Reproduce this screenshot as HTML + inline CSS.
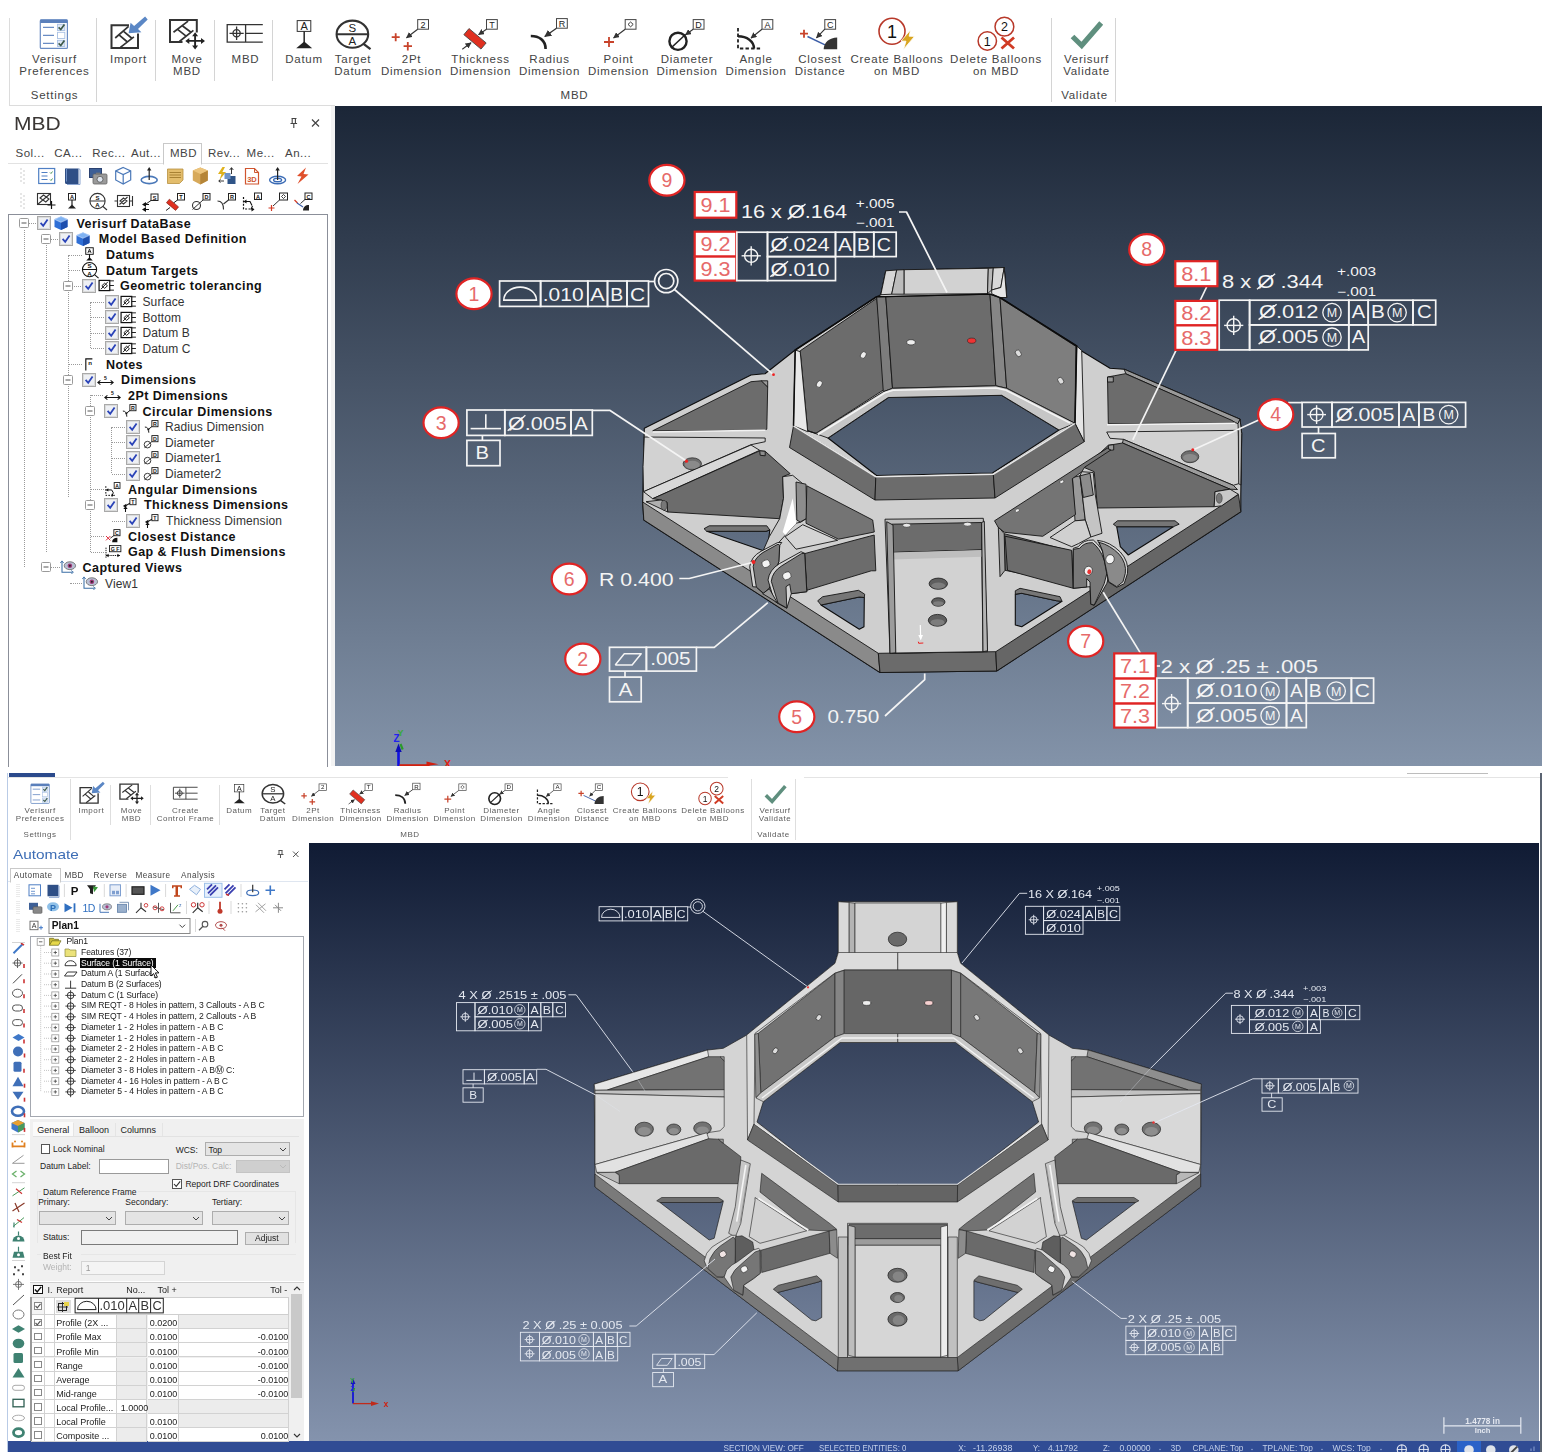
<!DOCTYPE html>
<html><head><meta charset="utf-8"><title>Verisurf MBD</title>
<style>
html,body{margin:0;padding:0;background:#fff;}
body{width:1542px;height:1452px;position:relative;overflow:hidden;font-family:"Liberation Sans",sans-serif;color:#444;}
.abs{position:absolute;}
.vp1{position:absolute;left:335px;top:106px;width:1207px;height:660px;background:linear-gradient(180deg,#1b2637 0%,#8393a9 100%);overflow:hidden;}
.vp2{position:absolute;left:309px;top:843px;width:1230px;height:598px;background:linear-gradient(180deg,#101b34 0%,#8493ad 100%);overflow:hidden;}
svg{position:absolute;left:0;top:0;overflow:visible;}
.rl{position:absolute;text-align:center;font-size:11.5px;line-height:12.3px;letter-spacing:.75px;color:#444;white-space:nowrap;transform:translateX(-50%);}
.rl2{position:absolute;text-align:center;font-size:8px;line-height:8.3px;letter-spacing:.5px;color:#5c5c5c;white-space:nowrap;transform:translateX(-50%);filter:blur(.3px)}
.vs{position:absolute;width:1px;background:#d4d4d4;}
.t1{position:absolute;white-space:nowrap;font-size:12.5px;color:#222;line-height:16px;letter-spacing:-.2px}
.t1 b{letter-spacing:-.1px;color:#111}
.t2{position:absolute;white-space:nowrap;font-size:8.8px;color:#222;line-height:11px;letter-spacing:-.1px}
.f2{position:absolute;white-space:nowrap;font-size:8.6px;color:#222;line-height:10px;}
.inp{position:absolute;background:#fff;border:1px solid #9a9a9a;box-sizing:border-box;}
.cmb{position:absolute;background:#e4e4e4;border:1px solid #adadad;box-sizing:border-box;}
</style></head>
<body>
<!-- ===== top screenshot layout ===== -->
<div class="vp1" id="vp1"></div>
<div class="abs" style="left:9px;top:18px;width:1px;height:88px;background:#dcdcdc"></div>
<div class="abs" style="left:9px;top:105px;width:326px;height:1px;background:#dcdcdc"></div>
<div class="abs" style="left:331px;top:106px;width:4px;height:660px;background:#f3f3f3"></div>
<!-- ===== bottom screenshot layout ===== -->
<div class="vp2" id="vp2"></div>
<div class="abs" style="left:7px;top:773px;width:1px;height:679px;background:#b9cbe6"></div>
<div class="abs" style="left:9px;top:773px;width:46px;height:4px;background:#2b4a8c"></div>
<div class="abs" style="left:8px;top:1441px;width:1532px;height:11px;background:#304c94"></div>
<div class="abs" style="left:1540px;top:773px;width:2px;height:679px;background:#5b6472"></div>
<div class="abs" style="left:1407px;top:773px;width:81px;height:1px;background:#bdbdbd"></div>

<!-- ===== top ribbon ===== -->
<div class="vs" style="left:96px;top:18px;height:84px"></div>
<div class="vs" style="left:155px;top:20px;height:61px"></div>
<div class="vs" style="left:214px;top:20px;height:61px"></div>
<div class="vs" style="left:272px;top:20px;height:61px"></div>
<div class="vs" style="left:1051px;top:18px;height:84px"></div>
<div class="vs" style="left:1115px;top:18px;height:84px"></div>
<div class="rl" style="left:54.5px;top:52.5px">Verisurf<br>Preferences</div>
<div class="rl" style="left:128.5px;top:52.5px">Import</div>
<div class="rl" style="left:187px;top:52.5px">Move<br>MBD</div>
<div class="rl" style="left:245.5px;top:52.5px">MBD</div>
<div class="rl" style="left:304px;top:52.5px">Datum</div>
<div class="rl" style="left:353px;top:52.5px">Target<br>Datum</div>
<div class="rl" style="left:411.5px;top:52.5px">2Pt<br>Dimension</div>
<div class="rl" style="left:480.5px;top:52.5px">Thickness<br>Dimension</div>
<div class="rl" style="left:549.5px;top:52.5px">Radius<br>Dimension</div>
<div class="rl" style="left:618.5px;top:52.5px">Point<br>Dimension</div>
<div class="rl" style="left:687px;top:52.5px">Diameter<br>Dimension</div>
<div class="rl" style="left:756px;top:52.5px">Angle<br>Dimension</div>
<div class="rl" style="left:820px;top:52.5px">Closest<br>Distance</div>
<div class="rl" style="left:897px;top:52.5px">Create Balloons<br>on MBD</div>
<div class="rl" style="left:996px;top:52.5px">Delete Balloons<br>on MBD</div>
<div class="rl" style="left:1086.5px;top:52.5px">Verisurf<br>Validate</div>
<div class="rl" style="left:54.5px;top:88.5px">Settings</div>
<div class="rl" style="left:574.5px;top:88.5px">MBD</div>
<div class="rl" style="left:1084.5px;top:88.5px">Validate</div>

<svg width="1542" height="106" viewBox="0 0 1542 106" style="left:0;top:0" font-family="Liberation Sans, sans-serif">
<defs>
<marker id="ah" viewBox="0 0 10 10" refX="9" refY="5" markerWidth="5.5" markerHeight="5.5" orient="auto"><path d="M0,0 L10,5 L0,10 z" fill="#333"/></marker>
</defs>
<!-- prefs -->
<g id="ic-prefs">
<g>
<rect x="40.300" y="19.900" width="27.100" height="28.500" rx="1" fill="#fff" stroke="#6a8cc4" stroke-width="1.200"/>
<rect x="40.300" y="19.600" width="27.100" height="3.400" fill="#5b80bb"/>
<g stroke="#6a8cc4" stroke-width="1.200"><path d="M43 27.400h11M43 35.400h11M43 43.300h11"/></g>
<g fill="#dfe8f6" stroke="#a8c0e4" stroke-width=".9"><rect x="57.500" y="24.300" width="7.300" height="6.200"/><rect x="57.500" y="32.300" width="7.300" height="6.200" fill="#fff"/><rect x="57.500" y="40.300" width="7.300" height="6.200"/></g>
<g fill="none" stroke="#3e5a4a" stroke-width="1.700"><path d="M58.600 27.300l2.200 2.200 3.600-5M58.600 43.300l2.200 2.200 3.600-5"/></g>
</g>
</g>
<!-- import -->
<g id="ic-import">
<g fill="none" stroke="#333" stroke-width="2" stroke-linecap="square">
<path d="M128 25.2H111.500V48H138V34.500"/>
<path d="M115.200 38L128.600 26.300M120.400 47.400L133.900 36.800M119.300 35.100l7.500 6.400M123.900 31.600l7.600 6.400" stroke-width="1.700" stroke-linecap="butt"/>
</g>
<path d="M147.700 19.400l-2.600-2.800-11 9.400-3.500-3.200-2 10.500 12.800-1.100-3.400-3.200z" fill="#5b87c5"/>
</g>
<!-- move mbd -->
<g id="ic-move">
<g fill="none" stroke="#333" stroke-width="2" stroke-linecap="square">
<path d="M181.500 42H170V20H196.800V31.500"/>
<path d="M173.500 32.200L188.100 21.100M179.400 41.500L193.400 30.400M177.600 29.300l8.800 7M182.300 25.800l8.700 6.400" stroke-width="1.700" stroke-linecap="butt"/>
</g>
<g stroke="#fff" stroke-width="4.500" fill="none"><path d="M195.100 34v14M187 40.900h16"/></g>
<g stroke="#222" stroke-width="1.900" fill="#222"><path d="M195.100 35v11.800M188.500 40.900h13.200" fill="none"/><path d="M195.100 32.300l3 4h-6zM195.100 49.500l3-4h-6zM185.300 40.900l4-3v6zM205 40.900l-4-3v6z" stroke="none"/></g>
</g>
<!-- MBD frame -->
<g id="ic-mbd">
<g fill="none" stroke="#333" stroke-width="1.300">
<path d="M262.800 24.600H227.200V42.100H262.800M245.600 24.600v17.500M245.600 33.300h17.200"/>
<circle cx="236.600" cy="33.300" r="3.600"/><path d="M229.500 33.300h14.200M236.600 26.600v13.400"/>
</g>
</g>
<!-- datum -->
<g id="ic-datum">
<g>
<rect x="297.200" y="20.600" width="13.600" height="10.800" fill="#fff" stroke="#333" stroke-width="1"/>
<text x="304.2" y="30" font-size="11" text-anchor="middle" fill="#222">A</text>
<path d="M304.2 31v12" stroke="#333" stroke-width="1.6"/>
<path d="M304.2 41.5l8 6.7h-16z" fill="#222"/>
</g>
</g>
<!-- target datum -->
<g id="ic-tdatum">
<g fill="none" stroke="#333" stroke-width="1.7">
<ellipse cx="352.4" cy="34.2" rx="15.800" ry="13.600" stroke-width="2.100"/><path d="M336.600 34.200h31.600" stroke-width="1.900"/><path d="M363.500 43.800l7 5.400" stroke-width="2.300"/>
</g>
<text x="352.4" y="31.800" font-size="11.500" text-anchor="middle" fill="#222">S</text>
<text x="352.4" y="45.200" font-size="11.500" text-anchor="middle" fill="#222">A</text>
</g>
<!-- 2pt -->
<g id="ic-p2">
<g>
<rect x="417.7" y="19.6" width="10.8" height="9.6" fill="#fff" stroke="#444" stroke-width="1"/><text x="423.1" y="27.8" font-size="9" text-anchor="middle" fill="#222">2</text>
<path d="M417.7 29.2L406.5 37.8" stroke="#333" stroke-width="1.1" marker-end="url(#ah)"/>
<g stroke="#c8432b" stroke-width="1.8"><path d="M395.7 33.2v8M391.7 37.2h8M407.8 42v8.4M403.6 46.2h8.4"/></g>
</g>
</g>
<!-- thickness -->
<g id="ic-thk">
<g>
<rect x="486.5" y="19.6" width="10.8" height="9.6" fill="#fff" stroke="#444" stroke-width="1"/><text x="491.9" y="27.8" font-size="9" text-anchor="middle" fill="#222">T</text>
<path d="M486.5 29.2L478.6 34.6" stroke="#333" stroke-width="1.1" marker-end="url(#ah)"/>
<path d="M462.3 49.3L471 42.8" stroke="#333" stroke-width="1.1" marker-end="url(#ah)"/>
<rect x="463.800" y="34.800" width="22.400" height="8" transform="rotate(40 475 38.8)" fill="#e03020" stroke="#444" stroke-width=".8"/>
</g>
</g>
<!-- radius -->
<g id="ic-rad">
<g>
<rect x="556.5" y="18.6" width="10.8" height="9.6" fill="#fff" stroke="#444" stroke-width="1"/><text x="561.9" y="26.8" font-size="9" text-anchor="middle" fill="#222">R</text>
<path d="M556.5 28.2L544.8 36.5" stroke="#333" stroke-width="1.3" marker-end="url(#ah)"/>
<path d="M530.8 36c8 0 14.8 4 14.8 13" fill="none" stroke="#222" stroke-width="2.6"/>
</g>
</g>
<!-- point -->
<g id="ic-pt">
<g>
<rect x="625.2" y="19.6" width="10.8" height="9.6" fill="#fff" stroke="#444" stroke-width="1"/><path d="M630.6 22l2.6 2.4-2.6 2.4-2.6-2.4z" fill="none" stroke="#222" stroke-width=".9"/>
<path d="M625.2 29.2L613.6 38" stroke="#333" stroke-width="1.1" marker-end="url(#ah)"/>
<g stroke="#c8432b" stroke-width="1.8"><path d="M609 37v10M604 42h10"/></g>
</g>
</g>
<!-- diameter -->
<g id="ic-dia">
<g>
<rect x="693.2" y="19.6" width="10.8" height="9.6" fill="#fff" stroke="#444" stroke-width="1"/><text x="698.6" y="27.8" font-size="9" text-anchor="middle" fill="#222">D</text>
<path d="M693.2 29.2L685.5 34.8" stroke="#333" stroke-width="1.1" marker-end="url(#ah)"/>
<circle cx="678" cy="41.3" r="8.6" fill="none" stroke="#222" stroke-width="2.4"/><path d="M671 48l14.5-13.5" stroke="#222" stroke-width="1.6"/>
</g>
</g>
<!-- angle -->
<g id="ic-ang">
<g>
<rect x="762" y="19.6" width="10.8" height="9.6" fill="#fff" stroke="#444" stroke-width="1"/><text x="767.4" y="27.8" font-size="9" text-anchor="middle" fill="#222">A</text>
<path d="M762 29.2L751 38" stroke="#333" stroke-width="1.1" marker-end="url(#ah)"/>
<path d="M738 28v20.5h24" fill="none" stroke="#222" stroke-width="1.8" stroke-dasharray="3.4 2.2"/>
<path d="M738 36.3c9 0 16 5 16 12.2" fill="none" stroke="#222" stroke-width="2.4"/>
</g>
</g>
<!-- closest -->
<g id="ic-cls">
<g>
<rect x="824.8" y="19.6" width="10.8" height="9.6" fill="#fff" stroke="#444" stroke-width="1"/><text x="830.2" y="27.8" font-size="9" text-anchor="middle" fill="#222">C</text>
<path d="M824.8 29.2L816.5 37.8" stroke="#333" stroke-width="1.1" marker-end="url(#ah)"/>
<g stroke="#c8432b" stroke-width="1.8"><path d="M804 29.7v8M800 33.7h8"/></g>
<path d="M807.5 36.5L825 44.8" stroke="#3d5fa8" stroke-width="1.4"/>
<path d="M837.2 49.3v-11.8c-7.5 0-13.5 5-13.5 11.8z" fill="#333"/>
</g>
</g>
<!-- create balloons -->
<g id="ic-cb">
<g>
<circle cx="892" cy="31.3" r="13" fill="#fff" stroke="#b8392a" stroke-width="1.6"/>
<text x="892" y="37.8" font-size="18" text-anchor="middle" fill="#111">1</text>
<path d="M910.5 30l-9.5 11 5 .2-2.5 8.2 11-13-5.4-.2z" fill="#d9a520" stroke="#fff" stroke-width=".8"/>
</g>
</g>
<!-- delete balloons -->
<g id="ic-db">
<g>
<circle cx="1004.4" cy="26.7" r="9.4" fill="#fff" stroke="#b8392a" stroke-width="1.5"/>
<text x="1004.4" y="31.4" font-size="12.5" text-anchor="middle" fill="#111">2</text>
<circle cx="987.3" cy="41" r="9.2" fill="#fff" stroke="#b8392a" stroke-width="1.5"/>
<text x="987.3" y="45.6" font-size="12.5" text-anchor="middle" fill="#111">1</text>
<path d="M1001.5 37.5l12.5 11M1014 37.5l-12.5 11" stroke="#d03b24" stroke-width="2.8"/>
</g>
</g>
<!-- validate -->
<g id="ic-val">
<path d="M1072.5 36.5l9.2 9 19.5-22.5" fill="none" stroke="#5f8f7e" stroke-width="5.2"/>
</g>
</svg>

<!-- ===== top-left MBD panel ===== -->
<div class="abs" style="left:13.5px;top:111.5px;font-size:17.5px;color:#3a3634;line-height:24px;transform:scaleX(1.2);transform-origin:0 0">MBD</div>
<svg width="40" height="16" viewBox="0 0 40 16" style="left:286px;top:115px"><g fill="none" stroke="#444" stroke-width="1.1"><path d="M5.5 3.5h5M6.2 3.5v5M9.4 3.5v5M4.5 8.5h6.6M7.8 8.5v4.5"/><path d="M26 4.5l7 7M33 4.5l-7 7" stroke-width="1.2"/></g></svg>
<div class="abs" style="left:8px;top:162.5px;width:320px;height:1px;background:#e2e2e2"></div>
<div class="abs" style="left:162.5px;top:143px;width:37px;height:20px;border:1px solid #c9c9c9;border-bottom:1px solid #fff;background:#fff;box-sizing:content-box"></div>
<div class="abs" style="left:15.5px;top:146.5px;font-size:11.5px;letter-spacing:.5px;color:#444;line-height:13px;white-space:nowrap">Sol...</div>
<div class="abs" style="left:54.3px;top:146.5px;font-size:11.5px;letter-spacing:.5px;color:#444;line-height:13px;white-space:nowrap">CA...</div>
<div class="abs" style="left:92.3px;top:146.5px;font-size:11.5px;letter-spacing:.5px;color:#444;line-height:13px;white-space:nowrap">Rec...</div>
<div class="abs" style="left:131px;top:146.5px;font-size:11.5px;letter-spacing:.5px;color:#444;line-height:13px;white-space:nowrap">Aut...</div>
<div class="abs" style="left:170px;top:146.5px;font-size:11.5px;letter-spacing:.5px;color:#444;line-height:13px;white-space:nowrap">MBD</div>
<div class="abs" style="left:208px;top:146.5px;font-size:11.5px;letter-spacing:.5px;color:#444;line-height:13px;white-space:nowrap">Rev...</div>
<div class="abs" style="left:246.6px;top:146.5px;font-size:11.5px;letter-spacing:.5px;color:#444;line-height:13px;white-space:nowrap">Me...</div>
<div class="abs" style="left:285px;top:146.5px;font-size:11.5px;letter-spacing:.5px;color:#444;line-height:13px;white-space:nowrap">An...</div>
<div class="abs" style="left:8px;top:214px;width:320px;height:553px;border:1px solid #8b8f99;border-bottom:none;box-sizing:border-box;background:#fff"></div>
<svg width="0" height="0" style="position:absolute"><defs>
<symbol id="i-cube" viewBox="0 0 16 16"><path d="M8 1.5l6.5 2.8v7.6L8 15 1.5 11.9V4.3z" fill="#2f6fd6"/><path d="M8 1.5l6.5 2.8L8 7.3 1.5 4.3z" fill="#7fb2f2"/><path d="M8 7.3v7.7l6.5-3.1V4.3z" fill="#1d4fae"/><path d="M8 7.3L1.5 4.3 8 1.5l6.5 2.8z" fill="none" stroke="#d8e8ff" stroke-width=".6"/></symbol>
<symbol id="i-datum" viewBox="0 0 16 16"><rect x="4" y=".8" width="8" height="7" fill="#fff" stroke="#111" stroke-width="1"/><path d="M6.3 6.3l1.7-4 1.7 4M6.9 5h2.2" fill="none" stroke="#111" stroke-width=".9"/><path d="M8 7.8v4" stroke="#111" stroke-width="1.2"/><path d="M8 11l3.5 3.5h-7z" fill="#111"/></symbol>
<symbol id="i-tdatum" viewBox="0 0 20 20"><circle cx="9" cy="9" r="7.5" fill="#fff" stroke="#111" stroke-width="1.1"/><path d="M1.5 9h15M14.5 14.5l4 3.5" stroke="#111" stroke-width="1.1"/><text x="9" y="7.6" font-size="6.5" font-weight="bold" text-anchor="middle" fill="#111" font-family="Liberation Sans">S</text><text x="9" y="15.6" font-size="6.5" font-weight="bold" text-anchor="middle" fill="#111" font-family="Liberation Sans">A</text></symbol>
<symbol id="i-gtol" viewBox="0 0 18 14"><rect x="1" y="1.500" width="11.500" height="11" fill="#fff" stroke="#111" stroke-width="1.300"/><path d="M12.500 2h4.500M12.500 7h4.500M12.500 12h4.500M3 11l7.500-8M4 7.300l3-2.800 3 2.800-3 2.800z" fill="none" stroke="#111" stroke-width="1"/></symbol>
<symbol id="i-notes" viewBox="0 0 16 16"><path d="M3 14.5V2h7" fill="none" stroke="#111" stroke-width="1.2"/><text x="7.5" y="9" font-size="6.5" font-weight="bold" text-anchor="middle" fill="#111" font-family="Liberation Sans">n</text></symbol>
<symbol id="i-dim" viewBox="0 0 20 14"><path d="M1 10h18M4 7.5L1 10l3 2.5M16 7.5l3 2.5-3 2.5" fill="none" stroke="#111" stroke-width="1.3"/><text x="10" y="7" font-size="6" font-weight="bold" text-anchor="middle" fill="#111" font-family="Liberation Sans">5</text></symbol>
<symbol id="i-rad" viewBox="0 0 18 16"><rect x="10" y=".7" width="7" height="7" fill="#fff" stroke="#111" stroke-width="1"/><text x="13.5" y="6.6" font-size="6" font-weight="bold" text-anchor="middle" fill="#111" font-family="Liberation Sans">R</text><path d="M10 7.5L5.5 11M2 8c3 0 4.500 2.500 4.500 6.500" fill="none" stroke="#111" stroke-width="1.1"/><path d="M4.600 11.600l3-.3-1.800-1.800z" fill="#111"/></symbol>
<symbol id="i-dia" viewBox="0 0 18 16"><rect x="10" y=".7" width="7" height="7" fill="#fff" stroke="#111" stroke-width="1"/><text x="13.5" y="6.600" font-size="6" font-weight="bold" text-anchor="middle" fill="#111" font-family="Liberation Sans">D</text><circle cx="5" cy="11" r="3.800" fill="none" stroke="#333" stroke-width="1.1"/><path d="M1.500 14.500L10 7.500" stroke="#333" stroke-width="1"/></symbol>
<symbol id="i-ang" viewBox="0 0 20 18"><rect x="12" y=".7" width="7" height="7" fill="#fff" stroke="#111" stroke-width="1"/><text x="15.500" y="6.600" font-size="6" font-weight="bold" text-anchor="middle" fill="#111" font-family="Liberation Sans">A</text><path d="M2 5v11h11" fill="none" stroke="#111" stroke-width="1.2" stroke-dasharray="2 1.500"/><path d="M3 9.500h6M9 9.500l2 3.500M9.500 16l1.500-3" fill="none" stroke="#111" stroke-width="1.2"/><path d="M2 9.500l3-2v4zM12 16l-3-2v4z" fill="#111"/></symbol>
<symbol id="i-thk" viewBox="0 0 18 16"><rect x="10" y=".7" width="7" height="7" fill="#fff" stroke="#111" stroke-width="1"/><text x="13.500" y="6.600" font-size="6" font-weight="bold" text-anchor="middle" fill="#111" font-family="Liberation Sans">T</text><path d="M10 6L5 9M5 16v-5" fill="none" stroke="#111" stroke-width="1.200"/><path d="M2 9l4-2.500v5zM5 9.500l2.500 3h-5z" fill="#111"/></symbol>
<symbol id="i-cls" viewBox="0 0 18 16"><rect x="10" y=".7" width="7" height="7" fill="#fff" stroke="#111" stroke-width="1"/><text x="13.500" y="6.600" font-size="6" font-weight="bold" text-anchor="middle" fill="#111" font-family="Liberation Sans">C</text><path d="M1 8l5 5M6 8l-5 5" stroke="#d23" stroke-width="1.100"/><path d="M6 10.500l4-3" stroke="#111" stroke-width="1"/><path d="M8 15c0-3 2-5 6-5v5z" fill="#111"/></symbol>
<symbol id="i-gap" viewBox="0 0 20 16"><rect x="6" y=".7" width="13" height="7" fill="#fff" stroke="#111" stroke-width="1"/><text x="12.500" y="6.600" font-size="6" font-weight="bold" text-anchor="middle" fill="#111" font-family="Liberation Sans">G F</text><path d="M2 3v12M2 12h16" fill="none" stroke="#111" stroke-width="1.100" stroke-dasharray="1.500 1"/><path d="M2 12l3-2v4zM18 12l-3-2v4z" fill="#111"/></symbol>
<symbol id="i-view" viewBox="0 0 20 16"><path d="M2 2v12h12" fill="none" stroke="#3a6ea5" stroke-width="1.200"/><path d="M0 3.500l2-2.500 2 2.500M12.500 12l2.500 2-2.500 2" fill="none" stroke="#3a6ea5" stroke-width="1"/><ellipse cx="11" cy="6.500" rx="6.500" ry="4.500" fill="#b9c0d4" stroke="#555" stroke-width=".8"/><circle cx="11" cy="6.500" r="2.600" fill="#a03a7a"/><circle cx="11" cy="6.500" r="1.100" fill="#222"/></symbol>
<symbol id="i-chk" viewBox="0 0 14 14"><rect x=".5" y=".5" width="13" height="13" fill="#f3f3f3" stroke="#a9a9a9"/><rect x="1.500" y="1.500" width="11" height="11" fill="#eef0f4" stroke="#d5d5d5" stroke-width=".8"/><path d="M3.600 6.800l2.600 3 4.400-6.300" fill="none" stroke="#2b44b8" stroke-width="1.800"/></symbol>
<symbol id="i-minus" viewBox="0 0 10 10"><rect x=".5" y=".5" width="9" height="9" rx="1" fill="#fff" stroke="#9a9a9a"/><path d="M2.500 5h5" stroke="#555" stroke-width="1"/></symbol>
<symbol id="i-plus" viewBox="0 0 10 10"><rect x=".5" y=".5" width="9" height="9" rx="1" fill="#fff" stroke="#9a9a9a"/><path d="M2.500 5h5M5 2.500v5" stroke="#555" stroke-width="1"/></symbol>
</defs></svg>
<div class="abs" style="left:24px;top:229.6px;height:337.8px;width:0;border-left:1px dotted #9a9a9a"></div>
<div class="abs" style="left:46px;top:245.2px;height:306.5px;width:0;border-left:1px dotted #9a9a9a"></div>
<div class="abs" style="left:68px;top:254.6px;height:242.4px;width:0;border-left:1px dotted #9a9a9a"></div>
<div class="abs" style="left:90px;top:301.5px;height:46.9px;width:0;border-left:1px dotted #9a9a9a"></div>
<div class="abs" style="left:90px;top:395.3px;height:156.4px;width:0;border-left:1px dotted #9a9a9a"></div>
<div class="abs" style="left:111px;top:426.6px;height:46.9px;width:0;border-left:1px dotted #9a9a9a"></div>
<div class="abs" style="left:111px;top:520.5px;height:0.0px;width:0;border-left:1px dotted #9a9a9a"></div>
<div class="abs" style="left:28px;top:223.3px;width:8px;height:0;border-top:1px dotted #9a9a9a"></div>
<div class="abs" style="left:51px;top:238.9px;width:7px;height:0;border-top:1px dotted #9a9a9a"></div>
<div class="abs" style="left:69px;top:254.6px;width:13px;height:0;border-top:1px dotted #9a9a9a"></div>
<div class="abs" style="left:69px;top:270.2px;width:11px;height:0;border-top:1px dotted #9a9a9a"></div>
<div class="abs" style="left:74px;top:285.9px;width:7px;height:0;border-top:1px dotted #9a9a9a"></div>
<div class="abs" style="left:91px;top:301.5px;width:13px;height:0;border-top:1px dotted #9a9a9a"></div>
<div class="abs" style="left:91px;top:317.1px;width:13px;height:0;border-top:1px dotted #9a9a9a"></div>
<div class="abs" style="left:91px;top:332.8px;width:13px;height:0;border-top:1px dotted #9a9a9a"></div>
<div class="abs" style="left:91px;top:348.4px;width:13px;height:0;border-top:1px dotted #9a9a9a"></div>
<div class="abs" style="left:69px;top:364.1px;width:13px;height:0;border-top:1px dotted #9a9a9a"></div>
<div class="abs" style="left:91px;top:395.3px;width:12px;height:0;border-top:1px dotted #9a9a9a"></div>
<div class="abs" style="left:112px;top:426.6px;width:13px;height:0;border-top:1px dotted #9a9a9a"></div>
<div class="abs" style="left:112px;top:442.3px;width:13px;height:0;border-top:1px dotted #9a9a9a"></div>
<div class="abs" style="left:112px;top:457.9px;width:13px;height:0;border-top:1px dotted #9a9a9a"></div>
<div class="abs" style="left:112px;top:473.5px;width:13px;height:0;border-top:1px dotted #9a9a9a"></div>
<div class="abs" style="left:91px;top:489.2px;width:13px;height:0;border-top:1px dotted #9a9a9a"></div>
<div class="abs" style="left:112px;top:520.5px;width:13px;height:0;border-top:1px dotted #9a9a9a"></div>
<div class="abs" style="left:91px;top:536.1px;width:13px;height:0;border-top:1px dotted #9a9a9a"></div>
<div class="abs" style="left:91px;top:551.7px;width:13px;height:0;border-top:1px dotted #9a9a9a"></div>
<div class="abs" style="left:47px;top:567.4px;width:13px;height:0;border-top:1px dotted #9a9a9a"></div>
<div class="abs" style="left:70px;top:583.0px;width:12px;height:0;border-top:1px dotted #9a9a9a"></div>
<svg width="10" height="10" style="left:19px;top:218.3px"><use href="#i-minus"/></svg>
<svg width="14" height="14" style="left:37px;top:216.3px"><use href="#i-chk"/></svg>
<svg width="16" height="16" style="left:53.0px;top:215.3px"><use href="#i-cube"/></svg>
<div class="t1" style="left:76.5px;top:215.8px;font-weight:bold;font-size:12.5px;letter-spacing:.45px;color:#111">Verisurf DataBase</div>
<svg width="10" height="10" style="left:41px;top:233.9px"><use href="#i-minus"/></svg>
<svg width="14" height="14" style="left:59.3px;top:231.9px"><use href="#i-chk"/></svg>
<svg width="16" height="16" style="left:75.0px;top:230.9px"><use href="#i-cube"/></svg>
<div class="t1" style="left:98.8px;top:231.4px;font-weight:bold;font-size:12.5px;letter-spacing:.45px;color:#111">Model Based Definition</div>
<svg width="15" height="15" style="left:82.0px;top:247.1px"><use href="#i-datum"/></svg>
<div class="t1" style="left:106px;top:247.1px;font-weight:bold;font-size:12.5px;letter-spacing:.45px;color:#111">Datums</div>
<svg width="19" height="19" style="left:80.5px;top:260.7px"><use href="#i-tdatum"/></svg>
<div class="t1" style="left:106px;top:262.7px;font-weight:bold;font-size:12.5px;letter-spacing:.45px;color:#111">Datum Targets</div>
<svg width="10" height="10" style="left:63.400000000000006px;top:280.9px"><use href="#i-minus"/></svg>
<svg width="14" height="14" style="left:81.5px;top:278.9px"><use href="#i-chk"/></svg>
<svg width="17" height="13" style="left:98.0px;top:279.4px"><use href="#i-gtol"/></svg>
<div class="t1" style="left:120px;top:278.4px;font-weight:bold;font-size:12.5px;letter-spacing:.45px;color:#111">Geometric tolerancing</div>
<svg width="14" height="14" style="left:104.5px;top:294.5px"><use href="#i-chk"/></svg>
<svg width="17" height="13" style="left:120.0px;top:295.0px"><use href="#i-gtol"/></svg>
<div class="t1" style="left:142.5px;top:294.0px;font-size:12px;letter-spacing:.1px;color:#333">Surface</div>
<svg width="14" height="14" style="left:104.5px;top:310.1px"><use href="#i-chk"/></svg>
<svg width="17" height="13" style="left:120.0px;top:310.6px"><use href="#i-gtol"/></svg>
<div class="t1" style="left:142.5px;top:309.6px;font-size:12px;letter-spacing:.1px;color:#333">Bottom</div>
<svg width="14" height="14" style="left:104.5px;top:325.8px"><use href="#i-chk"/></svg>
<svg width="17" height="13" style="left:120.0px;top:326.3px"><use href="#i-gtol"/></svg>
<div class="t1" style="left:142.5px;top:325.3px;font-size:12px;letter-spacing:.1px;color:#333">Datum B</div>
<svg width="14" height="14" style="left:104.5px;top:341.4px"><use href="#i-chk"/></svg>
<svg width="17" height="13" style="left:120.0px;top:341.9px"><use href="#i-gtol"/></svg>
<div class="t1" style="left:142.5px;top:340.9px;font-size:12px;letter-spacing:.1px;color:#333">Datum C</div>
<svg width="15" height="15" style="left:82.5px;top:356.6px"><use href="#i-notes"/></svg>
<div class="t1" style="left:106px;top:356.6px;font-weight:bold;font-size:12.5px;letter-spacing:.45px;color:#111">Notes</div>
<svg width="10" height="10" style="left:62.5px;top:374.7px"><use href="#i-minus"/></svg>
<svg width="14" height="14" style="left:82px;top:372.7px"><use href="#i-chk"/></svg>
<svg width="17" height="12" style="left:97.0px;top:373.7px"><use href="#i-dim"/></svg>
<div class="t1" style="left:121px;top:372.2px;font-weight:bold;font-size:12.5px;letter-spacing:.45px;color:#111">Dimensions</div>
<svg width="17" height="12" style="left:103.5px;top:389.3px"><use href="#i-dim"/></svg>
<div class="t1" style="left:128px;top:387.8px;font-weight:bold;font-size:12.5px;letter-spacing:.45px;color:#111">2Pt Dimensions</div>
<svg width="10" height="10" style="left:85px;top:406.0px"><use href="#i-minus"/></svg>
<svg width="14" height="14" style="left:104px;top:404.0px"><use href="#i-chk"/></svg>
<svg width="16" height="14" style="left:121.0px;top:404.0px"><use href="#i-rad"/></svg>
<div class="t1" style="left:142.5px;top:403.5px;font-weight:bold;font-size:12.5px;letter-spacing:.45px;color:#111">Circular Dimensions</div>
<svg width="14" height="14" style="left:125.5px;top:419.6px"><use href="#i-chk"/></svg>
<svg width="16" height="14" style="left:143.0px;top:419.6px"><use href="#i-rad"/></svg>
<div class="t1" style="left:165px;top:419.1px;font-size:12px;letter-spacing:.1px;color:#333">Radius Dimension</div>
<svg width="14" height="14" style="left:125.5px;top:435.3px"><use href="#i-chk"/></svg>
<svg width="16" height="14" style="left:143.0px;top:435.3px"><use href="#i-dia"/></svg>
<div class="t1" style="left:165px;top:434.8px;font-size:12px;letter-spacing:.1px;color:#333">Diameter</div>
<svg width="14" height="14" style="left:125.5px;top:450.9px"><use href="#i-chk"/></svg>
<svg width="16" height="14" style="left:143.0px;top:450.9px"><use href="#i-dia"/></svg>
<div class="t1" style="left:165px;top:450.4px;font-size:12px;letter-spacing:.1px;color:#333">Diameter1</div>
<svg width="14" height="14" style="left:125.5px;top:466.5px"><use href="#i-chk"/></svg>
<svg width="16" height="14" style="left:143.0px;top:466.5px"><use href="#i-dia"/></svg>
<div class="t1" style="left:165px;top:466.0px;font-size:12px;letter-spacing:.1px;color:#333">Diameter2</div>
<svg width="17" height="15" style="left:103.5px;top:481.7px"><use href="#i-ang"/></svg>
<div class="t1" style="left:128px;top:481.7px;font-weight:bold;font-size:12.5px;letter-spacing:.45px;color:#111">Angular Dimensions</div>
<svg width="10" height="10" style="left:85px;top:499.8px"><use href="#i-minus"/></svg>
<svg width="14" height="14" style="left:104px;top:497.8px"><use href="#i-chk"/></svg>
<svg width="16" height="14" style="left:121.0px;top:497.8px"><use href="#i-thk"/></svg>
<div class="t1" style="left:144px;top:497.3px;font-weight:bold;font-size:12.5px;letter-spacing:.45px;color:#111">Thickness Dimensions</div>
<svg width="14" height="14" style="left:125.5px;top:513.5px"><use href="#i-chk"/></svg>
<svg width="16" height="14" style="left:142.5px;top:513.5px"><use href="#i-thk"/></svg>
<div class="t1" style="left:166px;top:513.0px;font-size:12px;letter-spacing:.1px;color:#333">Thickness Dimension</div>
<svg width="16" height="14" style="left:104.5px;top:529.1px"><use href="#i-cls"/></svg>
<div class="t1" style="left:128px;top:528.6px;font-weight:bold;font-size:12.5px;letter-spacing:.45px;color:#111">Closest Distance</div>
<svg width="18" height="14" style="left:103.5px;top:544.7px"><use href="#i-gap"/></svg>
<div class="t1" style="left:128px;top:544.2px;font-weight:bold;font-size:12.5px;letter-spacing:.45px;color:#111">Gap &amp; Flush Dimensions</div>
<svg width="10" height="10" style="left:41px;top:562.4px"><use href="#i-minus"/></svg>
<svg width="18" height="14" style="left:60.0px;top:560.4px"><use href="#i-view"/></svg>
<div class="t1" style="left:82.5px;top:559.9px;font-weight:bold;font-size:12.5px;letter-spacing:.45px;color:#111">Captured Views</div>
<svg width="18" height="14" style="left:82.0px;top:576.0px"><use href="#i-view"/></svg>
<div class="t1" style="left:105px;top:575.5px;font-size:12px;letter-spacing:.1px;color:#333">View1</div>

<svg width="335" height="60" viewBox="0 160 335 60" style="left:0;top:160px" font-family="Liberation Sans, sans-serif">
<g fill="#bbb"><circle cx="21" cy="169" r=".7"/><circle cx="24" cy="171" r=".7"/><circle cx="21" cy="173" r=".7"/><circle cx="24" cy="175" r=".7"/><circle cx="21" cy="177" r=".7"/><circle cx="24" cy="179" r=".7"/><circle cx="21" cy="181" r=".7"/><circle cx="24" cy="183" r=".7"/>
<circle cx="21" cy="194" r=".7"/><circle cx="24" cy="196" r=".7"/><circle cx="21" cy="198" r=".7"/><circle cx="24" cy="200" r=".7"/><circle cx="21" cy="202" r=".7"/><circle cx="24" cy="204" r=".7"/><circle cx="21" cy="206" r=".7"/><circle cx="24" cy="208" r=".7"/></g>
<!-- row1 -->
<g><rect x="38.700" y="168.500" width="16" height="15" fill="#fff" stroke="#4f7fc4" stroke-width="1.200"/><path d="M41.500 172.500h6M41.500 176h6M41.500 179.500h6" stroke="#4f7fc4" stroke-width="1.100"/><path d="M50 172.500l1 1 1.500-2M50 179.500l1 1 1.500-2" stroke="#3a8a4a" stroke-width=".9" fill="none"/></g>
<g><path d="M65 168.500h13.500v15.500H66.500c-1 0-1.500-.6-1.500-1.500z" fill="#2f4f86"/><path d="M66.500 168.500v13" stroke="#6f8fc4" stroke-width="1"/><path d="M78.500 168.500l1.500 1v15h-13" fill="none" stroke="#8aa4d0" stroke-width="1"/></g>
<g><rect x="89.500" y="168.500" width="12" height="9" fill="#3d5f96" stroke="#2a4170" stroke-width="1"/><rect x="93" y="174" width="14" height="10" rx="1.200" fill="#9a9a9a" stroke="#666" stroke-width=".8"/><circle cx="100" cy="179.300" r="3" fill="#dfe6f0" stroke="#555" stroke-width=".8"/><rect x="96" y="172.600" width="4" height="1.800" fill="#777"/></g>
<g fill="none" stroke="#4a78b8" stroke-width="1.200"><path d="M123.200 167.500l7.500 3.500v9l-7.500 4-7.500-4v-9z"/><path d="M115.700 171l7.500 3.500 7.500-3.500M123.200 174.500v9.500"/></g>
<g><ellipse cx="149.200" cy="180" rx="8" ry="3.600" fill="none" stroke="#4a78b8" stroke-width="1.600"/><path d="M149.200 180v-10" stroke="#222" stroke-width="1.200"/><path d="M149.200 167l2.200 3.600h-4.400z" fill="#222"/></g>
<g><path d="M167.500 169h15.500v11l-3.500 3.500h-12z" fill="#e3bd6c" stroke="#b8913f" stroke-width=".8"/><path d="M169.500 172.500h11.500M169.500 175h11.500M169.500 177.500h11.500" stroke="#a27c2c" stroke-width=".9"/></g>
<g><path d="M200.300 167.500l7.500 3v10l-7.500 4-7.500-4v-10z" fill="#d7a95a"/><path d="M200.300 174v10.500l7.500-4v-10z" fill="#b58538"/><path d="M200.300 167.500l7.500 3-7.500 3.500-7.500-3.500z" fill="#ecc47c"/></g>
<g><path d="M222.500 167l-4.500 7h3.500l-2 6 6.500-8h-3.600l2.600-5z" fill="#e0b21c"/><rect x="227.500" y="176" width="8" height="8" fill="#2f5487"/><rect x="224.500" y="173" width="6" height="6" fill="#6f93c8"/><path d="M231.500 168v6M229.700 170l1.800-2.400 1.800 2.400M224 181h-5M220.500 179.500l-1.800 1.500 1.800 1.500" fill="none" stroke="#222" stroke-width=".9"/></g>
<g><path d="M245.500 168.500h9l4 4v11.500h-13z" fill="#fff" stroke="#d0552f" stroke-width="1.200"/><path d="M254.500 168.500v4h4" fill="none" stroke="#d0552f" stroke-width="1"/><text x="252" y="182" font-size="7.500" font-weight="bold" text-anchor="middle" fill="#d0552f">3D</text></g>
<g><ellipse cx="277.600" cy="180" rx="8" ry="3.800" fill="none" stroke="#3a6bb5" stroke-width="1.400"/><ellipse cx="277.600" cy="180" rx="4" ry="1.800" fill="none" stroke="#3a6bb5" stroke-width="1.400"/><path d="M277.600 180v-10" stroke="#222" stroke-width="1.200"/><path d="M277.600 167l2.200 3.600h-4.400z" fill="#222"/></g>
<g><path d="M306 167.500l-9 8.500 4.500.5-4 7.500 11-9.500-5-.6z" fill="#e0502c"/></g>
<!-- row2 -->
<g fill="none" stroke="#333" stroke-width="1.100"><rect x="37.500" y="193.500" width="13" height="11"/><path d="M37.500 204.500l13-11M40 198l3.500-3 5.500 4-3.200 3z"/><path d="M51.500 201v8M47.500 205h8" stroke="#111" stroke-width="1.200"/></g>
<g><rect x="68.500" y="193.500" width="7" height="6.500" fill="#fff" stroke="#222" stroke-width="1"/><text x="72" y="199" font-size="5.500" font-weight="bold" text-anchor="middle" fill="#111">A</text><path d="M72 200v5.500" stroke="#222" stroke-width="1.200"/><path d="M72 204.500l4 4h-8z" fill="#222"/></g>
<g fill="none" stroke="#333" stroke-width="1.100"><circle cx="97.500" cy="201" r="7.600"/><path d="M90 201h15M103 206.500l4 3.500"/></g><text x="97.500" y="199.800" font-size="6" font-weight="bold" text-anchor="middle" fill="#111">S</text><text x="97.500" y="206.800" font-size="6" font-weight="bold" text-anchor="middle" fill="#111">A</text>
<g fill="none" stroke="#333" stroke-width="1.100"><rect x="117.500" y="195.500" width="12" height="11"/><path d="M114.500 201h3M129.500 201h3.500M132.500 196v10M119.500 204.500l8-7.500M120 201l3.500-3 3.500 3-3.500 3z"/></g>
<g><rect x="151" y="194" width="7" height="6.500" fill="#fff" stroke="#222" stroke-width="1"/><text x="154.500" y="199.500" font-size="5.500" font-weight="bold" text-anchor="middle" fill="#111">S</text><path d="M151 200.500l-5 3.500" stroke="#222" stroke-width="1"/><path d="M142 204.500l4-2.500v5zM142 209.500l4-2.500v5z" fill="#111"/><path d="M146 204.500h3M146 209.500h3" stroke="#111"/></g>
<g><rect x="177.500" y="193.500" width="7" height="6.500" fill="#fff" stroke="#222" stroke-width="1"/><text x="181" y="199" font-size="5.500" font-weight="bold" text-anchor="middle" fill="#111">T</text><path d="M177.500 200l-4 3M166 210.500l4-3" stroke="#222" stroke-width="1"/><rect x="166.500" y="202.500" width="12" height="4.600" transform="rotate(40 172.500 204.800)" fill="#e03020" stroke="#7a2015" stroke-width=".6"/></g>
<g><rect x="203" y="193.500" width="7" height="6.500" fill="#fff" stroke="#222" stroke-width="1"/><text x="206.500" y="199" font-size="5.500" font-weight="bold" text-anchor="middle" fill="#111">D</text><circle cx="196.500" cy="205.500" r="4" fill="none" stroke="#333" stroke-width="1.100"/><path d="M192.500 209.500l10.500-9.500" stroke="#333" stroke-width="1"/></g>
<g><rect x="228.500" y="193.500" width="7" height="6.500" fill="#fff" stroke="#222" stroke-width="1"/><text x="232" y="199" font-size="5.500" font-weight="bold" text-anchor="middle" fill="#111">R</text><path d="M228.500 200l-5 4M217.500 201c4 0 6 3 6 8.500" fill="none" stroke="#333" stroke-width="1.100"/></g>
<g><rect x="254.500" y="193" width="7" height="6.500" fill="#fff" stroke="#222" stroke-width="1"/><text x="258" y="198.500" font-size="5.500" font-weight="bold" text-anchor="middle" fill="#111">A</text><path d="M243.500 197v12h10" fill="none" stroke="#111" stroke-width="1.200" stroke-dasharray="2 1.400"/><path d="M245 201.500h5l2 4M251 209.500l1.500-3.500" fill="none" stroke="#111" stroke-width="1.100"/><path d="M243.500 201.500l3-2v4zM254.500 209.500l-3-2v4z" fill="#111"/></g>
<g><rect x="279.500" y="193" width="8" height="7" fill="#fff" stroke="#222" stroke-width="1"/><path d="M283.500 194.500l2 2-2 2-2-2z" fill="none" stroke="#111" stroke-width=".8"/><path d="M279.500 200l-6.500 6" stroke="#333" stroke-width="1"/><path d="M271.500 205v6M268.500 208h6" stroke="#d23a24" stroke-width="1.200"/></g>
<g><rect x="305" y="193" width="7" height="6.500" fill="#fff" stroke="#222" stroke-width="1"/><text x="308.500" y="198.500" font-size="5.500" font-weight="bold" text-anchor="middle" fill="#111">C</text><path d="M305 199.500l-4.500 4" stroke="#333" stroke-width="1"/><path d="M294.500 200l3 3" stroke="#d23a24" stroke-width="1.200"/><path d="M297 203l6 4" stroke="#3d5fa8" stroke-width="1.100"/><path d="M309 210.500v-5.500c-3.500 0-6 2-6 5.500z" fill="#222"/></g>
</svg>

<div class="abs" style="left:335px;top:106px;width:1207px;height:660px;overflow:hidden"><svg width="1207" height="660" viewBox="335 106 1207 660" style="left:0;top:0">
<path d="M644.3,428.3 L751.0,375.0 L765.0,373.7 L795.2,350.0 L876.7,296.7 L880.8,294.7 L885.8,270.8 L1004.2,267.5 L1006.7,297.5 L1000.0,297.5 L1076.7,346.0 L1080.0,350.0 L1110.0,368.3 L1124.2,369.2 L1240.0,419.2 L1241.7,433.3 L1240.8,495.0 L1240.8,511.7 L996.7,671.0 L880.0,672.5 L643.8,520.0 L642.7,502.0Z M828.0,438.0 L888.3,397.5 L1001.7,395.3 L1059.0,430.0 L992.5,473.0 L876.5,475.5Z M706.8,531.3 L766.0,531.3 L769.8,530.0 L767.7,547.5 L763.5,550.8Z M821.0,605.0 L859.3,597.0 L864.3,597.5 L864.0,626.7 L859.3,629.2Z M1116.7,526.7 L1173.3,526.7 L1128.3,555.0 L1120.3,546.7Z M1015.3,594.2 L1021.7,593.3 L1056.7,600.8 L1062.0,601.3 L1021.7,626.7 L1015.3,625.0Z" fill="#cfcfcf" fill-rule="evenodd" stroke="#0c0c0c" stroke-width="1.1" stroke-linejoin="round"/>
<polygon points="642.7,502.0 878.3,653.3 880.0,672.5 643.8,520.0" fill="#8a8a8a" stroke="#141414" stroke-width="0.9" stroke-linejoin="round"/>
<polygon points="878.3,653.3 995.8,651.7 996.7,671.0 880.0,672.5" fill="#6b6b6b" stroke="#141414" stroke-width="0.9" stroke-linejoin="round"/>
<polygon points="995.8,651.7 1238.5,494.5 1240.8,511.7 996.7,671.0" fill="#666" stroke="#141414" stroke-width="0.9" stroke-linejoin="round"/>
<polygon points="880.8,294.7 885.8,270.8 896.7,270.0 891.7,294.2" fill="#d6d6d6" stroke="#141414" stroke-width="0.9" stroke-linejoin="round"/>
<polygon points="896.7,270.0 904.2,269.7 904.2,294.2 891.7,294.2" fill="#bcbcbc" stroke="#141414" stroke-width="0.9" stroke-linejoin="round"/>
<polygon points="904.2,269.7 988.3,268.3 987.5,293.7 904.2,294.2" fill="#d2d2d2" stroke="#141414" stroke-width="0.9" stroke-linejoin="round"/>
<polygon points="988.3,268.3 993.3,268.0 991.7,290.0 987.5,293.7" fill="#b8b8b8" stroke="#141414" stroke-width="0.9" stroke-linejoin="round"/>
<polygon points="993.3,268.0 1004.2,267.5 1000.8,287.5 991.7,290.0" fill="#d8d8d8" stroke="#141414" stroke-width="0.9" stroke-linejoin="round"/>
<polygon points="1000.8,287.5 1004.2,267.5 1006.7,297.5 1000.0,297.5 991.7,293.7 991.7,290.0" fill="#e6e6e6" stroke="#141414" stroke-width="0.9" stroke-linejoin="round"/>
<polygon points="800.2,350.8 876.8,298.3 886.0,388.3 816.0,433.3 807.7,430.8" fill="#6c6c6c" stroke="#141414" stroke-width="0.9" stroke-linejoin="round"/>
<polygon points="876.7,297.0 885.8,296.7 892.5,388.3 883.3,391.7" fill="#7c7c7c" stroke="#141414" stroke-width="0.9" stroke-linejoin="round"/>
<polygon points="885.8,296.7 990.0,294.2 995.8,385.8 892.5,388.3" fill="#6c6c6c" stroke="#141414" stroke-width="0.9" stroke-linejoin="round"/>
<polygon points="990.0,294.2 1000.0,298.0 1006.7,388.3 995.8,385.8" fill="#868686" stroke="#141414" stroke-width="0.9" stroke-linejoin="round"/>
<polygon points="1000.0,298.0 1075.8,346.3 1075.0,423.3 1006.7,388.3" fill="#7e7e7e" stroke="#141414" stroke-width="0.9" stroke-linejoin="round"/>
<polygon points="807.7,430.8 816.0,433.3 883.3,391.7 892.5,388.3 995.8,385.8 1006.7,388.3 1075.0,423.3 1059.0,430.0 1001.7,395.3 888.3,397.5 828.0,438.0" fill="#c6c6c6" stroke="#141414" stroke-width="0.9" stroke-linejoin="round"/>
<polyline points="818.0,434.5 885.0,392.8 893.0,390.3 996.0,388.0 1006.0,390.3 1070.0,423.0" fill="none" stroke="#f4f4f4" stroke-width="1.6"/>
<polygon points="795.2,350.0 800.2,351.7 807.7,431.7 793.5,425.8" fill="#e8e8e8" stroke="#141414" stroke-width="0.9" stroke-linejoin="round"/>
<polygon points="1076.7,346.0 1081.7,350.5 1084.2,441.7 1075.0,423.3" fill="#e4e4e4" stroke="#141414" stroke-width="0.9" stroke-linejoin="round"/>
<polygon points="793.5,425.8 875.8,476.7 875.0,500.0 789.5,447.5" fill="#6c6c6c" stroke="#141414" stroke-width="0.9" stroke-linejoin="round"/>
<polygon points="875.8,476.7 993.3,474.2 995.0,498.0 875.0,500.0" fill="#6c6c6c" stroke="#141414" stroke-width="0.9" stroke-linejoin="round"/>
<polygon points="993.3,474.2 1075.0,423.3 1084.2,441.7 995.0,498.0" fill="#6c6c6c" stroke="#141414" stroke-width="0.9" stroke-linejoin="round"/>
<polyline points="793.5,425.8 875.8,476.7 993.3,474.2 1075.0,423.3" fill="none" stroke="#e8e8e8" stroke-width="1.4"/>
<polyline points="793.5,425.8 795.2,350.0 876.7,296.7" fill="none" stroke="#0c0c0c" stroke-width="1.5"/>
<polyline points="1000.0,297.5 1076.7,346.0 1075.0,423.3" fill="none" stroke="#0c0c0c" stroke-width="1.5"/>
<polyline points="876.7,296.7 885.8,296.7 990.0,294.2 1000.0,297.5" fill="none" stroke="#0c0c0c" stroke-width="1.2"/>
<ellipse cx="819.3" cy="384.0" rx="2.6" ry="3.6" fill="#eee" stroke="#222" stroke-width="0.6" transform="rotate(35 819.3 384.0)"/>
<ellipse cx="863.3" cy="355.0" rx="2.6" ry="3.6" fill="#eee" stroke="#222" stroke-width="0.6" transform="rotate(35 863.3 355.0)"/>
<ellipse cx="911.0" cy="342.3" rx="4.2" ry="2.6" fill="#eee" stroke="#222" stroke-width="0.6"/>
<ellipse cx="971.7" cy="340.7" rx="4.2" ry="2.6" fill="#e33" stroke="#222" stroke-width="0.6"/>
<ellipse cx="1018.3" cy="353.3" rx="2.6" ry="3.6" fill="#ddd" stroke="#222" stroke-width="0.6" transform="rotate(-35 1018.3 353.3)"/>
<ellipse cx="1060.7" cy="380.7" rx="2.6" ry="3.6" fill="#ddd" stroke="#222" stroke-width="0.6" transform="rotate(-35 1060.7 380.7)"/>
<polygon points="652.7,430.8 751.0,381.7 761.3,380.8 767.7,387.0 766.8,429.2 764.3,430.3" fill="#6c6c6c" stroke="#141414" stroke-width="0.9" stroke-linejoin="round"/>
<polygon points="761.3,380.8 767.7,380.8 767.7,387.0" fill="#9a9a9a" stroke="#141414" stroke-width="0.9" stroke-linejoin="round"/>
<polyline points="652.7,432.0 765.7,430.3" fill="none" stroke="#f2f2f2" stroke-width="1.5"/>
<polygon points="644.3,437.0 765.2,438.0 765.2,441.7 751.0,444.7 643.5,491.7 643.0,466.7" fill="#d2d2d2" stroke="#141414" stroke-width="0.9" stroke-linejoin="round"/>
<ellipse cx="692.3" cy="463.8" rx="9.2" ry="6" fill="#6e6e6e" stroke="#222" stroke-width="0.7"/>
<ellipse cx="692.3" cy="464.8" rx="7.5" ry="4" fill="#8a8a8a" stroke="None" stroke-width="0"/>
<polygon points="643.5,491.7 751.0,445.0 759.7,450.3 652.7,498.7" fill="#d8d8d8" stroke="#141414" stroke-width="0.9" stroke-linejoin="round"/>
<polygon points="652.7,498.7 759.7,450.8 765.2,451.3 790.2,473.7 782.7,476.7 783.5,498.3 779.7,518.7 667.7,512.0 666.8,502.0 661.0,500.0" fill="#6c6c6c" stroke="#141414" stroke-width="0.9" stroke-linejoin="round"/>
<polygon points="759.7,450.8 765.2,451.3 765.2,455.8 760.2,455.3" fill="#8e8e8e" stroke="#141414" stroke-width="0.9" stroke-linejoin="round"/>
<polygon points="646.0,501.7 661.0,500.0 666.8,502.0 667.7,512.0" fill="#b0b0b0" stroke="#141414" stroke-width="0.9" stroke-linejoin="round"/>
<ellipse cx="664.0" cy="505.3" rx="3" ry="5" fill="#777" stroke="#222" stroke-width="0.5"/>
<polygon points="704.0,528.7 709.3,525.8 766.8,525.8 769.8,530.0 766.0,531.3 706.8,531.3" fill="#767676" stroke="#141414" stroke-width="0.9" stroke-linejoin="round"/>
<polygon points="782.7,476.7 792.7,475.3 802.7,483.7 806.8,518.3 801.0,522.0 796.0,523.3 785.2,535.3 777.7,543.7 762.7,551.7 769.3,536.7 779.7,518.7 783.5,498.3" fill="#cacaca" stroke="#141414" stroke-width="0.9" stroke-linejoin="round"/>
<polygon points="792.7,498.3 796.3,523.3 785.5,535.0 782.7,532.0" fill="#ffffff"/>
<polygon points="796.0,482.0 806.0,484.2 806.8,518.3 800.2,522.0 796.8,520.0" fill="#8c8c8c" stroke="#141414" stroke-width="0.9" stroke-linejoin="round"/>
<polygon points="806.8,485.8 872.7,520.0 874.3,532.0 838.5,539.2 806.0,523.3" fill="#747474" stroke="#141414" stroke-width="0.9" stroke-linejoin="round"/>
<polygon points="802.7,524.7 837.7,540.3 796.0,549.2 785.2,536.7" fill="#d4d4d4" stroke="#141414" stroke-width="0.9" stroke-linejoin="round"/>
<polygon points="804.3,553.7 869.3,536.3 874.2,535.0 875.8,570.8 871.3,570.8 806.8,590.3" fill="#6c6c6c" stroke="#141414" stroke-width="0.9" stroke-linejoin="round"/>
<path d="M 752.7,586.7 L 749.7,566.7 Q 751.0,556.7 761.0,551.3 L 777.7,542.5 L 781.8,542.5 L 779.7,545.3 L 778.8,561.7 L 769.3,588.3 L 763.5,593.7 L 756.3,587.0 Z" fill="#d4d4d4" stroke="#141414" stroke-width="0.9" stroke-linejoin="round"/>
<path d="M 756.3,587.0 L 753.2,566.7 Q 754.0,558.3 763.0,552.5 L 778.0,544.2 L 779.7,545.3 L 778.8,561.7 L 769.3,588.3 L 763.5,593.3 Z" fill="#7a7a7a" stroke="#141414" stroke-width="0.9" stroke-linejoin="round"/>
<ellipse cx="766.0" cy="563.7" rx="4.2" ry="3.8" fill="#f4f4f4" stroke="#222" stroke-width="0.6" transform="rotate(-30 766.0 563.7)"/>
<path d="M 774.3,600.8 L 768.0,580.0 Q 769.3,570.0 779.3,563.7 L 801.0,551.7 L 804.7,553.3 L 806.8,591.7 L 791.3,593.7 L 786.8,608.3 L 777.7,603.3 Z" fill="#d4d4d4" stroke="#141414" stroke-width="0.9" stroke-linejoin="round"/>
<path d="M 778.0,603.0 L 771.3,581.3 Q 772.3,571.7 781.8,565.8 L 801.3,553.7 L 804.7,553.3 L 806.8,591.7 L 791.3,593.7 L 789.7,584.2 L 786.0,586.7 L 786.8,608.0 Z" fill="#7a7a7a" stroke="#141414" stroke-width="0.9" stroke-linejoin="round"/>
<ellipse cx="786.8" cy="575.8" rx="4.4" ry="3.8" fill="#f4f4f4" stroke="#222" stroke-width="0.6" transform="rotate(-30 786.8 575.8)"/>
<polygon points="762.7,593.7 769.3,588.7 777.7,603.3 774.3,600.8" fill="#9c9c9c" stroke="#141414" stroke-width="0.9" stroke-linejoin="round"/>
<polygon points="817.7,600.8 822.7,596.7 858.5,590.3 864.7,594.2 864.3,597.5 859.3,597.0 821.0,605.0" fill="#767676" stroke="#141414" stroke-width="0.9" stroke-linejoin="round"/>
<polygon points="885.0,519.2 983.3,518.3 987.5,651.7 890.0,653.3" fill="#bdbdbd" stroke="#141414" stroke-width="0.9" stroke-linejoin="round"/>
<polygon points="891.7,524.2 981.7,522.5 981.7,550.0 891.7,552.5" fill="#6c6c6c" stroke="#141414" stroke-width="0.9" stroke-linejoin="round"/>
<polygon points="891.7,552.5 981.7,550.0 983.0,651.7 895.3,653.0" fill="#d2d2d2" stroke="#141414" stroke-width="0.9" stroke-linejoin="round"/>
<polygon points="891.7,552.5 981.7,550.0 981.7,556.7 892.0,559.5" fill="#bebebe"/>
<polygon points="886.7,521.7 893.0,525.0 895.8,652.8 890.0,653.3" fill="#9c9c9c" stroke="#141414" stroke-width="0.9" stroke-linejoin="round"/>
<polygon points="981.7,522.5 984.3,521.3 987.5,650.8 983.0,651.7" fill="#b4b4b4" stroke="#141414" stroke-width="0.9" stroke-linejoin="round"/>
<ellipse cx="938.3" cy="583.7" rx="9.2" ry="5.6" fill="#5e5e5e" stroke="#1a1a1a" stroke-width="0.8"/>
<ellipse cx="938.3" cy="585.6" rx="6.8999999999999995" ry="3.08" fill="#7d7d7d" stroke="None" stroke-width="0"/>
<ellipse cx="938.3" cy="602.0" rx="6.7" ry="4.2" fill="#5e5e5e" stroke="#1a1a1a" stroke-width="0.8"/>
<ellipse cx="938.3" cy="603.5" rx="5.025" ry="2.3100000000000005" fill="#7d7d7d" stroke="None" stroke-width="0"/>
<ellipse cx="937.5" cy="620.3" rx="9.2" ry="5.9" fill="#5e5e5e" stroke="#1a1a1a" stroke-width="0.8"/>
<ellipse cx="937.5" cy="622.4" rx="6.8999999999999995" ry="3.2450000000000006" fill="#7d7d7d" stroke="None" stroke-width="0"/>
<ellipse cx="906.7" cy="525.3" rx="4" ry="2" fill="#e8e8e8" stroke="#222" stroke-width="0.6"/>
<ellipse cx="967.5" cy="524.2" rx="4" ry="2" fill="#e8e8e8" stroke="#222" stroke-width="0.6"/>
<polyline points="920.3,625.0 920.7,639.2" fill="none" stroke="#fff" stroke-width="1.2"/>
<polygon points="918.3,635.0 923.0,635.0 920.7,640.3" fill="#fff"/>
<polyline points="918.3,641.7 918.7,643.3 923.3,643.0" fill="none" stroke="#e22" stroke-width="1"/>
<polygon points="1004.2,533.7 1071.7,551.2 1073.3,584.2 1005.0,570.3" fill="#6c6c6c" stroke="#141414" stroke-width="0.9" stroke-linejoin="round"/>
<polygon points="998.3,526.7 1004.2,533.7 1005.0,570.3 1000.0,576.7" fill="#a4a4a4" stroke="#141414" stroke-width="0.9" stroke-linejoin="round"/>
<polygon points="1124.2,369.2 1240.0,419.2 1238.0,423.7 1125.8,373.7" fill="#9a9a9a" stroke="#141414" stroke-width="0.9" stroke-linejoin="round"/>
<polygon points="1107.5,377.0 1114.2,375.8 1125.3,373.7 1231.7,420.3 1235.3,422.8 1108.3,423.7" fill="#6c6c6c" stroke="#141414" stroke-width="0.9" stroke-linejoin="round"/>
<polygon points="1107.5,377.0 1113.3,377.0 1113.3,382.0 1107.5,382.0" fill="#9a9a9a" stroke="#141414" stroke-width="0.9" stroke-linejoin="round"/>
<polyline points="1107.0,424.7 1235.3,423.3" fill="none" stroke="#f4f4f4" stroke-width="1.5"/>
<polygon points="1106.7,432.0 1238.3,430.3 1240.0,483.3 1233.3,485.3 1123.3,439.3 1110.0,438.3" fill="#d2d2d2" stroke="#141414" stroke-width="0.9" stroke-linejoin="round"/>
<polygon points="1238.0,423.7 1240.0,419.2 1241.7,433.3 1240.8,485.0 1238.7,483.7 1238.3,430.3" fill="#bbb" stroke="#141414" stroke-width="0.9" stroke-linejoin="round"/>
<ellipse cx="1190.0" cy="456.7" rx="8.8" ry="6" fill="#6e6e6e" stroke="#222" stroke-width="0.7"/>
<ellipse cx="1190.0" cy="457.8" rx="7" ry="3.8" fill="#8a8a8a" stroke="None" stroke-width="0"/>
<polygon points="1123.3,439.3 1233.3,485.3 1237.5,489.5 1230.0,489.2 1122.5,443.0" fill="#9c9c9c" stroke="#141414" stroke-width="0.9" stroke-linejoin="round"/>
<polygon points="1108.3,445.3 1122.5,443.0 1230.0,489.2 1215.0,491.7 1214.2,506.7 1097.5,508.0 1094.2,471.7 1084.2,467.5" fill="#6c6c6c" stroke="#141414" stroke-width="0.9" stroke-linejoin="round"/>
<polygon points="1108.3,445.3 1113.7,444.7 1113.7,450.0 1108.7,450.3" fill="#9a9a9a" stroke="#141414" stroke-width="0.9" stroke-linejoin="round"/>
<polygon points="1215.0,491.7 1230.0,489.2 1238.3,494.2 1221.7,505.8 1214.2,506.7" fill="#c8c8c8" stroke="#141414" stroke-width="0.9" stroke-linejoin="round"/>
<ellipse cx="1219.2" cy="498.3" rx="3" ry="5" fill="#777" stroke="#222" stroke-width="0.5"/>
<polygon points="1072.5,477.5 1080.0,475.8 1085.3,520.0 1075.0,520.8" fill="#9a9a9a" stroke="#141414" stroke-width="0.9" stroke-linejoin="round"/>
<polygon points="1080.0,475.8 1081.7,471.7 1093.3,472.5 1095.3,495.0 1102.0,533.3 1090.8,537.0 1085.3,520.0" fill="#c4c4c4" stroke="#141414" stroke-width="0.9" stroke-linejoin="round"/>
<polygon points="1080.0,475.8 1090.0,473.3 1093.3,495.0 1083.3,497.5" fill="#8c8c8c" stroke="#141414" stroke-width="0.9" stroke-linejoin="round"/>
<polygon points="1005.0,536.2 1071.7,550.3 1073.3,588.3 1007.5,570.3" fill="#6c6c6c" stroke="#141414" stroke-width="0.9" stroke-linejoin="round"/>
<polygon points="994.5,520.8 1107.3,448.2 1110.8,450.0 1084.5,467.3 1081.8,471.8 1072.3,478.7 1075.5,514.5 1042.7,536.3 1004.5,532.3 998.2,527.3" fill="#747474" stroke="#141414" stroke-width="0.9" stroke-linejoin="round"/>
<ellipse cx="1061.8" cy="481.8" rx="2.2" ry="1.5" fill="#eee" stroke="#333" stroke-width="0.5" transform="rotate(-32 1061.8 481.8)"/>
<ellipse cx="1017.3" cy="510.5" rx="2.2" ry="1.5" fill="#eee" stroke="#333" stroke-width="0.5" transform="rotate(-32 1017.3 510.5)"/>
<polygon points="1050.0,537.5 1075.0,520.8 1085.3,520.0 1090.8,537.0 1078.3,543.7 1071.7,546.7" fill="#d0d0d0" stroke="#141414" stroke-width="0.9" stroke-linejoin="round"/>
<path d="M 1073.3,548.3 L 1078.3,546.7 Q 1083.3,539.7 1093.3,540.0 Q 1101.7,546.7 1106.7,560.0 L 1110.3,571.7 L 1106.7,583.7 L 1094.2,605.3 L 1090.8,604.2 L 1090.0,586.7 L 1073.3,588.3 Z" fill="#d2d2d2" stroke="#141414" stroke-width="0.9" stroke-linejoin="round"/>
<path d="M 1073.3,549.3 L 1079.7,548.3 Q 1084.2,542.3 1092.5,542.7 Q 1100.0,548.3 1104.2,560.0 L 1107.5,570.8 L 1104.2,583.7 L 1094.2,605.0 L 1090.8,604.2 L 1090.0,582.0 L 1086.7,578.7 L 1086.7,587.0 L 1073.3,588.3 Z" fill="#787878" stroke="#141414" stroke-width="0.9" stroke-linejoin="round"/>
<ellipse cx="1088.3" cy="570.8" rx="4" ry="4.6" fill="#f2f2f2" stroke="#222" stroke-width="0.6" transform="rotate(20 1088.3 570.8)"/>
<ellipse cx="1089.3" cy="571.7" rx="2" ry="2.4" fill="#e33" stroke="None" stroke-width="0" transform="rotate(20 1089.3 571.7)"/>
<path d="M 1097.5,540.3 Q 1110.0,541.7 1120.3,552.0 Q 1129.2,561.7 1127.5,573.3 L 1124.2,583.7 L 1116.7,587.3 L 1108.3,582.0 L 1106.7,573.3 L 1102.0,548.3 Z" fill="#d2d2d2" stroke="#141414" stroke-width="0.9" stroke-linejoin="round"/>
<path d="M 1099.0,542.3 Q 1110.0,545.0 1119.2,554.3 Q 1126.7,563.3 1125.3,573.3 L 1123.0,581.7 L 1116.7,586.7 L 1108.7,581.7 L 1107.0,573.3 L 1102.5,550.8 Z" fill="#8a8a8a" stroke="#141414" stroke-width="0.9" stroke-linejoin="round"/>
<ellipse cx="1110.0" cy="559.2" rx="4.2" ry="4.6" fill="#f2f2f2" stroke="#222" stroke-width="0.6" transform="rotate(20 1110.0 559.2)"/>
<polygon points="1113.3,524.2 1117.5,520.8 1175.0,520.8 1179.2,524.2 1173.3,526.7 1116.7,526.7" fill="#767676" stroke="#141414" stroke-width="0.9" stroke-linejoin="round"/>
<polygon points="1015.3,590.8 1020.0,588.3 1060.0,596.7 1062.0,601.3 1056.7,600.8 1021.7,593.3 1015.3,594.2" fill="#767676" stroke="#141414" stroke-width="0.9" stroke-linejoin="round"/>
</svg></div>

<div class="abs" style="left:335px;top:106px;width:1207px;height:660px;overflow:hidden"><svg width="1207" height="660" viewBox="335 106 1207 660" style="left:0;top:0" font-family="Liberation Sans, sans-serif">
<polyline points="899.0,212.0 906.5,212.0 947.0,292.5" fill="none" stroke="#f4f4f4" stroke-width="1.7" stroke-linejoin="round"/>
<ellipse cx="666.9" cy="180.2" rx="17.6" ry="15.4" fill="#fff" stroke="#e02424" stroke-width="2.2"/>
<text x="666.9" y="187.0" font-size="19.5" fill="#e66a6a" text-anchor="middle">9</text>
<rect x="694.7" y="192.0" width="41.6" height="25.7" fill="#fff" stroke="#e02424" stroke-width="2.2"/>
<text x="715.5" y="211.8" font-size="19.5" fill="#e66a6a" text-anchor="middle" textLength="30.0" lengthAdjust="spacingAndGlyphs">9.1</text>
<rect x="694.7" y="231.7" width="41.6" height="24.9" fill="#fff" stroke="#e02424" stroke-width="2.2"/>
<text x="715.5" y="251.2" font-size="19.5" fill="#e66a6a" text-anchor="middle" textLength="30.0" lengthAdjust="spacingAndGlyphs">9.2</text>
<rect x="694.7" y="256.6" width="41.6" height="24.0" fill="#fff" stroke="#e02424" stroke-width="2.2"/>
<text x="715.5" y="275.6" font-size="19.5" fill="#e66a6a" text-anchor="middle" textLength="30.0" lengthAdjust="spacingAndGlyphs">9.3</text>
<line x1="787.6" y1="219.4" x2="805.5" y2="204.0" stroke="#f4f4f4" stroke-width="1.4"/>
<text x="741.0" y="218.2" font-size="17.8" fill="#f4f4f4" textLength="106.0" lengthAdjust="spacingAndGlyphs">16 x Ø.164</text>
<text x="855.7" y="208.0" font-size="12" fill="#f4f4f4" textLength="38.8" lengthAdjust="spacingAndGlyphs">+.005</text>
<text x="855.7" y="227.1" font-size="12" fill="#f4f4f4" textLength="38.8" lengthAdjust="spacingAndGlyphs">−.001</text>
<rect x="736.8" y="232.2" width="30.7" height="48.4" fill="none" stroke="#f4f4f4" stroke-width="1.7"/>
<rect x="767.5" y="232.2" width="68.0" height="24.4" fill="none" stroke="#f4f4f4" stroke-width="1.7"/>
<rect x="835.5" y="232.2" width="18.9" height="24.4" fill="none" stroke="#f4f4f4" stroke-width="1.7"/>
<rect x="854.4" y="232.2" width="19.4" height="24.4" fill="none" stroke="#f4f4f4" stroke-width="1.7"/>
<rect x="873.8" y="232.2" width="22.4" height="24.4" fill="none" stroke="#f4f4f4" stroke-width="1.7"/>
<rect x="767.5" y="256.6" width="68.0" height="24.0" fill="none" stroke="#f4f4f4" stroke-width="1.7"/>
<circle cx="751.2" cy="255.8" r="6.6" fill="none" stroke="#f4f4f4" stroke-width="1.4"/>
<polyline points="741.6,255.8 760.8,255.8" fill="none" stroke="#f4f4f4" stroke-width="1.4" stroke-linejoin="round"/>
<polyline points="751.2,246.2 751.2,265.4" fill="none" stroke="#f4f4f4" stroke-width="1.4" stroke-linejoin="round"/>
<line x1="770.3" y1="252.2" x2="788.1" y2="236.8" stroke="#f4f4f4" stroke-width="1.4"/>
<text x="770.6" y="251.0" font-size="17.8" fill="#f4f4f4" textLength="59.0" lengthAdjust="spacingAndGlyphs">Ø.024</text>
<text x="838.0" y="251.0" font-size="17.8" fill="#f4f4f4" textLength="13.9" lengthAdjust="spacingAndGlyphs">A</text>
<text x="856.9" y="251.0" font-size="17.8" fill="#f4f4f4" textLength="13.1" lengthAdjust="spacingAndGlyphs">B</text>
<text x="876.8" y="251.0" font-size="17.8" fill="#f4f4f4" textLength="14.2" lengthAdjust="spacingAndGlyphs">C</text>
<line x1="770.3" y1="276.7" x2="788.1" y2="261.3" stroke="#f4f4f4" stroke-width="1.4"/>
<text x="770.6" y="275.5" font-size="17.8" fill="#f4f4f4" textLength="59.0" lengthAdjust="spacingAndGlyphs">Ø.010</text>
<polyline points="674.5,289.5 773.5,374.7" fill="none" stroke="#f4f4f4" stroke-width="1.7" stroke-linejoin="round"/>
<circle cx="666.2" cy="281.1" r="11.6" fill="none" stroke="#f4f4f4" stroke-width="1.7"/><circle cx="666.2" cy="281.1" r="7.6" fill="none" stroke="#f4f4f4" stroke-width="1.7"/>
<polyline points="648.5,281.5 655.0,281.5" fill="none" stroke="#f4f4f4" stroke-width="1.7" stroke-linejoin="round"/>
<circle cx="773.5" cy="374.7" r="1.4" fill="#e22"/>
<ellipse cx="474.0" cy="293.7" rx="17.6" ry="15.4" fill="#fff" stroke="#e02424" stroke-width="2.2"/>
<text x="474.0" y="300.5" font-size="19.5" fill="#e66a6a" text-anchor="middle">1</text>
<rect x="499.6" y="281.0" width="41.0" height="25.4" fill="none" stroke="#f4f4f4" stroke-width="1.7"/>
<rect x="540.6" y="281.0" width="47.2" height="25.4" fill="none" stroke="#f4f4f4" stroke-width="1.7"/>
<rect x="587.8" y="281.0" width="19.7" height="25.4" fill="none" stroke="#f4f4f4" stroke-width="1.7"/>
<rect x="607.5" y="281.0" width="19.5" height="25.4" fill="none" stroke="#f4f4f4" stroke-width="1.7"/>
<rect x="627.0" y="281.0" width="21.5" height="25.4" fill="none" stroke="#f4f4f4" stroke-width="1.7"/>
<path d="M503.8 300.1 A16.3 13 0 0 1 536.4 300.1 Z" fill="none" stroke="#f4f4f4" stroke-width="1.6"/>
<text x="542.8" y="300.5" font-size="17.8" fill="#f4f4f4" textLength="40.8" lengthAdjust="spacingAndGlyphs">.010</text>
<text x="590.3" y="300.5" font-size="17.8" fill="#f4f4f4" textLength="14.4" lengthAdjust="spacingAndGlyphs">A</text>
<text x="610.2" y="300.5" font-size="17.8" fill="#f4f4f4" textLength="13.0" lengthAdjust="spacingAndGlyphs">B</text>
<text x="630.0" y="300.5" font-size="17.8" fill="#f4f4f4" textLength="15.1" lengthAdjust="spacingAndGlyphs">C</text>
<polyline points="592.3,410.3 609.7,410.3 686.5,461.0" fill="none" stroke="#f4f4f4" stroke-width="1.7" stroke-linejoin="round"/>
<circle cx="686.5" cy="461.2" r="1.6" fill="#e22"/>
<ellipse cx="441.1" cy="422.7" rx="17.6" ry="15.4" fill="#fff" stroke="#e02424" stroke-width="2.2"/>
<text x="441.1" y="429.5" font-size="19.5" fill="#e66a6a" text-anchor="middle">3</text>
<rect x="466.9" y="410.0" width="37.9" height="25.4" fill="none" stroke="#f4f4f4" stroke-width="1.7"/>
<rect x="504.8" y="410.0" width="66.2" height="25.4" fill="none" stroke="#f4f4f4" stroke-width="1.7"/>
<rect x="571.0" y="410.0" width="21.3" height="25.4" fill="none" stroke="#f4f4f4" stroke-width="1.7"/>
<polyline points="485.8,414.3 485.8,428.6" fill="none" stroke="#f4f4f4" stroke-width="1.6" stroke-linejoin="round"/>
<polyline points="470.6,428.6 501.0,428.6" fill="none" stroke="#f4f4f4" stroke-width="1.6" stroke-linejoin="round"/>
<line x1="507.7" y1="430.7" x2="525.4" y2="415.3" stroke="#f4f4f4" stroke-width="1.4"/>
<text x="508.0" y="429.5" font-size="17.8" fill="#f4f4f4" textLength="58.7" lengthAdjust="spacingAndGlyphs">Ø.005</text>
<text x="574.3" y="429.5" font-size="17.8" fill="#f4f4f4" textLength="13.5" lengthAdjust="spacingAndGlyphs">A</text>
<polyline points="482.4,435.4 482.4,440.4" fill="none" stroke="#f4f4f4" stroke-width="1.7" stroke-linejoin="round"/>
<rect x="466.9" y="440.4" width="33.1" height="25.3" fill="none" stroke="#f4f4f4" stroke-width="1.7"/>
<text x="475.6" y="459.0" font-size="17.8" fill="#f4f4f4" textLength="13.5" lengthAdjust="spacingAndGlyphs">B</text>
<polyline points="679.3,578.5 689.2,578.5 753.2,562.2" fill="none" stroke="#f4f4f4" stroke-width="1.7" stroke-linejoin="round"/>
<circle cx="753.5" cy="562.0" r="2" fill="#e22"/>
<ellipse cx="569.3" cy="579.0" rx="17.6" ry="15.4" fill="#fff" stroke="#e02424" stroke-width="2.2"/>
<text x="569.3" y="585.8" font-size="19.5" fill="#e66a6a" text-anchor="middle">6</text>
<text x="599.1" y="585.5" font-size="17.8" fill="#f4f4f4" textLength="74.5" lengthAdjust="spacingAndGlyphs">R 0.400</text>
<polyline points="696.4,647.3 714.3,647.3 767.8,602.7" fill="none" stroke="#f4f4f4" stroke-width="1.7" stroke-linejoin="round"/>
<ellipse cx="582.8" cy="659.0" rx="17.6" ry="15.4" fill="#fff" stroke="#e02424" stroke-width="2.2"/>
<text x="582.8" y="665.8" font-size="19.5" fill="#e66a6a" text-anchor="middle">2</text>
<rect x="609.5" y="647.3" width="36.9" height="23.8" fill="none" stroke="#f4f4f4" stroke-width="1.7"/>
<rect x="646.4" y="647.3" width="50.0" height="23.8" fill="none" stroke="#f4f4f4" stroke-width="1.7"/>
<polyline points="615.2,664.9 624.3,653.8 641.2,653.8 632.1,664.9 615.2,664.9" fill="none" stroke="#f4f4f4" stroke-width="1.5" stroke-linejoin="round"/>
<text x="650.2" y="665.4" font-size="17.8" fill="#f4f4f4" textLength="40.3" lengthAdjust="spacingAndGlyphs">.005</text>
<polyline points="625.0,671.1 625.0,677.1" fill="none" stroke="#f4f4f4" stroke-width="1.7" stroke-linejoin="round"/>
<rect x="609.5" y="677.1" width="31.7" height="24.7" fill="none" stroke="#f4f4f4" stroke-width="1.7"/>
<text x="618.6" y="695.8" font-size="17.8" fill="#f4f4f4" textLength="14.0" lengthAdjust="spacingAndGlyphs">A</text>
<polyline points="885.0,716.0 924.7,679.7 924.7,673.5" fill="none" stroke="#f4f4f4" stroke-width="1.7" stroke-linejoin="round"/>
<ellipse cx="796.8" cy="716.8" rx="17.6" ry="15.4" fill="#fff" stroke="#e02424" stroke-width="2.2"/>
<text x="796.8" y="723.6" font-size="19.5" fill="#e66a6a" text-anchor="middle">5</text>
<text x="827.4" y="723.3" font-size="17.8" fill="#f4f4f4" textLength="51.9" lengthAdjust="spacingAndGlyphs">0.750</text>
<polyline points="1210.0,280.0 1132.8,439.8" fill="none" stroke="#f4f4f4" stroke-width="1.7" stroke-linejoin="round"/>
<ellipse cx="1146.8" cy="249.5" rx="17.6" ry="15.4" fill="#fff" stroke="#e02424" stroke-width="2.2"/>
<text x="1146.8" y="256.3" font-size="19.5" fill="#e66a6a" text-anchor="middle">8</text>
<rect x="1175.3" y="261.2" width="42.1" height="25.0" fill="#fff" stroke="#e02424" stroke-width="2.2"/>
<text x="1196.3" y="280.7" font-size="19.5" fill="#e66a6a" text-anchor="middle" textLength="30.3" lengthAdjust="spacingAndGlyphs">8.1</text>
<rect x="1175.3" y="300.9" width="42.1" height="24.5" fill="#fff" stroke="#e02424" stroke-width="2.2"/>
<text x="1196.3" y="320.1" font-size="19.5" fill="#e66a6a" text-anchor="middle" textLength="30.3" lengthAdjust="spacingAndGlyphs">8.2</text>
<rect x="1175.3" y="325.4" width="42.1" height="24.5" fill="#fff" stroke="#e02424" stroke-width="2.2"/>
<text x="1196.3" y="344.6" font-size="19.5" fill="#e66a6a" text-anchor="middle" textLength="30.3" lengthAdjust="spacingAndGlyphs">8.3</text>
<line x1="1257.0" y1="289.2" x2="1275.1" y2="273.8" stroke="#f4f4f4" stroke-width="1.4"/>
<text x="1222.0" y="288.0" font-size="17.8" fill="#f4f4f4" textLength="101.1" lengthAdjust="spacingAndGlyphs">8 x Ø .344</text>
<text x="1337.1" y="275.9" font-size="12" fill="#f4f4f4" textLength="39.0" lengthAdjust="spacingAndGlyphs">+.003</text>
<text x="1337.1" y="295.7" font-size="12" fill="#f4f4f4" textLength="39.0" lengthAdjust="spacingAndGlyphs">−.001</text>
<rect x="1219.2" y="300.2" width="30.4" height="49.7" fill="none" stroke="#f4f4f4" stroke-width="1.7"/>
<rect x="1249.6" y="300.2" width="99.2" height="24.7" fill="none" stroke="#f4f4f4" stroke-width="1.7"/>
<rect x="1348.8" y="300.2" width="19.4" height="24.7" fill="none" stroke="#f4f4f4" stroke-width="1.7"/>
<rect x="1368.2" y="300.2" width="44.8" height="24.7" fill="none" stroke="#f4f4f4" stroke-width="1.7"/>
<rect x="1413.0" y="300.2" width="22.7" height="24.7" fill="none" stroke="#f4f4f4" stroke-width="1.7"/>
<rect x="1249.6" y="324.9" width="99.2" height="25.0" fill="none" stroke="#f4f4f4" stroke-width="1.7"/>
<rect x="1348.8" y="324.9" width="19.4" height="25.0" fill="none" stroke="#f4f4f4" stroke-width="1.7"/>
<circle cx="1233.7" cy="325.4" r="6.6" fill="none" stroke="#f4f4f4" stroke-width="1.4"/>
<polyline points="1224.1,325.4 1243.3,325.4" fill="none" stroke="#f4f4f4" stroke-width="1.4" stroke-linejoin="round"/>
<polyline points="1233.7,315.8 1233.7,335.0" fill="none" stroke="#f4f4f4" stroke-width="1.4" stroke-linejoin="round"/>
<line x1="1258.6" y1="319.6" x2="1276.6" y2="304.2" stroke="#f4f4f4" stroke-width="1.4"/>
<text x="1258.9" y="318.4" font-size="17.8" fill="#f4f4f4" textLength="59.6" lengthAdjust="spacingAndGlyphs">Ø.012</text>
<circle cx="1332.0" cy="312.6" r="9.2" fill="none" stroke="#f4f4f4" stroke-width="1.3"/>
<text x="1332.0" y="317.2" font-size="12.5" fill="#f4f4f4" text-anchor="middle">M</text>
<text x="1351.8" y="318.4" font-size="17.8" fill="#f4f4f4" textLength="13.4" lengthAdjust="spacingAndGlyphs">A</text>
<text x="1371.0" y="318.4" font-size="17.8" fill="#f4f4f4" textLength="13.8" lengthAdjust="spacingAndGlyphs">B</text>
<circle cx="1397.1" cy="312.6" r="9.2" fill="none" stroke="#f4f4f4" stroke-width="1.3"/>
<text x="1397.1" y="317.2" font-size="12.5" fill="#f4f4f4" text-anchor="middle">M</text>
<text x="1417.0" y="318.4" font-size="17.8" fill="#f4f4f4" textLength="14.7" lengthAdjust="spacingAndGlyphs">C</text>
<line x1="1258.6" y1="344.1" x2="1276.6" y2="328.7" stroke="#f4f4f4" stroke-width="1.4"/>
<text x="1258.9" y="342.9" font-size="17.8" fill="#f4f4f4" textLength="59.6" lengthAdjust="spacingAndGlyphs">Ø.005</text>
<circle cx="1332.0" cy="337.2" r="9.2" fill="none" stroke="#f4f4f4" stroke-width="1.3"/>
<text x="1332.0" y="341.8" font-size="12.5" fill="#f4f4f4" text-anchor="middle">M</text>
<text x="1351.8" y="342.9" font-size="17.8" fill="#f4f4f4" textLength="13.4" lengthAdjust="spacingAndGlyphs">A</text>
<polyline points="1262.0,418.5 1192.4,450.3" fill="none" stroke="#f4f4f4" stroke-width="1.7" stroke-linejoin="round"/>
<circle cx="1192.8" cy="449.8" r="1.5" fill="#e22"/>
<polyline points="1288.0,402.6 1302.1,402.6" fill="none" stroke="#f4f4f4" stroke-width="1.7" stroke-linejoin="round"/>
<ellipse cx="1275.7" cy="414.6" rx="17.6" ry="15.4" fill="#fff" stroke="#e02424" stroke-width="2.2"/>
<text x="1275.7" y="421.4" font-size="19.5" fill="#e66a6a" text-anchor="middle">4</text>
<rect x="1302.1" y="402.4" width="29.9" height="24.6" fill="none" stroke="#f4f4f4" stroke-width="1.7"/>
<rect x="1332.0" y="402.4" width="67.0" height="24.6" fill="none" stroke="#f4f4f4" stroke-width="1.7"/>
<rect x="1399.0" y="402.4" width="19.9" height="24.6" fill="none" stroke="#f4f4f4" stroke-width="1.7"/>
<rect x="1418.9" y="402.4" width="46.7" height="24.6" fill="none" stroke="#f4f4f4" stroke-width="1.7"/>
<circle cx="1316.6" cy="414.6" r="6.4" fill="none" stroke="#f4f4f4" stroke-width="1.4"/>
<polyline points="1307.2,414.6 1326.0,414.6" fill="none" stroke="#f4f4f4" stroke-width="1.4" stroke-linejoin="round"/>
<polyline points="1316.6,405.2 1316.6,424.0" fill="none" stroke="#f4f4f4" stroke-width="1.4" stroke-linejoin="round"/>
<line x1="1335.7" y1="422.3" x2="1353.3" y2="406.9" stroke="#f4f4f4" stroke-width="1.4"/>
<text x="1336.0" y="421.1" font-size="17.8" fill="#f4f4f4" textLength="58.3" lengthAdjust="spacingAndGlyphs">Ø.005</text>
<text x="1402.5" y="421.1" font-size="17.8" fill="#f4f4f4" textLength="12.9" lengthAdjust="spacingAndGlyphs">A</text>
<text x="1422.4" y="421.1" font-size="17.8" fill="#f4f4f4" textLength="12.8" lengthAdjust="spacingAndGlyphs">B</text>
<circle cx="1448.7" cy="414.6" r="9.2" fill="none" stroke="#f4f4f4" stroke-width="1.3"/>
<text x="1448.7" y="419.2" font-size="12.5" fill="#f4f4f4" text-anchor="middle">M</text>
<polyline points="1318.5,427.0 1318.5,433.5" fill="none" stroke="#f4f4f4" stroke-width="1.7" stroke-linejoin="round"/>
<rect x="1302.1" y="433.5" width="33.2" height="24.3" fill="none" stroke="#f4f4f4" stroke-width="1.7"/>
<text x="1311.0" y="451.5" font-size="17.8" fill="#f4f4f4" textLength="14.5" lengthAdjust="spacingAndGlyphs">C</text>
<polyline points="1140.6,653.4 1103.2,592.2" fill="none" stroke="#f4f4f4" stroke-width="1.7" stroke-linejoin="round"/>
<polyline points="1155.7,666.0 1160.0,666.0" fill="none" stroke="#f4f4f4" stroke-width="1.7" stroke-linejoin="round"/>
<ellipse cx="1085.7" cy="641.2" rx="17.6" ry="15.4" fill="#fff" stroke="#e02424" stroke-width="2.2"/>
<text x="1085.7" y="648.0" font-size="19.5" fill="#e66a6a" text-anchor="middle">7</text>
<rect x="1114.2" y="653.4" width="41.5" height="25.2" fill="#fff" stroke="#e02424" stroke-width="2.2"/>
<text x="1135.0" y="673.0" font-size="19.5" fill="#e66a6a" text-anchor="middle" textLength="29.9" lengthAdjust="spacingAndGlyphs">7.1</text>
<rect x="1114.2" y="678.6" width="41.5" height="25.0" fill="#fff" stroke="#e02424" stroke-width="2.2"/>
<text x="1135.0" y="698.1" font-size="19.5" fill="#e66a6a" text-anchor="middle" textLength="29.9" lengthAdjust="spacingAndGlyphs">7.2</text>
<rect x="1114.2" y="703.6" width="41.5" height="24.0" fill="#fff" stroke="#e02424" stroke-width="2.2"/>
<text x="1135.0" y="722.6" font-size="19.5" fill="#e66a6a" text-anchor="middle" textLength="29.9" lengthAdjust="spacingAndGlyphs">7.3</text>
<line x1="1195.8" y1="673.9" x2="1214.1" y2="658.5" stroke="#f4f4f4" stroke-width="1.4"/>
<text x="1160.4" y="672.7" font-size="17.8" fill="#f4f4f4" textLength="157.6" lengthAdjust="spacingAndGlyphs">2 x Ø .25 ± .005</text>
<rect x="1156.9" y="678.1" width="30.8" height="49.5" fill="none" stroke="#f4f4f4" stroke-width="1.7"/>
<rect x="1187.7" y="678.1" width="98.8" height="25.0" fill="none" stroke="#f4f4f4" stroke-width="1.7"/>
<rect x="1286.5" y="678.1" width="19.8" height="25.0" fill="none" stroke="#f4f4f4" stroke-width="1.7"/>
<rect x="1306.3" y="678.1" width="45.1" height="25.0" fill="none" stroke="#f4f4f4" stroke-width="1.7"/>
<rect x="1351.4" y="678.1" width="22.2" height="25.0" fill="none" stroke="#f4f4f4" stroke-width="1.7"/>
<rect x="1187.7" y="703.1" width="98.8" height="24.5" fill="none" stroke="#f4f4f4" stroke-width="1.7"/>
<rect x="1286.5" y="703.1" width="19.8" height="24.5" fill="none" stroke="#f4f4f4" stroke-width="1.7"/>
<circle cx="1171.6" cy="703.6" r="6.6" fill="none" stroke="#f4f4f4" stroke-width="1.4"/>
<polyline points="1162.0,703.6 1181.2,703.6" fill="none" stroke="#f4f4f4" stroke-width="1.4" stroke-linejoin="round"/>
<polyline points="1171.6,694.0 1171.6,713.2" fill="none" stroke="#f4f4f4" stroke-width="1.4" stroke-linejoin="round"/>
<line x1="1196.3" y1="698.4" x2="1214.6" y2="683.0" stroke="#f4f4f4" stroke-width="1.4"/>
<text x="1196.6" y="697.2" font-size="17.8" fill="#f4f4f4" textLength="60.7" lengthAdjust="spacingAndGlyphs">Ø.010</text>
<circle cx="1270.1" cy="691.0" r="9.2" fill="none" stroke="#f4f4f4" stroke-width="1.3"/>
<text x="1270.1" y="695.6" font-size="12.5" fill="#f4f4f4" text-anchor="middle">M</text>
<text x="1290.0" y="697.2" font-size="17.8" fill="#f4f4f4" textLength="12.8" lengthAdjust="spacingAndGlyphs">A</text>
<text x="1308.7" y="697.2" font-size="17.8" fill="#f4f4f4" textLength="12.8" lengthAdjust="spacingAndGlyphs">B</text>
<circle cx="1336.2" cy="691.0" r="9.2" fill="none" stroke="#f4f4f4" stroke-width="1.3"/>
<text x="1336.2" y="695.6" font-size="12.5" fill="#f4f4f4" text-anchor="middle">M</text>
<text x="1354.7" y="697.2" font-size="17.8" fill="#f4f4f4" textLength="15.1" lengthAdjust="spacingAndGlyphs">C</text>
<line x1="1196.3" y1="723.0" x2="1214.6" y2="707.6" stroke="#f4f4f4" stroke-width="1.4"/>
<text x="1196.6" y="721.8" font-size="17.8" fill="#f4f4f4" textLength="60.7" lengthAdjust="spacingAndGlyphs">Ø.005</text>
<circle cx="1270.1" cy="715.5" r="9.2" fill="none" stroke="#f4f4f4" stroke-width="1.3"/>
<text x="1270.1" y="720.1" font-size="12.5" fill="#f4f4f4" text-anchor="middle">M</text>
<text x="1290.0" y="721.8" font-size="17.8" fill="#f4f4f4" textLength="12.8" lengthAdjust="spacingAndGlyphs">A</text>
<g><path d="M398.5 766V751" stroke="#1010e0" stroke-width="2.600"/><path d="M398.500 743.500l3.200 8.500h-6.400z" fill="#0c0cb8"/><path d="M400.500 744l2.200 5.500" stroke="#2a9a2a" stroke-width="2.200"/><path d="M399.500 765.300h30" stroke="#d02010" stroke-width="2.200"/><path d="M438.500 764.300l-12-2.800v4.500z" fill="#d02010"/><text x="393.500" y="742" font-size="10" font-weight="bold" fill="#2222ee">Z</text><text x="397.500" y="736" font-size="9" font-weight="bold" fill="#3aaa3a">Y</text><text x="444" y="768" font-size="10.500" font-weight="bold" fill="#e02010">X</text></g>
</svg></div>

<!-- ===== bottom ribbon ===== -->
<div class="abs" style="left:8px;top:777px;width:720px;height:1px;background:#e4e4e4"></div>
<div class="abs" style="left:804px;top:777px;width:736px;height:1px;background:#e4e4e4"></div>
<div class="vs" style="left:69.5px;top:779px;height:61px;background:#dedede"></div>
<div class="vs" style="left:110px;top:785px;height:40px;background:#dedede"></div>
<div class="vs" style="left:150px;top:785px;height:40px;background:#dedede"></div>
<div class="vs" style="left:218.5px;top:785px;height:40px;background:#dedede"></div>
<div class="vs" style="left:751px;top:779px;height:61px;background:#dedede"></div>
<div class="vs" style="left:795px;top:779px;height:61px;background:#dedede"></div>
<div class="rl2" style="left:40.2px;top:807.2px">Verisurf<br>Preferences</div>
<div class="rl2" style="left:91.3px;top:807.2px">Import</div>
<div class="rl2" style="left:131.5px;top:807.2px">Move<br>MBD</div>
<div class="rl2" style="left:185.5px;top:807.2px">Create<br>Control Frame</div>
<div class="rl2" style="left:239.2px;top:807.2px">Datum</div>
<div class="rl2" style="left:272.9px;top:807.2px">Target<br>Datum</div>
<div class="rl2" style="left:313.1px;top:807.2px">2Pt<br>Dimension</div>
<div class="rl2" style="left:360.6px;top:807.2px">Thickness<br>Dimension</div>
<div class="rl2" style="left:407.6px;top:807.2px">Radius<br>Dimension</div>
<div class="rl2" style="left:454.6px;top:807.2px">Point<br>Dimension</div>
<div class="rl2" style="left:501.5px;top:807.2px">Diameter<br>Dimension</div>
<div class="rl2" style="left:549px;top:807.2px">Angle<br>Dimension</div>
<div class="rl2" style="left:592px;top:807.2px">Closest<br>Distance</div>
<div class="rl2" style="left:645px;top:807.2px">Create Balloons<br>on MBD</div>
<div class="rl2" style="left:713px;top:807.2px">Delete Balloons<br>on MBD</div>
<div class="rl2" style="left:775px;top:807.2px">Verisurf<br>Validate</div>
<div class="rl2" style="left:40px;top:831.4px">Settings</div>
<div class="rl2" style="left:410px;top:831.4px">MBD</div>
<div class="rl2" style="left:773.5px;top:831.4px">Validate</div>
<svg width="820" height="40" viewBox="0 775 820 40" style="left:0;top:775px;filter:blur(.35px)">
<use href="#ic-prefs" transform="translate(40.2 794) scale(.68) translate(-54 -34.5)"/>
<use href="#ic-import" transform="translate(91.3 794) scale(.68) translate(-128 -34.5)"/>
<use href="#ic-move" transform="translate(131.5 794) scale(.68) translate(-187 -34.5)"/>
<use href="#ic-mbd" transform="translate(185.5 794) scale(.68) translate(-245 -34.5)"/>
<use href="#ic-datum" transform="translate(239.2 794) scale(.68) translate(-304 -34.5)"/>
<use href="#ic-tdatum" transform="translate(272.9 794) scale(.68) translate(-352.4 -34.5)"/>
<use href="#ic-p2" transform="translate(313.1 794) scale(.68) translate(-409 -34.5)"/>
<use href="#ic-thk" transform="translate(360.6 794) scale(.68) translate(-480 -34.5)"/>
<use href="#ic-rad" transform="translate(407.6 794) scale(.68) translate(-549 -34.5)"/>
<use href="#ic-pt" transform="translate(454.6 794) scale(.68) translate(-619 -34.5)"/>
<use href="#ic-dia" transform="translate(501.5 794) scale(.68) translate(-688 -34.5)"/>
<use href="#ic-ang" transform="translate(549 794) scale(.68) translate(-755 -34.5)"/>
<use href="#ic-cls" transform="translate(592 794) scale(.68) translate(-820 -34.5)"/>
<use href="#ic-cb" transform="translate(645 794) scale(.68) translate(-899 -34.5)"/>
<use href="#ic-db" transform="translate(713 794) scale(.68) translate(-999 -34.5)"/>
<use href="#ic-val" transform="translate(775 794) scale(.68) translate(-1086 -34.5)"/>
</svg>

<!-- ===== Automate panel (bottom-left) ===== -->
<div class="abs" id="pnl2" style="left:8px;top:843px;width:301px;height:598px;background:#fff;filter:blur(.35px)"></div>
<div class="abs" style="left:0;top:0;width:0;height:0;filter:blur(.35px)">
<div class="abs" style="left:12.5px;top:846.5px;font-size:12.4px;color:#3d6db5;line-height:16px;transform:scaleX(1.24);transform-origin:0 0;white-space:nowrap">Automate</div>
<svg width="30" height="12" viewBox="0 0 30 12" style="left:274px;top:848px"><g fill="none" stroke="#555" stroke-width="1"><path d="M4.500 2.500h4M5 2.500v4M8 2.500v4M3.500 6.500h6M6.500 6.500v3.500"/><path d="M19 3.500l5.500 5.500M24.500 3.500l-5.500 5.500"/></g></svg>
<div class="abs" style="left:8px;top:881px;width:300px;height:1px;background:#dfe6f0"></div>
<div class="abs" style="left:9.5px;top:868px;width:49px;height:13px;border:1px solid #c9c9c9;border-bottom:1px solid #fff;background:#fff"></div>
<div class="f2" style="left:13.8px;top:871px;font-size:8.2px;letter-spacing:.45px;color:#444">Automate</div>
<div class="f2" style="left:64.4px;top:871px;font-size:8.2px;letter-spacing:.45px;color:#444">MBD</div>
<div class="f2" style="left:93.6px;top:871px;font-size:8.2px;letter-spacing:.45px;color:#444">Reverse</div>
<div class="f2" style="left:135.4px;top:871px;font-size:8.2px;letter-spacing:.45px;color:#444">Measure</div>
<div class="f2" style="left:181px;top:871px;font-size:8.2px;letter-spacing:.45px;color:#444">Analysis</div>
<svg width="300" height="60" viewBox="8 880 300 60" style="left:8px;top:880px" font-family="Liberation Sans, sans-serif">
<g stroke="#ccc" stroke-width=".8" stroke-dasharray="1 1"><path d="M17 884v13M19 884v13M17 901v13M19 901v13M17 919v13M19 919v13"/></g>
<g stroke="#d9d9d9" stroke-width="1"><path d="M64.400 884v13M104.300 884v13M126.100 884v13M165.600 884v13M241 884v13M186.500 901v13M209 901v13M231 901v13M195.500 919v13"/></g>
<rect x="29" y="884.8" width="11.5" height="11" fill="#fff" stroke="#4f7fc4" stroke-width="1"/><path d="M31 888.3h4M31 891.3h4M31 893.8h4" stroke="#4f7fc4" stroke-width=".8"/>
<rect x="47.500" y="884.8" width="11" height="11.500" fill="#2f4f86"/><path d="M59 885.8v11.500h-10" stroke="#8aa4d0" fill="none"/>
<text x="74.700" y="894.5" font-size="11.500" font-weight="bold" text-anchor="middle" fill="#111">P</text>
<path d="M87 885.3h9l-3 4v5l-3-1v-4z" fill="#222"/><path d="M93 886.3l5 1-4 5z" fill="#3a9a3a"/>
<rect x="110" y="884.8" width="10.500" height="11" fill="#e8eef8" stroke="#7f9fd0" stroke-width="1"/><rect x="112" y="890.8" width="3" height="3.500" fill="#7f9fd0"/><rect x="116" y="890.8" width="3" height="3.500" fill="#7f9fd0"/>
<rect x="132" y="886.8" width="12" height="7.500" fill="#555" stroke="#222" stroke-width="1.200"/>
<path d="M150.500 884.8l10 5.500-10 5.500z" fill="#3f78c8"/>
<path d="M172 885.3h10v3h-1.500v-1.500h-2.500v8.500h2v1.500h-6v-1.500h1.500v-8.500h-2v1.500h-1.500z" fill="#c0461c"/>
<path d="M189.500 889.3l5-4 6 4-4 5.500z" fill="#e8f0fa" stroke="#8fb0dc" stroke-width="1"/>
<rect x="204.500" y="883.3" width="17.500" height="14" fill="#e6f0fc" stroke="#9cc0ea" stroke-width="1"/><path d="M208 893.3l8-8M210 895.3l8-8M207 889.3l5-5" stroke="#3a3fb0" stroke-width="1.800"/>
<path d="M225.500 893.3l8-8M227.500 895.3l8-8M224.500 889.3l5-5" stroke="#3a3fb0" stroke-width="1.800"/><path d="M226 894.3l3 1" stroke="#c33" stroke-width="1.500"/>
<ellipse cx="252.700" cy="892.8" rx="6" ry="2.800" fill="none" stroke="#3a6bb5" stroke-width="1.200"/><path d="M252.700 892.3v-7.500" stroke="#333" stroke-width="1.200"/>
<path d="M265.500 890.3h9.500M270.300 885.5v9.600" stroke="#3f78c8" stroke-width="1.600"/>
<rect x="29" y="902.8" width="9" height="7" fill="#3d5f96"/><rect x="33" y="906.8" width="9" height="6.500" rx="1" fill="#888" stroke="#555" stroke-width=".6"/>
<ellipse cx="53" cy="906.8" rx="6" ry="4.500" fill="#8fc0e8"/><text x="53" y="911.3" font-size="9" font-weight="bold" text-anchor="middle" fill="#2d6fb8">P</text>
<path d="M64.500 903.3l8 4.500-8 4.500z" fill="#2f6fc0"/><path d="M74.500 903.3v9" stroke="#2f6fc0" stroke-width="1.800"/>
<text x="88.700" y="911.8" font-size="10.500" text-anchor="middle" fill="#2f6fc0" letter-spacing="-.5">1D</text>
<path d="M100 903.8v8.500h9" fill="none" stroke="#4a78b8" stroke-width="1"/><ellipse cx="107" cy="906.8" rx="4.500" ry="3" fill="#b9c0d4" stroke="#555" stroke-width=".6"/><circle cx="107" cy="906.8" r="1.600" fill="#a03a7a"/>
<rect x="117.500" y="904.3" width="9" height="8" fill="#9ab0cc" stroke="#5f7ea6" stroke-width=".8"/><path d="M119.500 902.3h9v8" fill="none" stroke="#5f7ea6" stroke-width=".8"/>
<path d="M141 902.8v5l-5 5M141 907.8l5 4" fill="none" stroke="#333" stroke-width="1.100"/><circle cx="146" cy="905.3" r="1.800" fill="none" stroke="#c33" stroke-width=".9"/>
<path d="M158.500 902.8v10M153 906.8l11 3" fill="none" stroke="#555" stroke-width="1"/><circle cx="155" cy="907.8" r="2" fill="none" stroke="#c33" stroke-width=".9"/><circle cx="162" cy="908.8" r="2" fill="none" stroke="#c33" stroke-width=".9"/>
<path d="M170.500 902.8v10h10" fill="none" stroke="#555" stroke-width="1"/><path d="M173 910.8l5-6" stroke="#4a9a4a" stroke-width="1"/><text x="179" y="906.8" font-size="5" fill="#4a78b8">z</text>
<path d="M197.700 902.8v5l-5 5M197.700 907.8l5 4" fill="none" stroke="#333" stroke-width="1.200"/><circle cx="193.500" cy="904.8" r="2.200" fill="none" stroke="#c33" stroke-width="1"/><circle cx="202" cy="904.8" r="2.200" fill="none" stroke="#c33" stroke-width="1"/>
<path d="M220 901.8v8" stroke="#c0392b" stroke-width="1.800"/><circle cx="220" cy="911.3" r="2.500" fill="#c0392b"/>
<g fill="#999"><circle cx="238.400" cy="903.8" r=".8"/><circle cx="242.400" cy="903.8" r=".8"/><circle cx="246.400" cy="903.8" r=".8"/><circle cx="238.400" cy="907.8" r=".8"/><circle cx="242.400" cy="907.8" r=".8"/><circle cx="246.400" cy="907.8" r=".8"/><circle cx="238.400" cy="911.8" r=".8"/><circle cx="242.400" cy="911.8" r=".8"/><circle cx="246.400" cy="911.8" r=".8"/></g>
<path d="M255.500 911.8l10-8M256 904.8l8 8M258 902.8l8 8" stroke="#999" stroke-width=".9"/>
<path d="M273 907.8h10M278.400 902.8v10M275 904.8l6 6" stroke="#8a8a8a" stroke-width="1"/>
<rect x="30" y="921.2" width="8" height="8.500" fill="#fff" stroke="#666" stroke-width=".9"/><text x="34" y="928.2" font-size="7" text-anchor="middle" fill="#333">A</text><path d="M39 927.7h4M41 925.7v4" stroke="#3f78c8" stroke-width="1"/>
<rect x="49" y="918.500" width="141" height="15" fill="#fff" stroke="#8a8a8a" stroke-width="1"/><text x="51.800" y="929" font-size="10.200" font-weight="bold" fill="#111">Plan1</text><path d="M179.500 924.7l2.800 2.800 2.800-2.800" fill="none" stroke="#444" stroke-width="1"/>
<circle cx="205" cy="924.2" r="2.800" fill="none" stroke="#555" stroke-width="1.100"/><path d="M203 926.2l-4 4" stroke="#555" stroke-width="1.300"/>
<ellipse cx="221" cy="925.2" rx="5.500" ry="3.500" fill="none" stroke="#b04a4a" stroke-width="1"/><circle cx="221" cy="925.2" r="1.500" fill="#b04a4a"/><path d="M222 927.7l3 3" stroke="#b04a4a" stroke-width="1"/>
</svg>
<div class="abs" style="left:29.5px;top:935.5px;width:274.5px;height:181px;border:1px solid #a4a8b0;box-sizing:border-box;background:#fff"></div>
<svg width="300" height="190" viewBox="8 935 300 190" style="left:8px;top:935px">
<rect x="37.200" y="938.3" width="7" height="7" fill="#fff" stroke="#9a9a9a" stroke-width=".8"/><path d="M39 941.8h3.400" stroke="#444" stroke-width=".8"/>
<path d="M49.500 945.3v-7h4l1 1h4v1.500" fill="#c8b83a" stroke="#6b6a1c" stroke-width=".7"/><path d="M49.500 945.3l2.500-4.500h9l-2.500 4.500z" fill="#e6d84a" stroke="#6b6a1c" stroke-width=".7"/>
<path d="M44 952.5h8" stroke="#aaa" stroke-width=".7" stroke-dasharray="1 1"/>
<rect x="51.800" y="949.0" width="7" height="7" fill="#fff" stroke="#9a9a9a" stroke-width=".8"/><path d="M53.600 952.5h3.400M55.300 950.8v3.400" stroke="#444" stroke-width=".8"/>
<path d="M65 956.5v-7.500h4l1 1h6v6.500z" fill="#ebe27a" stroke="#8c8a3a" stroke-width=".7"/>
<path d="M44 963.2h8" stroke="#aaa" stroke-width=".7" stroke-dasharray="1 1"/>
<rect x="51.800" y="959.7" width="7" height="7" fill="#fff" stroke="#9a9a9a" stroke-width=".8"/><path d="M53.600 963.2h3.400M55.300 961.5v3.400" stroke="#444" stroke-width=".8"/>
<path d="M65 965.7a5.600 5 0 0 1 11.200 0z" fill="#fff" stroke="#222" stroke-width=".9"/>
<path d="M44 974.0h8" stroke="#aaa" stroke-width=".7" stroke-dasharray="1 1"/>
<rect x="51.800" y="970.5" width="7" height="7" fill="#fff" stroke="#9a9a9a" stroke-width=".8"/><path d="M53.600 974.0h3.400M55.300 972.3v3.400" stroke="#444" stroke-width=".8"/>
<path d="M64.500 976.0l3-4h9.500l-3 4z" fill="#fff" stroke="#222" stroke-width=".9"/>
<path d="M44 984.7h8" stroke="#aaa" stroke-width=".7" stroke-dasharray="1 1"/>
<rect x="51.800" y="981.2" width="7" height="7" fill="#fff" stroke="#9a9a9a" stroke-width=".8"/><path d="M53.600 984.7h3.400M55.300 983.0v3.400" stroke="#444" stroke-width=".8"/>
<path d="M70.600 980.7v7.500M65 988.2h11.200" stroke="#222" stroke-width=".9"/>
<path d="M44 995.4h8" stroke="#aaa" stroke-width=".7" stroke-dasharray="1 1"/>
<rect x="51.800" y="991.9" width="7" height="7" fill="#fff" stroke="#9a9a9a" stroke-width=".8"/><path d="M53.600 995.4h3.400M55.300 993.7v3.400" stroke="#444" stroke-width=".8"/>
<circle cx="70.600" cy="995.4" r="3.300" fill="none" stroke="#222" stroke-width=".9"/><path d="M65.300 995.4h10.600M70.600 990.1v10.600" stroke="#222" stroke-width=".8"/>
<path d="M44 1006.1h8" stroke="#aaa" stroke-width=".7" stroke-dasharray="1 1"/>
<rect x="51.800" y="1002.6" width="7" height="7" fill="#fff" stroke="#9a9a9a" stroke-width=".8"/><path d="M53.600 1006.1h3.400M55.300 1004.4v3.400" stroke="#444" stroke-width=".8"/>
<circle cx="70.600" cy="1006.1" r="3.300" fill="none" stroke="#222" stroke-width=".9"/><path d="M65.300 1006.1h10.600M70.600 1000.8v10.600" stroke="#222" stroke-width=".8"/>
<path d="M44 1016.8h8" stroke="#aaa" stroke-width=".7" stroke-dasharray="1 1"/>
<rect x="51.800" y="1013.3" width="7" height="7" fill="#fff" stroke="#9a9a9a" stroke-width=".8"/><path d="M53.600 1016.8h3.400M55.300 1015.1v3.400" stroke="#444" stroke-width=".8"/>
<circle cx="70.600" cy="1016.8" r="3.300" fill="none" stroke="#222" stroke-width=".9"/><path d="M65.300 1016.8h10.600M70.600 1011.5v10.600" stroke="#222" stroke-width=".8"/>
<path d="M44 1027.6h8" stroke="#aaa" stroke-width=".7" stroke-dasharray="1 1"/>
<rect x="51.800" y="1024.1" width="7" height="7" fill="#fff" stroke="#9a9a9a" stroke-width=".8"/><path d="M53.600 1027.6h3.400M55.300 1025.9v3.400" stroke="#444" stroke-width=".8"/>
<circle cx="70.600" cy="1027.6" r="3.300" fill="none" stroke="#222" stroke-width=".9"/><path d="M65.300 1027.6h10.600M70.600 1022.3v10.600" stroke="#222" stroke-width=".8"/>
<path d="M44 1038.3h8" stroke="#aaa" stroke-width=".7" stroke-dasharray="1 1"/>
<rect x="51.800" y="1034.8" width="7" height="7" fill="#fff" stroke="#9a9a9a" stroke-width=".8"/><path d="M53.600 1038.3h3.400M55.300 1036.6v3.400" stroke="#444" stroke-width=".8"/>
<circle cx="70.600" cy="1038.3" r="3.300" fill="none" stroke="#222" stroke-width=".9"/><path d="M65.300 1038.3h10.600M70.600 1033.0v10.600" stroke="#222" stroke-width=".8"/>
<path d="M44 1049.0h8" stroke="#aaa" stroke-width=".7" stroke-dasharray="1 1"/>
<rect x="51.800" y="1045.5" width="7" height="7" fill="#fff" stroke="#9a9a9a" stroke-width=".8"/><path d="M53.600 1049.0h3.400M55.300 1047.3v3.400" stroke="#444" stroke-width=".8"/>
<circle cx="70.600" cy="1049.0" r="3.300" fill="none" stroke="#222" stroke-width=".9"/><path d="M65.300 1049.0h10.600M70.600 1043.7v10.600" stroke="#222" stroke-width=".8"/>
<path d="M44 1059.7h8" stroke="#aaa" stroke-width=".7" stroke-dasharray="1 1"/>
<rect x="51.800" y="1056.2" width="7" height="7" fill="#fff" stroke="#9a9a9a" stroke-width=".8"/><path d="M53.600 1059.7h3.400M55.300 1058.0v3.400" stroke="#444" stroke-width=".8"/>
<circle cx="70.600" cy="1059.7" r="3.300" fill="none" stroke="#222" stroke-width=".9"/><path d="M65.300 1059.7h10.600M70.600 1054.4v10.600" stroke="#222" stroke-width=".8"/>
<path d="M44 1070.4h8" stroke="#aaa" stroke-width=".7" stroke-dasharray="1 1"/>
<rect x="51.800" y="1066.9" width="7" height="7" fill="#fff" stroke="#9a9a9a" stroke-width=".8"/><path d="M53.600 1070.4h3.400M55.300 1068.7v3.400" stroke="#444" stroke-width=".8"/>
<circle cx="70.600" cy="1070.4" r="3.300" fill="none" stroke="#222" stroke-width=".9"/><path d="M65.300 1070.4h10.600M70.600 1065.1v10.600" stroke="#222" stroke-width=".8"/>
<path d="M44 1081.2h8" stroke="#aaa" stroke-width=".7" stroke-dasharray="1 1"/>
<rect x="51.800" y="1077.7" width="7" height="7" fill="#fff" stroke="#9a9a9a" stroke-width=".8"/><path d="M53.600 1081.2h3.400M55.300 1079.5v3.400" stroke="#444" stroke-width=".8"/>
<circle cx="70.600" cy="1081.2" r="3.300" fill="none" stroke="#222" stroke-width=".9"/><path d="M65.300 1081.2h10.600M70.600 1075.9v10.600" stroke="#222" stroke-width=".8"/>
<path d="M44 1091.9h8" stroke="#aaa" stroke-width=".7" stroke-dasharray="1 1"/>
<rect x="51.800" y="1088.4" width="7" height="7" fill="#fff" stroke="#9a9a9a" stroke-width=".8"/><path d="M53.600 1091.9h3.400M55.300 1090.2v3.400" stroke="#444" stroke-width=".8"/>
<circle cx="70.600" cy="1091.9" r="3.300" fill="none" stroke="#222" stroke-width=".9"/><path d="M65.300 1091.9h10.600M70.600 1086.6v10.600" stroke="#222" stroke-width=".8"/>
<path d="M40.700 945.8V1091.9" stroke="#aaa" stroke-width=".7" stroke-dasharray="1 1"/>
</svg>
<div class="t2" style="left:66.4px;top:936.1px;font-size:8.600px;color:#1a1a1a">Plan1</div>
<div class="t2" style="left:81px;top:946.8px;font-size:8.600px;color:#1a1a1a">Features (37)</div>
<div class="abs" style="left:79.600px;top:957.9px;width:76.500px;height:10.600px;background:#0a0a0a"></div>
<div class="t2" style="left:81px;top:957.5px;font-size:8.600px;color:#fff">Surface (1 Surface)</div>
<div class="t2" style="left:81px;top:968.3px;font-size:8.600px;color:#1a1a1a">Datum A (1 Surface)</div>
<div class="t2" style="left:81px;top:979.0px;font-size:8.600px;color:#1a1a1a">Datum B (2 Surfaces)</div>
<div class="t2" style="left:81px;top:989.7px;font-size:8.600px;color:#1a1a1a">Datum C (1 Surface)</div>
<div class="t2" style="left:81px;top:1000.4px;font-size:8.600px;color:#1a1a1a">SIM REQT - 8 Holes in pattern, 3 Callouts - A B C</div>
<div class="t2" style="left:81px;top:1011.1px;font-size:8.600px;color:#1a1a1a">SIM REQT - 4 Holes in pattern, 2 Callouts - A B</div>
<div class="t2" style="left:81px;top:1021.9px;font-size:8.600px;color:#1a1a1a">Diameter 1 - 2 Holes in pattern - A B C</div>
<div class="t2" style="left:81px;top:1032.6px;font-size:8.600px;color:#1a1a1a">Diameter 1 - 2 Holes in pattern - A B</div>
<div class="t2" style="left:81px;top:1043.3px;font-size:8.600px;color:#1a1a1a">Diameter 2 - 2 Holes in pattern - A B C</div>
<div class="t2" style="left:81px;top:1054.0px;font-size:8.600px;color:#1a1a1a">Diameter 2 - 2 Holes in pattern - A B</div>
<div class="t2" style="left:81px;top:1064.7px;font-size:8.600px;color:#1a1a1a">Diameter 3 - 8 Holes in pattern - A B&#9410; C:</div>
<div class="t2" style="left:81px;top:1075.5px;font-size:8.600px;color:#1a1a1a">Diameter 4 - 16 Holes in pattern - A B C</div>
<div class="t2" style="left:81px;top:1086.2px;font-size:8.600px;color:#1a1a1a">Diameter 5 - 4 Holes in pattern - A B C</div>
<svg width="12" height="16" viewBox="0 0 12 16" style="left:150px;top:964px"><path d="M1 1v11l2.600-2.400 2 4.400 1.800-.8-2-4.300h3.600z" fill="#fff" stroke="#000" stroke-width=".9"/></svg>
</div>

<!-- ===== Automate panel lower: form + table + left toolbar ===== -->
<div class="abs" style="left:0;top:0;width:0;height:0;filter:blur(.35px)">
<div class="abs" style="left:29.800px;top:1118.500px;width:274px;height:162px;background:#f0f0f0"></div>
<div class="abs" style="left:33px;top:1122.400px;width:40px;height:14px;background:#fafafa"></div>
<div class="abs" style="left:33px;top:1136px;width:266px;height:1px;background:#e2e2e2"></div>
<div class="abs" style="left:73px;top:1123px;width:1px;height:13px;background:#e4e4e4"></div><div class="abs" style="left:115px;top:1123px;width:1px;height:13px;background:#e4e4e4"></div><div class="abs" style="left:162px;top:1123px;width:1px;height:13px;background:#e4e4e4"></div>
<div class="f2" style="left:37.2px;top:1124.9px;font-size:9px;line-height:10.3px;color:#222;">General</div>
<div class="f2" style="left:79px;top:1124.9px;font-size:9px;line-height:10.3px;color:#222;">Balloon</div>
<div class="f2" style="left:120.5px;top:1124.9px;font-size:9px;line-height:10.3px;color:#222;">Columns</div>
<div class="abs" style="left:40.700px;top:1144.400px;width:9.500px;height:9.500px;background:#fff;border:1px solid #555;box-sizing:border-box"></div>
<div class="f2" style="left:53.1px;top:1145.4px;font-size:8.5px;line-height:9.8px;color:#222;">Lock Nominal</div>
<div class="f2" style="left:175.7px;top:1145.8px;font-size:8.5px;line-height:9.8px;color:#222;">WCS:</div>
<div class="cmb" style="left:204.900px;top:1141.800px;width:85.600px;height:14.200px"></div>
<div class="f2" style="left:208.4px;top:1145.6px;font-size:8.5px;line-height:9.8px;color:#222;">Top</div>
<svg width="8" height="5" viewBox="0 0 8 5" style="left:278.9px;top:1146.5px"><path d="M1 1l3 3 3-3" fill="none" stroke="#444" stroke-width="1"/></svg>
<div class="f2" style="left:40.1px;top:1162.3px;font-size:8.5px;line-height:9.8px;color:#222;">Datum Label:</div>
<div class="inp" style="left:98.500px;top:1159.300px;width:70.500px;height:15px"></div>
<div class="f2" style="left:175.7px;top:1162.3px;font-size:8.5px;line-height:9.8px;color:#b4b4b4;">Dist/Pos. Calc:</div>
<div class="cmb" style="left:235.600px;top:1160px;width:54.900px;height:13px;background:#cfcfcf;border-color:#c4c4c4"></div>
<svg width="8" height="5" viewBox="0 0 8 5" style="left:279px;top:1164.0px"><path d="M1 1l3 3 3-3" fill="none" stroke="#bbb" stroke-width="1"/></svg>
<div class="abs" style="left:172.400px;top:1178.800px;width:10px;height:10px;background:#fff;border:1px solid #555;box-sizing:border-box"></div>
<svg width="10" height="10" viewBox="0 0 10 10" style="left:172.400px;top:1178.800px"><path d="M2 5l2.200 2.400 4-5" fill="none" stroke="#333" stroke-width="1.100"/></svg>
<div class="f2" style="left:185.4px;top:1179.9px;font-size:8.5px;line-height:9.8px;color:#222;">Report DRF Coordinates</div>
<div class="abs" style="left:37px;top:1191px;width:259px;height:52px;border:1px solid #e6e6e6;box-sizing:border-box;border-bottom:none"></div>
<div class="abs" style="left:41px;top:1186px;width:97px;height:10px;background:#f0f0f0"></div>
<div class="f2" style="left:43px;top:1187.7px;font-size:8.5px;line-height:9.8px;color:#222;">Datum Reference Frame</div>
<div class="f2" style="left:38.2px;top:1198.3px;font-size:8.5px;line-height:9.8px;color:#222;">Primary:</div>
<div class="f2" style="left:125.3px;top:1198.3px;font-size:8.5px;line-height:9.8px;color:#222;">Secondary:</div>
<div class="f2" style="left:211.9px;top:1198.3px;font-size:8.5px;line-height:9.8px;color:#222;">Tertiary:</div>
<div class="cmb" style="left:38.7px;top:1211.300px;width:77.7px;height:14.200px"></div>
<svg width="8" height="5" viewBox="0 0 8 5" style="left:104.9px;top:1216.0px"><path d="M1 1l3 3 3-3" fill="none" stroke="#444" stroke-width="1"/></svg>
<div class="cmb" style="left:125.3px;top:1211.300px;width:77.7px;height:14.200px"></div>
<svg width="8" height="5" viewBox="0 0 8 5" style="left:191.5px;top:1216.0px"><path d="M1 1l3 3 3-3" fill="none" stroke="#444" stroke-width="1"/></svg>
<div class="cmb" style="left:211.9px;top:1211.300px;width:77.6px;height:14.200px"></div>
<svg width="8" height="5" viewBox="0 0 8 5" style="left:278.0px;top:1216.0px"><path d="M1 1l3 3 3-3" fill="none" stroke="#444" stroke-width="1"/></svg>
<div class="f2" style="left:43px;top:1233.0px;font-size:8.5px;line-height:9.8px;color:#222;">Status:</div>
<div class="abs" style="left:81px;top:1230.400px;width:156.600px;height:15.100px;background:#f0f0f0;border:1px solid #7a7a7a;box-sizing:border-box"></div>
<div class="cmb" style="left:245.400px;top:1231.700px;width:44.100px;height:12.900px;background:#e1e1e1"></div>
<div class="f2" style="left:255px;top:1233.8px;font-size:8.5px;line-height:9.8px;color:#222;">Adjust</div>
<div class="abs" style="left:37px;top:1254px;width:259px;height:1px;background:#e6e6e6"></div><div class="abs" style="left:41px;top:1250px;width:40px;height:9px;background:#f0f0f0"></div>
<div class="f2" style="left:43px;top:1251.9px;font-size:8.5px;line-height:9.8px;color:#222;">Best Fit</div>
<div class="f2" style="left:43px;top:1262.6px;font-size:8.5px;line-height:9.8px;color:#b4b4b4;">Weight:</div>
<div class="abs" style="left:81px;top:1260.500px;width:83.600px;height:14.500px;background:#f4f4f4;border:1px solid #d4d4d4;box-sizing:border-box"></div>
<div class="f2" style="left:85.8px;top:1263.8px;font-size:8.5px;line-height:9.8px;color:#999;">1</div>
<div class="abs" style="left:29.800px;top:1281.500px;width:274px;height:159.500px;background:#f0f0f0"></div>
<div class="abs" style="left:29.800px;top:1281.500px;width:274px;height:1px;background:#d0d0d0"></div>
<div class="abs" style="left:33.300px;top:1284.700px;width:10px;height:9px;background:#fff;border:1px solid #111;box-sizing:border-box"></div><svg width="10" height="9" viewBox="0 0 10 9" style="left:33.300px;top:1284.700px"><path d="M2 4.500l2.200 2.400 4-5" fill="none" stroke="#111" stroke-width="1.500"/></svg>
<div class="f2" style="left:47.5px;top:1284.9px;font-size:9px;line-height:10.3px;color:#222;">I.</div>
<div class="f2" style="left:56.2px;top:1284.9px;font-size:9px;line-height:10.3px;color:#222;">Report</div>
<div class="f2" style="left:126.3px;top:1284.9px;font-size:9px;line-height:10.3px;color:#222;">No...</div>
<div class="f2" style="left:157.4px;top:1284.9px;font-size:9px;line-height:10.3px;color:#222;">Tol +</div>
<div class="f2" style="left:270.3px;top:1284.9px;font-size:9px;line-height:10.3px;color:#222;">Tol -</div>
<svg width="8" height="5" viewBox="0 0 8 5" style="left:292.500px;top:1286px"><path d="M1 4l3-3 3 3" fill="none" stroke="#333" stroke-width="1.100"/></svg>
<svg width="8" height="5" viewBox="0 0 8 5" style="left:292.500px;top:1433px"><path d="M1 1l3 3 3-3" fill="none" stroke="#333" stroke-width="1.100"/></svg>
<div class="abs" style="left:291px;top:1294px;width:11.200px;height:104px;background:#c9c9c9"></div>
<div class="abs" style="left:31.300px;top:1296.800px;width:258.200px;height:18.700px;background:#fff;border:1px solid #cfcfcf;box-sizing:border-box"></div>
<div class="abs" style="left:31.300px;top:1296.800px;width:13.700px;height:18.700px;background:#f4f4f4;border:1px solid #cfcfcf;box-sizing:border-box"></div>
<div class="abs" style="left:45px;top:1296.800px;width:9.700px;height:18.700px;border-right:1px solid #cfcfcf;box-sizing:border-box"></div>
<div class="abs" style="left:34.3px;top:1302.2px;width:8px;height:7.600px;background:#fff;border:1px solid #888;box-sizing:border-box"></div>
<svg width="8" height="8" viewBox="0 0 8 8" style="left:34.3px;top:1302.2px"><path d="M1.500 3.800l1.800 2 3.200-4" fill="none" stroke="#555" stroke-width="1.200"/></svg>
<svg width="16" height="14" viewBox="0 0 16 14" style="left:55.600px;top:1299.500px"><rect x="0" y="0" width="15" height="13" fill="#ddd"/><rect x="2.500" y="3.500" width="8" height="7" fill="none" stroke="#222" stroke-width="1"/><path d="M1 7h11M6.500 2v10" stroke="#222" stroke-width=".9"/><rect x="8" y="2" width="5" height="4" fill="#e8d44a"/></svg>
<svg width="100" height="18" viewBox="70 1296 100 18" style="left:70px;top:1296px" font-family="Liberation Sans, sans-serif"><g fill="none" stroke="#222" stroke-width="1"><rect x="75.100" y="1298.300" width="88.200" height="14.600"/><path d="M98.500 1298.300v14.600M126.700 1298.300v14.600M138.700 1298.300v14.600M150.600 1298.300v14.600"/><path d="M77.500 1309.600a9.300 8.300 0 0 1 18.600 0z"/></g><text x="99.400" y="1310" font-size="12.800" fill="#333" textLength="25.300" lengthAdjust="spacingAndGlyphs">.010</text><text x="132.700" y="1310" font-size="12.800" fill="#333" text-anchor="middle">A</text><text x="144.700" y="1310" font-size="12.800" fill="#333" text-anchor="middle">B</text><text x="157" y="1310" font-size="12.800" fill="#333" text-anchor="middle">C</text></svg>
<div class="abs" style="left:31.3px;top:1315.3px;width:13.7px;height:14.1px;background:#fff;border-right:1px solid #d2d2d2;border-bottom:1px solid #d2d2d2;box-sizing:border-box"></div>
<div class="abs" style="left:45px;top:1315.3px;width:9.7px;height:14.1px;background:#fff;border-right:1px solid #d2d2d2;border-bottom:1px solid #d2d2d2;box-sizing:border-box"></div>
<div class="abs" style="left:54.7px;top:1315.3px;width:62.6px;height:14.1px;background:#fff;border-right:1px solid #d2d2d2;border-bottom:1px solid #d2d2d2;box-sizing:border-box"></div>
<div class="abs" style="left:117.3px;top:1315.3px;width:30.2px;height:14.1px;background:#ececec;border-right:1px solid #d2d2d2;border-bottom:1px solid #d2d2d2;box-sizing:border-box"></div>
<div class="abs" style="left:147.5px;top:1315.3px;width:31.1px;height:14.1px;background:#fff;border-right:1px solid #d2d2d2;border-bottom:1px solid #d2d2d2;box-sizing:border-box"></div>
<div class="abs" style="left:178.6px;top:1315.3px;width:110.9px;height:14.1px;background:#ececec;border-right:1px solid #d2d2d2;border-bottom:1px solid #d2d2d2;box-sizing:border-box"></div>
<div class="abs" style="left:34.3px;top:1318.5px;width:8px;height:7.600px;background:#fff;border:1px solid #888;box-sizing:border-box"></div>
<svg width="8" height="8" viewBox="0 0 8 8" style="left:34.3px;top:1318.5px"><path d="M1.500 3.800l1.800 2 3.200-4" fill="none" stroke="#555" stroke-width="1.200"/></svg>
<div class="f2" style="left:56.2px;top:1318.3px;font-size:9px;line-height:10.3px;color:#222;">Profile (2X ...</div>
<div class="f2" style="left:147.500px;width:29.800px;text-align:right;top:1318.3px;font-size:9px;line-height:10.3px;color:#222">0.0200</div>
<div class="abs" style="left:31.3px;top:1329.3px;width:13.7px;height:14.1px;background:#fff;border-right:1px solid #d2d2d2;border-bottom:1px solid #d2d2d2;box-sizing:border-box"></div>
<div class="abs" style="left:45px;top:1329.3px;width:9.7px;height:14.1px;background:#fff;border-right:1px solid #d2d2d2;border-bottom:1px solid #d2d2d2;box-sizing:border-box"></div>
<div class="abs" style="left:54.7px;top:1329.3px;width:62.6px;height:14.1px;background:#fff;border-right:1px solid #d2d2d2;border-bottom:1px solid #d2d2d2;box-sizing:border-box"></div>
<div class="abs" style="left:117.3px;top:1329.3px;width:30.2px;height:14.1px;background:#ececec;border-right:1px solid #d2d2d2;border-bottom:1px solid #d2d2d2;box-sizing:border-box"></div>
<div class="abs" style="left:147.5px;top:1329.3px;width:31.1px;height:14.1px;background:#fff;border-right:1px solid #d2d2d2;border-bottom:1px solid #d2d2d2;box-sizing:border-box"></div>
<div class="abs" style="left:178.6px;top:1329.3px;width:110.9px;height:14.1px;background:#fff;border-right:1px solid #d2d2d2;border-bottom:1px solid #d2d2d2;box-sizing:border-box"></div>
<div class="abs" style="left:34.3px;top:1332.58px;width:8px;height:7.600px;background:#fff;border:1px solid #888;box-sizing:border-box"></div>
<div class="f2" style="left:56.2px;top:1332.4px;font-size:9px;line-height:10.3px;color:#222;">Profile Max</div>
<div class="f2" style="left:147.500px;width:29.800px;text-align:right;top:1332.4px;font-size:9px;line-height:10.3px;color:#222">0.0100</div>
<div class="f2" style="left:178.600px;width:109.600px;text-align:right;top:1332.4px;font-size:9px;line-height:10.3px;color:#222">-0.0100</div>
<div class="abs" style="left:31.3px;top:1343.4px;width:13.7px;height:14.1px;background:#fff;border-right:1px solid #d2d2d2;border-bottom:1px solid #d2d2d2;box-sizing:border-box"></div>
<div class="abs" style="left:45px;top:1343.4px;width:9.7px;height:14.1px;background:#fff;border-right:1px solid #d2d2d2;border-bottom:1px solid #d2d2d2;box-sizing:border-box"></div>
<div class="abs" style="left:54.7px;top:1343.4px;width:62.6px;height:14.1px;background:#fff;border-right:1px solid #d2d2d2;border-bottom:1px solid #d2d2d2;box-sizing:border-box"></div>
<div class="abs" style="left:117.3px;top:1343.4px;width:30.2px;height:14.1px;background:#ececec;border-right:1px solid #d2d2d2;border-bottom:1px solid #d2d2d2;box-sizing:border-box"></div>
<div class="abs" style="left:147.5px;top:1343.4px;width:31.1px;height:14.1px;background:#fff;border-right:1px solid #d2d2d2;border-bottom:1px solid #d2d2d2;box-sizing:border-box"></div>
<div class="abs" style="left:178.6px;top:1343.4px;width:110.9px;height:14.1px;background:#fff;border-right:1px solid #d2d2d2;border-bottom:1px solid #d2d2d2;box-sizing:border-box"></div>
<div class="abs" style="left:34.3px;top:1346.66px;width:8px;height:7.600px;background:#fff;border:1px solid #888;box-sizing:border-box"></div>
<div class="f2" style="left:56.2px;top:1346.5px;font-size:9px;line-height:10.3px;color:#222;">Profile Min</div>
<div class="f2" style="left:147.500px;width:29.800px;text-align:right;top:1346.5px;font-size:9px;line-height:10.3px;color:#222">0.0100</div>
<div class="f2" style="left:178.600px;width:109.600px;text-align:right;top:1346.5px;font-size:9px;line-height:10.3px;color:#222">-0.0100</div>
<div class="abs" style="left:31.3px;top:1357.5px;width:13.7px;height:14.1px;background:#fff;border-right:1px solid #d2d2d2;border-bottom:1px solid #d2d2d2;box-sizing:border-box"></div>
<div class="abs" style="left:45px;top:1357.5px;width:9.7px;height:14.1px;background:#fff;border-right:1px solid #d2d2d2;border-bottom:1px solid #d2d2d2;box-sizing:border-box"></div>
<div class="abs" style="left:54.7px;top:1357.5px;width:62.6px;height:14.1px;background:#fff;border-right:1px solid #d2d2d2;border-bottom:1px solid #d2d2d2;box-sizing:border-box"></div>
<div class="abs" style="left:117.3px;top:1357.5px;width:30.2px;height:14.1px;background:#ececec;border-right:1px solid #d2d2d2;border-bottom:1px solid #d2d2d2;box-sizing:border-box"></div>
<div class="abs" style="left:147.5px;top:1357.5px;width:31.1px;height:14.1px;background:#fff;border-right:1px solid #d2d2d2;border-bottom:1px solid #d2d2d2;box-sizing:border-box"></div>
<div class="abs" style="left:178.6px;top:1357.5px;width:110.9px;height:14.1px;background:#fff;border-right:1px solid #d2d2d2;border-bottom:1px solid #d2d2d2;box-sizing:border-box"></div>
<div class="abs" style="left:34.3px;top:1360.74px;width:8px;height:7.600px;background:#fff;border:1px solid #888;box-sizing:border-box"></div>
<div class="f2" style="left:56.2px;top:1360.6px;font-size:9px;line-height:10.3px;color:#222;">Range</div>
<div class="f2" style="left:147.500px;width:29.800px;text-align:right;top:1360.5px;font-size:9px;line-height:10.3px;color:#222">0.0100</div>
<div class="f2" style="left:178.600px;width:109.600px;text-align:right;top:1360.5px;font-size:9px;line-height:10.3px;color:#222">-0.0100</div>
<div class="abs" style="left:31.3px;top:1371.6px;width:13.7px;height:14.1px;background:#fff;border-right:1px solid #d2d2d2;border-bottom:1px solid #d2d2d2;box-sizing:border-box"></div>
<div class="abs" style="left:45px;top:1371.6px;width:9.7px;height:14.1px;background:#fff;border-right:1px solid #d2d2d2;border-bottom:1px solid #d2d2d2;box-sizing:border-box"></div>
<div class="abs" style="left:54.7px;top:1371.6px;width:62.6px;height:14.1px;background:#fff;border-right:1px solid #d2d2d2;border-bottom:1px solid #d2d2d2;box-sizing:border-box"></div>
<div class="abs" style="left:117.3px;top:1371.6px;width:30.2px;height:14.1px;background:#ececec;border-right:1px solid #d2d2d2;border-bottom:1px solid #d2d2d2;box-sizing:border-box"></div>
<div class="abs" style="left:147.5px;top:1371.6px;width:31.1px;height:14.1px;background:#fff;border-right:1px solid #d2d2d2;border-bottom:1px solid #d2d2d2;box-sizing:border-box"></div>
<div class="abs" style="left:178.6px;top:1371.6px;width:110.9px;height:14.1px;background:#fff;border-right:1px solid #d2d2d2;border-bottom:1px solid #d2d2d2;box-sizing:border-box"></div>
<div class="abs" style="left:34.3px;top:1374.82px;width:8px;height:7.600px;background:#fff;border:1px solid #888;box-sizing:border-box"></div>
<div class="f2" style="left:56.2px;top:1374.6px;font-size:9px;line-height:10.3px;color:#222;">Average</div>
<div class="f2" style="left:147.500px;width:29.800px;text-align:right;top:1374.6px;font-size:9px;line-height:10.3px;color:#222">0.0100</div>
<div class="f2" style="left:178.600px;width:109.600px;text-align:right;top:1374.6px;font-size:9px;line-height:10.3px;color:#222">-0.0100</div>
<div class="abs" style="left:31.3px;top:1385.7px;width:13.7px;height:14.1px;background:#fff;border-right:1px solid #d2d2d2;border-bottom:1px solid #d2d2d2;box-sizing:border-box"></div>
<div class="abs" style="left:45px;top:1385.7px;width:9.7px;height:14.1px;background:#fff;border-right:1px solid #d2d2d2;border-bottom:1px solid #d2d2d2;box-sizing:border-box"></div>
<div class="abs" style="left:54.7px;top:1385.7px;width:62.6px;height:14.1px;background:#fff;border-right:1px solid #d2d2d2;border-bottom:1px solid #d2d2d2;box-sizing:border-box"></div>
<div class="abs" style="left:117.3px;top:1385.7px;width:30.2px;height:14.1px;background:#ececec;border-right:1px solid #d2d2d2;border-bottom:1px solid #d2d2d2;box-sizing:border-box"></div>
<div class="abs" style="left:147.5px;top:1385.7px;width:31.1px;height:14.1px;background:#fff;border-right:1px solid #d2d2d2;border-bottom:1px solid #d2d2d2;box-sizing:border-box"></div>
<div class="abs" style="left:178.6px;top:1385.7px;width:110.9px;height:14.1px;background:#fff;border-right:1px solid #d2d2d2;border-bottom:1px solid #d2d2d2;box-sizing:border-box"></div>
<div class="abs" style="left:34.3px;top:1388.9px;width:8px;height:7.600px;background:#fff;border:1px solid #888;box-sizing:border-box"></div>
<div class="f2" style="left:56.2px;top:1388.7px;font-size:9px;line-height:10.3px;color:#222;">Mid-range</div>
<div class="f2" style="left:147.500px;width:29.800px;text-align:right;top:1388.7px;font-size:9px;line-height:10.3px;color:#222">0.0100</div>
<div class="f2" style="left:178.600px;width:109.600px;text-align:right;top:1388.7px;font-size:9px;line-height:10.3px;color:#222">-0.0100</div>
<div class="abs" style="left:31.3px;top:1399.7px;width:13.7px;height:14.1px;background:#fff;border-right:1px solid #d2d2d2;border-bottom:1px solid #d2d2d2;box-sizing:border-box"></div>
<div class="abs" style="left:45px;top:1399.7px;width:9.7px;height:14.1px;background:#fff;border-right:1px solid #d2d2d2;border-bottom:1px solid #d2d2d2;box-sizing:border-box"></div>
<div class="abs" style="left:54.7px;top:1399.7px;width:62.6px;height:14.1px;background:#fff;border-right:1px solid #d2d2d2;border-bottom:1px solid #d2d2d2;box-sizing:border-box"></div>
<div class="abs" style="left:117.3px;top:1399.7px;width:30.2px;height:14.1px;background:#fff;border-right:1px solid #d2d2d2;border-bottom:1px solid #d2d2d2;box-sizing:border-box"></div>
<div class="abs" style="left:147.5px;top:1399.7px;width:31.1px;height:14.1px;background:#ececec;border-right:1px solid #d2d2d2;border-bottom:1px solid #d2d2d2;box-sizing:border-box"></div>
<div class="abs" style="left:178.6px;top:1399.7px;width:110.9px;height:14.1px;background:#ececec;border-right:1px solid #d2d2d2;border-bottom:1px solid #d2d2d2;box-sizing:border-box"></div>
<div class="abs" style="left:34.3px;top:1402.98px;width:8px;height:7.600px;background:#fff;border:1px solid #888;box-sizing:border-box"></div>
<div class="f2" style="left:56.2px;top:1402.8px;font-size:9px;line-height:10.3px;color:#222;">Local Profile...</div>
<div class="f2" style="left:120.8px;top:1402.8px;font-size:9px;line-height:10.3px;color:#222;">1.0000</div>
<div class="abs" style="left:31.3px;top:1413.8px;width:13.7px;height:14.1px;background:#fff;border-right:1px solid #d2d2d2;border-bottom:1px solid #d2d2d2;box-sizing:border-box"></div>
<div class="abs" style="left:45px;top:1413.8px;width:9.7px;height:14.1px;background:#fff;border-right:1px solid #d2d2d2;border-bottom:1px solid #d2d2d2;box-sizing:border-box"></div>
<div class="abs" style="left:54.7px;top:1413.8px;width:62.6px;height:14.1px;background:#fff;border-right:1px solid #d2d2d2;border-bottom:1px solid #d2d2d2;box-sizing:border-box"></div>
<div class="abs" style="left:117.3px;top:1413.8px;width:30.2px;height:14.1px;background:#ececec;border-right:1px solid #d2d2d2;border-bottom:1px solid #d2d2d2;box-sizing:border-box"></div>
<div class="abs" style="left:147.5px;top:1413.8px;width:31.1px;height:14.1px;background:#fff;border-right:1px solid #d2d2d2;border-bottom:1px solid #d2d2d2;box-sizing:border-box"></div>
<div class="abs" style="left:178.6px;top:1413.8px;width:110.9px;height:14.1px;background:#ececec;border-right:1px solid #d2d2d2;border-bottom:1px solid #d2d2d2;box-sizing:border-box"></div>
<div class="abs" style="left:34.3px;top:1417.06px;width:8px;height:7.600px;background:#fff;border:1px solid #888;box-sizing:border-box"></div>
<div class="f2" style="left:56.2px;top:1416.9px;font-size:9px;line-height:10.3px;color:#222;">Local Profile</div>
<div class="f2" style="left:147.500px;width:29.800px;text-align:right;top:1416.9px;font-size:9px;line-height:10.3px;color:#222">0.0100</div>
<div class="abs" style="left:31.3px;top:1427.9px;width:13.7px;height:14.1px;background:#fff;border-right:1px solid #d2d2d2;border-bottom:1px solid #d2d2d2;box-sizing:border-box"></div>
<div class="abs" style="left:45px;top:1427.9px;width:9.7px;height:14.1px;background:#fff;border-right:1px solid #d2d2d2;border-bottom:1px solid #d2d2d2;box-sizing:border-box"></div>
<div class="abs" style="left:54.7px;top:1427.9px;width:62.6px;height:14.1px;background:#fff;border-right:1px solid #d2d2d2;border-bottom:1px solid #d2d2d2;box-sizing:border-box"></div>
<div class="abs" style="left:117.3px;top:1427.9px;width:30.2px;height:14.1px;background:#ececec;border-right:1px solid #d2d2d2;border-bottom:1px solid #d2d2d2;box-sizing:border-box"></div>
<div class="abs" style="left:147.5px;top:1427.9px;width:31.1px;height:14.1px;background:#fff;border-right:1px solid #d2d2d2;border-bottom:1px solid #d2d2d2;box-sizing:border-box"></div>
<div class="abs" style="left:178.6px;top:1427.9px;width:110.9px;height:14.1px;background:#fff;border-right:1px solid #d2d2d2;border-bottom:1px solid #d2d2d2;box-sizing:border-box"></div>
<div class="abs" style="left:34.3px;top:1431.14px;width:8px;height:7.600px;background:#fff;border:1px solid #888;box-sizing:border-box"></div>
<div class="f2" style="left:56.2px;top:1431.0px;font-size:9px;line-height:10.3px;color:#222;">Composite ...</div>
<div class="f2" style="left:147.500px;width:29.800px;text-align:right;top:1430.9px;font-size:9px;line-height:10.3px;color:#222">0.0100</div>
<div class="f2" style="left:178.600px;width:109.600px;text-align:right;top:1430.9px;font-size:9px;line-height:10.3px;color:#222">0.0100</div>
<div class="abs" style="left:30px;top:1296.800px;width:1.500px;height:144px;background:#9a9a9a"></div>
<svg width="24" height="500" viewBox="8 940 24 500" style="left:8px;top:940px">
<path d="M13.500 953.2l9-9" stroke="#3f78c8" stroke-width="2"/><path d="M21 943.2l3 2" stroke="#c33" stroke-width="1.500"/>
<circle cx="17.500" cy="963" r="3.200" fill="none" stroke="#555" stroke-width=".9"/><path d="M12.500 963h10M17.500 958v10" stroke="#555" stroke-width=".9"/><path d="M24 964v4" stroke="#c33" stroke-width="1.600"/>
<path d="M13 983.3l9-9" stroke="#444" stroke-width="1"/><path d="M24 979.3v4" stroke="#c33" stroke-width="1.600"/>
<ellipse cx="17.500" cy="993.2" rx="5" ry="4" fill="none" stroke="#555" stroke-width="1"/><path d="M24 994.2v4" stroke="#c33" stroke-width="1.600"/>
<rect x="12.500" y="1005" width="10" height="6" rx="3" fill="none" stroke="#555" stroke-width="1"/><path d="M24 1009v4" stroke="#c33" stroke-width="1.600"/>
<rect x="12.500" y="1019.6" width="10" height="6" rx="3" fill="none" stroke="#555" stroke-width="1"/><path d="M24 1023.6v4" stroke="#c33" stroke-width="1.600"/>
<path d="M12.500 1037.4l6-3.500 6 3.500-6 3.500z" fill="#3f78c8"/><path d="M24 1039.4v4" stroke="#c33" stroke-width="1.600"/>
<circle cx="18" cy="1051.5" r="5" fill="#3f6fb8"/><path d="M24.500 1053.5v4" stroke="#c33" stroke-width="1.600"/>
<rect x="13.500" y="1061.8" width="8" height="10" rx="1.500" fill="#3f6fb8"/><path d="M24 1068.8v4" stroke="#c33" stroke-width="1.600"/>
<path d="M18 1076.7l5.500 9.500h-11z" fill="#3f6fb8"/><path d="M24.500 1083.7v4" stroke="#c33" stroke-width="1.600"/>
<path d="M12.500 1091.7h11l-5.500 8z" fill="#3f6fb8"/><path d="M24.500 1097.7v4" stroke="#c33" stroke-width="1.600"/>
<ellipse cx="18" cy="1111.3" rx="6" ry="4.500" fill="none" stroke="#3f6fb8" stroke-width="2.600"/><path d="M24.500 1113.3v4" stroke="#c33" stroke-width="1.600"/>
<path d="M18 1119.9l6.500 3v6l-6.500 3.500-6.500-3.500v-6z" fill="#3f78c8"/><path d="M18 1119.9l6.500 3-6.500 3-6.500-3z" fill="#e8a030"/><path d="M18 1125.9v6.500l6.500-3.500v-6z" fill="#4a9a5a"/><path d="M24.500 1127.9v4" stroke="#c33" stroke-width="1.600"/>
<path d="M12.500 1146.4h12M12.500 1142.4v5M24.500 1142.4v5" stroke="#e08020" stroke-width="1.800" fill="none"/><circle cx="15" cy="1141.4" r="1" fill="#e08020"/><circle cx="22" cy="1141.4" r="1" fill="#e08020"/>
<path d="M12.500 1163.3h12M12.500 1163.3l11-8" stroke="#999" stroke-width="1" fill="none"/>
<path d="M16.500 1171l-4 3 4 3M20.500 1171l4 3-4 3" stroke="#6ab06a" stroke-width="1.300" fill="none"/>
<path d="M12.500 1195.8l12-8" stroke="#4a9a5a" stroke-width="1"/><path d="M16 1188.8l6 5" stroke="#c33" stroke-width="1.200"/>
<path d="M12.500 1211l12-8M15 1203l4 9" stroke="#8a3a2a" stroke-width="1.200"/>
<path d="M13 1226.6l11-9" stroke="#4a9a5a" stroke-width="1"/><path d="M17 1219.6l5 3" stroke="#c33" stroke-width="1.200"/><path d="M14 1222.6v5" stroke="#3f8272" stroke-width="1.200"/>
<path d="M12.500 1241.5a6 6 0 0 1 12 0z" fill="#3f8272"/><path d="M18.500 1231.5v4" stroke="#3f8272" stroke-width="1.200"/><circle cx="18.500" cy="1238.5" r="1.500" fill="#fff"/>
<path d="M12.500 1257.7l1.500-6h9l1.500 6z" fill="#3f8272"/><path d="M18.500 1246.7v5" stroke="#3f8272" stroke-width="1.200"/><circle cx="18.500" cy="1254.7" r="1.500" fill="#fff"/>
<g fill="#444"><path d="M14 1266.2h2v2h-2zM21 1265.2h2v2h-2zM17.500 1269.2h2v2h-2zM13 1273.2h2v2h-2zM22 1273.2h2v2h-2z"/></g>
<circle cx="18.500" cy="1284.4" r="3" fill="none" stroke="#666" stroke-width=".9"/><path d="M13 1284.4h11M18.500 1278.9v11" stroke="#666" stroke-width=".9"/>
<path d="M13 1305l11-10" stroke="#555" stroke-width="1"/>
<ellipse cx="18.500" cy="1314.5" rx="5.500" ry="4.500" fill="none" stroke="#777" stroke-width="1"/>
<path d="M12 1329l6.500-3.800 6.500 3.800-6.500 3.800z" fill="#3f8272"/>
<ellipse cx="18.500" cy="1343.5" rx="5.800" ry="4.800" fill="#3f8272"/>
<rect x="13.500" y="1353" width="9.500" height="10" rx="1.500" fill="#3f8272"/>
<path d="M18.500 1368l6 9.500h-12z" fill="#3f8272"/>
<rect x="12.500" y="1385.3" width="12" height="5" rx="2.500" fill="none" stroke="#aaa" stroke-width="1"/>
<rect x="13" y="1399.3" width="11" height="7.500" fill="none" stroke="#2f5f52" stroke-width="1.300"/>
<ellipse cx="18.500" cy="1418" rx="6" ry="2.800" fill="none" stroke="#aaa" stroke-width="1"/>
<ellipse cx="18.500" cy="1432.6" rx="5" ry="4" fill="none" stroke="#3f8272" stroke-width="2.800"/>
<path d="M12 942.500h13M12 1134.600h13M12 1182.700h13M12 1260.500h13" stroke="#d4d4d4" stroke-width="1"/>
</svg>
</div>

<div class="abs" style="left:309px;top:843px;width:1230px;height:598px;overflow:hidden"><svg width="1230" height="598" viewBox="309 843 1230 598" style="left:0;top:0;filter:blur(.4px)">
<path d="M897.8,901.7 L838.3,901.7 L838.3,952.5 L835.0,963.3 L746.7,1035.0 L723.3,1048.3 L707.5,1050.0 L594.2,1084.2 L595.0,1174.0 L595.0,1187.0 L837.5,1370.8 L897.8,1370.8 L897.8,1370.8 L958.1,1370.8 L1200.6,1187.0 L1200.6,1174.0 L1201.4,1084.2 L1088.1,1050.0 L1072.3,1048.3 L1048.9,1035.0 L960.6,963.3 L957.3,952.5 L957.3,901.7 L897.8,901.7Z M897.8,1042.5 L840.0,1042.5 L763.3,1101.7 L757.0,1122.0 L838.0,1185.0 L897.8,1185.0 L897.8,1185.0 L957.6,1185.0 L1038.6,1122.0 L1032.3,1101.7 L955.6,1042.5 L897.8,1042.5Z M660.0,1202.5 L720.0,1202.5 L723.3,1201.3 L714.2,1238.3 L709.2,1240.0Z M1135.6,1202.5 L1075.6,1202.5 L1072.3,1201.3 L1081.4,1238.3 L1086.4,1240.0Z M777.5,1292.5 L818.3,1282.0 L821.7,1280.8 L821.7,1317.5 L815.8,1320.8 L811.7,1320.0Z M1018.1,1292.5 L977.3,1282.0 L973.9,1280.8 L973.9,1317.5 L979.8,1320.8 L983.9,1320.0Z" fill="#d4d4d4" fill-rule="evenodd" stroke="#1c1c1c" stroke-width="0.7" stroke-linejoin="round"/>
<polygon points="595.0,1174.0 838.3,1357.5 837.5,1370.8 595.0,1187.0" fill="#7a7a7a" stroke="#1c1c1c" stroke-width="0.6" stroke-linejoin="round"/>
<polygon points="1200.6,1174.0 957.3,1357.5 958.1,1370.8 1200.6,1187.0" fill="#6a6a6a" stroke="#1c1c1c" stroke-width="0.6" stroke-linejoin="round"/>
<polygon points="838.3,1357.5 957.3,1357.5 958.1,1370.8 837.5,1370.8" fill="#707070" stroke="#1c1c1c" stroke-width="0.6" stroke-linejoin="round"/>
<polygon points="838.3,901.7 849.2,902.5 849.2,961.7 838.3,952.5" fill="#dadada" stroke="#1c1c1c" stroke-width="0.6" stroke-linejoin="round"/>
<polygon points="957.3,901.7 946.4,902.5 946.4,961.7 957.3,952.5" fill="#dadada" stroke="#1c1c1c" stroke-width="0.6" stroke-linejoin="round"/>
<polygon points="849.2,902.5 855.0,903.3 855.0,961.7 849.2,961.7" fill="#b4b4b4" stroke="#1c1c1c" stroke-width="0.6" stroke-linejoin="round"/>
<polygon points="946.4,902.5 940.6,903.3 940.6,961.7 946.4,961.7" fill="#f0f0f0" stroke="#1c1c1c" stroke-width="0.6" stroke-linejoin="round"/>
<polygon points="855.0,903.0 940.8,903.0 940.8,962.5 855.0,962.5" fill="#d4d4d4" stroke="#1c1c1c" stroke-width="0.6" stroke-linejoin="round"/>
<ellipse cx="897.5" cy="939.2" rx="9.2" ry="7" fill="#6a6a6a" stroke="#222" stroke-width="0.7"/>
<path d="M891.3,963.0 a6.6 4.4 0 0 1 13.2 0z" fill="#6a6a6a" stroke="#222" stroke-width=".6"/>
<polygon points="746.7,1035.0 835.0,963.3 838.3,952.5 897.8,952.5 897.8,970.0 844.2,970.0 835.0,973.0 755.0,1033.3 754.0,1124.0 747.5,1140.0" fill="#dcdcdc" stroke="#1c1c1c" stroke-width="0.6" stroke-linejoin="round"/>
<polygon points="1048.9,1035.0 960.6,963.3 957.3,952.5 897.8,952.5 897.8,970.0 951.4,970.0 960.6,973.0 1040.6,1033.3 1041.6,1124.0 1048.1,1140.0" fill="#dcdcdc" stroke="#1c1c1c" stroke-width="0.6" stroke-linejoin="round"/>
<polygon points="758.3,1033.3 835.0,973.3 835.0,1037.0 760.8,1093.0" fill="#727272" stroke="#1c1c1c" stroke-width="0.6" stroke-linejoin="round"/>
<polygon points="1037.3,1033.3 960.6,973.3 960.6,1037.0 1034.8,1093.0" fill="#787878" stroke="#1c1c1c" stroke-width="0.6" stroke-linejoin="round"/>
<polygon points="835.0,973.3 844.2,970.3 844.2,1033.7 835.0,1037.0" fill="#858585" stroke="#1c1c1c" stroke-width="0.6" stroke-linejoin="round"/>
<polygon points="960.6,973.3 951.4,970.3 951.4,1033.7 960.6,1037.0" fill="#858585" stroke="#1c1c1c" stroke-width="0.6" stroke-linejoin="round"/>
<polygon points="844.2,970.0 951.4,970.0 951.4,1033.6 844.2,1033.6" fill="#666" stroke="#1c1c1c" stroke-width="0.6" stroke-linejoin="round"/>
<polygon points="754.7,1034.3 758.3,1033.3 760.8,1093.0 755.8,1097.5" fill="#8f8f8f" stroke="#1c1c1c" stroke-width="0.6" stroke-linejoin="round"/>
<polygon points="1040.9,1034.3 1037.3,1033.3 1034.8,1093.0 1039.8,1097.5" fill="#8f8f8f" stroke="#1c1c1c" stroke-width="0.6" stroke-linejoin="round"/>
<polygon points="897.8,1033.6 844.2,1033.6 835.0,1037.0 760.5,1093.0 756.0,1098.0 763.3,1101.7 840.0,1042.5 897.8,1042.5" fill="#c9c9c9" stroke="#1c1c1c" stroke-width="0.6" stroke-linejoin="round"/>
<polygon points="897.8,1033.6 951.4,1033.6 960.6,1037.0 1035.1,1093.0 1039.6,1098.0 1032.3,1101.7 955.6,1042.5 897.8,1042.5" fill="#c9c9c9" stroke="#1c1c1c" stroke-width="0.6" stroke-linejoin="round"/>
<polyline points="897.8,1038.0 842.0,1038.0 762.0,1098.0" fill="none" stroke="#f2f2f2" stroke-width="1.4"/>
<polyline points="897.8,1038.0 953.6,1038.0 1033.6,1098.0" fill="none" stroke="#f2f2f2" stroke-width="1.4"/>
<polygon points="754.0,1124.0 838.0,1185.0 838.3,1202.0 747.5,1140.0" fill="#6a6a6a" stroke="#1c1c1c" stroke-width="0.6" stroke-linejoin="round"/>
<polygon points="1041.6,1124.0 957.6,1185.0 957.3,1202.0 1048.1,1140.0" fill="#6a6a6a" stroke="#1c1c1c" stroke-width="0.6" stroke-linejoin="round"/>
<polygon points="838.0,1185.0 957.6,1185.0 957.3,1202.0 838.3,1202.0" fill="#646464" stroke="#1c1c1c" stroke-width="0.6" stroke-linejoin="round"/>
<polyline points="755.0,1123.5 838.0,1184.3 897.8,1184.3" fill="none" stroke="#e8e8e8" stroke-width="1.1"/>
<polyline points="1040.6,1123.5 957.6,1184.3 897.8,1184.3" fill="none" stroke="#e8e8e8" stroke-width="1.1"/>
<ellipse cx="775.3" cy="1050.8" rx="2.3" ry="3.2" fill="#ddd" stroke="#222" stroke-width="0.6" transform="rotate(38 775.3 1050.8)"/>
<ellipse cx="1020.3" cy="1050.8" rx="2.3" ry="3.2" fill="#ddd" stroke="#222" stroke-width="0.6" transform="rotate(-38 1020.3 1050.8)"/>
<ellipse cx="818.8" cy="1017.5" rx="2.3" ry="3.2" fill="#ddd" stroke="#222" stroke-width="0.6" transform="rotate(38 818.8 1017.5)"/>
<ellipse cx="976.8" cy="1017.5" rx="2.3" ry="3.2" fill="#ddd" stroke="#222" stroke-width="0.6" transform="rotate(-38 976.8 1017.5)"/>
<ellipse cx="866.7" cy="1003.0" rx="4.2" ry="2.4" fill="#eee" stroke="#222" stroke-width="0.6"/>
<ellipse cx="928.8" cy="1003.0" rx="4.2" ry="2.4" fill="#f6d0d0" stroke="#222" stroke-width="0.6"/>
<polygon points="594.2,1084.2 707.5,1050.0 708.7,1056.7 607.0,1090.0 595.0,1090.3" fill="#e6e6e6" stroke="#1c1c1c" stroke-width="0.6" stroke-linejoin="round"/>
<polygon points="1201.4,1084.2 1088.1,1050.0 1086.9,1056.7 1188.6,1090.0 1200.6,1090.3" fill="#8e8e8e" stroke="#1c1c1c" stroke-width="0.6" stroke-linejoin="round"/>
<polygon points="607.5,1090.0 708.7,1056.7 720.0,1056.7 724.2,1060.8 724.2,1089.7" fill="#727272" stroke="#1c1c1c" stroke-width="0.6" stroke-linejoin="round"/>
<polygon points="1188.1,1090.0 1086.9,1056.7 1075.6,1056.7 1071.4,1060.8 1071.4,1089.7" fill="#727272" stroke="#1c1c1c" stroke-width="0.6" stroke-linejoin="round"/>
<polygon points="720.0,1056.7 724.2,1056.7 724.2,1060.8" fill="#9a9a9a" stroke="#1c1c1c" stroke-width="0.6" stroke-linejoin="round"/>
<polygon points="1075.6,1056.7 1071.4,1056.7 1071.4,1060.8" fill="#9a9a9a" stroke="#1c1c1c" stroke-width="0.6" stroke-linejoin="round"/>
<polygon points="595.0,1090.3 724.2,1089.7 724.2,1097.0 595.0,1093.7" fill="#c2c2c2" stroke="#1c1c1c" stroke-width="0.6" stroke-linejoin="round"/>
<polygon points="1200.6,1090.3 1071.4,1089.7 1071.4,1097.0 1200.6,1093.7" fill="#c2c2c2" stroke="#1c1c1c" stroke-width="0.6" stroke-linejoin="round"/>
<polygon points="595.0,1093.7 724.2,1097.0 724.2,1126.7 720.0,1130.8 706.7,1132.8 595.0,1164.5" fill="#d8d8d8" stroke="#1c1c1c" stroke-width="0.6" stroke-linejoin="round"/>
<polygon points="1200.6,1093.7 1071.4,1097.0 1071.4,1126.7 1075.6,1130.8 1088.9,1132.8 1200.6,1164.5" fill="#d8d8d8" stroke="#1c1c1c" stroke-width="0.6" stroke-linejoin="round"/>
<ellipse cx="644.2" cy="1129.2" rx="9.2" ry="7" fill="#727272" stroke="#222" stroke-width="0.7"/>
<ellipse cx="1151.4" cy="1129.2" rx="9.2" ry="7" fill="#727272" stroke="#222" stroke-width="0.7"/>
<ellipse cx="644.2" cy="1131.3" rx="6.4399999999999995" ry="4.2" fill="#8e8e8e"/>
<ellipse cx="1151.4" cy="1131.3" rx="6.4399999999999995" ry="4.2" fill="#8e8e8e"/>
<ellipse cx="673.8" cy="1129.5" rx="7" ry="5.5" fill="#727272" stroke="#222" stroke-width="0.7"/>
<ellipse cx="1121.8" cy="1129.5" rx="7" ry="5.5" fill="#727272" stroke="#222" stroke-width="0.7"/>
<ellipse cx="673.8" cy="1131.2" rx="4.8999999999999995" ry="3.3" fill="#8e8e8e"/>
<ellipse cx="1121.8" cy="1131.2" rx="4.8999999999999995" ry="3.3" fill="#8e8e8e"/>
<ellipse cx="702.5" cy="1128.3" rx="8.8" ry="6.4" fill="#727272" stroke="#222" stroke-width="0.7"/>
<ellipse cx="1093.1" cy="1128.3" rx="8.8" ry="6.4" fill="#727272" stroke="#222" stroke-width="0.7"/>
<ellipse cx="702.5" cy="1130.3" rx="6.16" ry="3.84" fill="#8e8e8e"/>
<ellipse cx="1093.1" cy="1130.3" rx="6.16" ry="3.84" fill="#8e8e8e"/>
<polygon points="595.0,1164.5 706.7,1132.8 708.7,1138.7 615.0,1172.3 596.7,1172.3" fill="#e2e2e2" stroke="#1c1c1c" stroke-width="0.6" stroke-linejoin="round"/>
<polygon points="1200.6,1164.5 1088.9,1132.8 1086.9,1138.7 1180.6,1172.3 1198.9,1172.3" fill="#e2e2e2" stroke="#1c1c1c" stroke-width="0.6" stroke-linejoin="round"/>
<polygon points="615.0,1172.3 708.7,1138.7 718.3,1139.2 723.3,1143.3 740.8,1156.7 740.0,1183.7 619.2,1183.7 618.7,1174.2" fill="#6a6a6a" stroke="#1c1c1c" stroke-width="0.6" stroke-linejoin="round"/>
<polygon points="1180.6,1172.3 1086.9,1138.7 1077.3,1139.2 1072.3,1143.3 1054.8,1156.7 1055.6,1183.7 1176.4,1183.7 1176.9,1174.2" fill="#6a6a6a" stroke="#1c1c1c" stroke-width="0.6" stroke-linejoin="round"/>
<polygon points="718.3,1139.2 723.3,1139.2 723.3,1143.3" fill="#9a9a9a" stroke="#1c1c1c" stroke-width="0.6" stroke-linejoin="round"/>
<polygon points="1077.3,1139.2 1072.3,1139.2 1072.3,1143.3" fill="#9a9a9a" stroke="#1c1c1c" stroke-width="0.6" stroke-linejoin="round"/>
<polygon points="596.7,1172.7 615.0,1172.3 619.2,1175.3 619.2,1183.7 615.0,1181.7" fill="#b8b8b8" stroke="#1c1c1c" stroke-width="0.6" stroke-linejoin="round"/>
<polygon points="1198.9,1172.7 1180.6,1172.3 1176.4,1175.3 1176.4,1183.7 1180.6,1181.7" fill="#b8b8b8" stroke="#1c1c1c" stroke-width="0.6" stroke-linejoin="round"/>
<polygon points="656.7,1200.8 661.7,1197.5 718.3,1197.5 723.3,1200.8 720.0,1202.5 660.0,1202.5" fill="#6e6e6e" stroke="#1c1c1c" stroke-width="0.6" stroke-linejoin="round"/>
<polygon points="1138.9,1200.8 1133.9,1197.5 1077.3,1197.5 1072.3,1200.8 1075.6,1202.5 1135.6,1202.5" fill="#6e6e6e" stroke="#1c1c1c" stroke-width="0.6" stroke-linejoin="round"/>
<polygon points="740.8,1160.0 750.3,1163.7 740.8,1223.3 735.3,1237.0 728.7,1233.3 735.3,1206.7" fill="#c6c6c6" stroke="#1c1c1c" stroke-width="0.6" stroke-linejoin="round"/>
<polygon points="1054.8,1160.0 1045.3,1163.7 1054.8,1223.3 1060.3,1237.0 1066.9,1233.3 1060.3,1206.7" fill="#c6c6c6" stroke="#1c1c1c" stroke-width="0.6" stroke-linejoin="round"/>
<polyline points="745.8,1165.0 736.7,1221.7" fill="none" stroke="#f4f4f4" stroke-width="1.6"/>
<polyline points="1049.8,1165.0 1058.9,1221.7" fill="none" stroke="#f4f4f4" stroke-width="1.6"/>
<polyline points="749.2,1166.7 740.0,1223.3" fill="none" stroke="#8a8a8a" stroke-width="0.8"/>
<polyline points="1046.4,1166.7 1055.6,1223.3" fill="none" stroke="#8a8a8a" stroke-width="0.8"/>
<polygon points="761.7,1173.3 830.0,1223.7 836.7,1229.3 829.2,1231.0 808.3,1230.0 760.0,1192.0" fill="#727272" stroke="#1c1c1c" stroke-width="0.6" stroke-linejoin="round"/>
<polygon points="1033.9,1173.3 965.6,1223.7 958.9,1229.3 966.4,1231.0 987.3,1230.0 1035.6,1192.0" fill="#727272" stroke="#1c1c1c" stroke-width="0.6" stroke-linejoin="round"/>
<polygon points="755.0,1197.5 806.7,1230.8 760.0,1243.3 749.2,1236.7 755.0,1200.8" fill="#d2d2d2" stroke="#1c1c1c" stroke-width="0.6" stroke-linejoin="round"/>
<polygon points="1040.6,1197.5 988.9,1230.8 1035.6,1243.3 1046.4,1236.7 1040.6,1200.8" fill="#d2d2d2" stroke="#1c1c1c" stroke-width="0.6" stroke-linejoin="round"/>
<polyline points="758.3,1198.3 808.3,1230.0" fill="none" stroke="#f4f4f4" stroke-width="1.6"/>
<polyline points="1037.3,1198.3 987.3,1230.0" fill="none" stroke="#f4f4f4" stroke-width="1.6"/>
<polygon points="760.8,1250.3 829.2,1231.0 830.0,1253.3 761.7,1272.5" fill="#6a6a6a" stroke="#1c1c1c" stroke-width="0.6" stroke-linejoin="round"/>
<polygon points="1034.8,1250.3 966.4,1231.0 965.6,1253.3 1033.9,1272.5" fill="#6a6a6a" stroke="#1c1c1c" stroke-width="0.6" stroke-linejoin="round"/>
<polygon points="829.2,1231.0 836.7,1229.7 837.5,1258.3 830.0,1253.3" fill="#8c8c8c" stroke="#1c1c1c" stroke-width="0.6" stroke-linejoin="round"/>
<polygon points="966.4,1231.0 958.9,1229.7 958.1,1258.3 965.6,1253.3" fill="#8c8c8c" stroke="#1c1c1c" stroke-width="0.6" stroke-linejoin="round"/>
<path d="M 704.2,1260.8 L 706.7,1253.3 Q 711.7,1245.8 718.3,1243.0 L 731.7,1235.3 L 736.3,1235.3 L 735.8,1263.3 L 723.3,1277.5 L 716.7,1277.0 L 707.5,1268.7 Z" fill="#d8d8d8" stroke="#1c1c1c" stroke-width="0.6" stroke-linejoin="round"/>
<path d="M 1091.4,1260.8 L 1088.9,1253.3 Q 1083.9,1245.8 1077.3,1243.0 L 1063.9,1235.3 L 1059.3,1235.3 L 1059.8,1263.3 L 1072.3,1277.5 L 1078.9,1277.0 L 1088.1,1268.7 Z" fill="#d8d8d8" stroke="#1c1c1c" stroke-width="0.6" stroke-linejoin="round"/>
<path d="M 710.0,1258.7 Q 714.2,1250.0 720.3,1246.0 L 733.3,1237.0 L 735.8,1240.0 L 735.3,1263.3 L 723.3,1277.0 L 717.0,1276.7 L 707.8,1268.3 Z" fill="#767676" stroke="#1c1c1c" stroke-width="0.6" stroke-linejoin="round"/>
<path d="M 1085.6,1258.7 Q 1081.4,1250.0 1075.3,1246.0 L 1062.3,1237.0 L 1059.8,1240.0 L 1060.3,1263.3 L 1072.3,1277.0 L 1078.6,1276.7 L 1087.8,1268.3 Z" fill="#767676" stroke="#1c1c1c" stroke-width="0.6" stroke-linejoin="round"/>
<path d="M 735.3,1236.7 L 742.0,1235.8 L 752.7,1242.0 L 754.3,1251.0 L 738.0,1263.3 L 735.3,1263.3 Z" fill="#5e5e5e" stroke="#1c1c1c" stroke-width="0.6" stroke-linejoin="round"/>
<path d="M 1060.3,1236.7 L 1053.6,1235.8 L 1042.9,1242.0 L 1041.3,1251.0 L 1057.6,1263.3 L 1060.3,1263.3 Z" fill="#5e5e5e" stroke="#1c1c1c" stroke-width="0.6" stroke-linejoin="round"/>
<ellipse cx="722.8" cy="1254.2" rx="3.6" ry="3.2" fill="#f0e4e4" stroke="#222" stroke-width="0.6" transform="rotate(-35 722.8 1254.2)"/>
<ellipse cx="1072.8" cy="1254.2" rx="3.6" ry="3.2" fill="#f0e4e4" stroke="#222" stroke-width="0.6" transform="rotate(35 1072.8 1254.2)"/>
<path d="M 724.2,1277.0 L 726.7,1270.0 Q 731.7,1264.2 737.5,1261.7 L 753.3,1250.0 L 758.7,1248.3 L 760.3,1250.0 L 760.3,1273.3 L 753.7,1278.7 L 743.7,1285.3 L 742.7,1295.3 L 733.3,1290.3 Z" fill="#d8d8d8" stroke="#1c1c1c" stroke-width="0.6" stroke-linejoin="round"/>
<path d="M 1071.4,1277.0 L 1068.9,1270.0 Q 1063.9,1264.2 1058.1,1261.7 L 1042.3,1250.0 L 1036.9,1248.3 L 1035.3,1250.0 L 1035.3,1273.3 L 1041.9,1278.7 L 1051.9,1285.3 L 1052.9,1295.3 L 1062.3,1290.3 Z" fill="#d8d8d8" stroke="#1c1c1c" stroke-width="0.6" stroke-linejoin="round"/>
<path d="M 730.8,1277.0 Q 734.2,1269.2 740.3,1265.0 L 755.0,1252.0 L 760.0,1250.3 L 760.3,1273.3 L 753.7,1278.3 L 743.7,1285.0 L 742.7,1295.0 L 733.7,1290.0 Z" fill="#767676" stroke="#1c1c1c" stroke-width="0.6" stroke-linejoin="round"/>
<path d="M 1064.8,1277.0 Q 1061.4,1269.2 1055.3,1265.0 L 1040.6,1252.0 L 1035.6,1250.3 L 1035.3,1273.3 L 1041.9,1278.3 L 1051.9,1285.0 L 1052.9,1295.0 L 1061.9,1290.0 Z" fill="#767676" stroke="#1c1c1c" stroke-width="0.6" stroke-linejoin="round"/>
<ellipse cx="744.2" cy="1269.2" rx="3.6" ry="3.2" fill="#f4f4f4" stroke="#222" stroke-width="0.6" transform="rotate(-35 744.2 1269.2)"/>
<ellipse cx="1051.4" cy="1269.2" rx="3.6" ry="3.2" fill="#f4f4f4" stroke="#222" stroke-width="0.6" transform="rotate(35 1051.4 1269.2)"/>
<polygon points="773.3,1289.2 778.3,1285.3 816.7,1275.8 821.7,1280.3 818.3,1282.0 777.5,1292.5" fill="#6e6e6e" stroke="#1c1c1c" stroke-width="0.6" stroke-linejoin="round"/>
<polygon points="1022.3,1289.2 1017.3,1285.3 978.9,1275.8 973.9,1280.3 977.3,1282.0 1018.1,1292.5" fill="#6e6e6e" stroke="#1c1c1c" stroke-width="0.6" stroke-linejoin="round"/>
<polygon points="847.5,1223.3 947.5,1223.3 947.5,1357.5 847.5,1357.5" fill="#c8c8c8" stroke="#1c1c1c" stroke-width="0.6" stroke-linejoin="round"/>
<polygon points="849.2,1224.2 946.7,1224.2 946.7,1238.7 849.2,1238.7" fill="#6c6c6c" stroke="#1c1c1c" stroke-width="0.6" stroke-linejoin="round"/>
<polygon points="849.2,1238.7 946.7,1238.7 946.7,1245.3 849.2,1245.3" fill="#9c9c9c" stroke="#1c1c1c" stroke-width="0.6" stroke-linejoin="round"/>
<polygon points="855.0,1245.3 940.8,1245.3 940.8,1357.0 855.0,1357.0" fill="#d6d6d6" stroke="#1c1c1c" stroke-width="0.6" stroke-linejoin="round"/>
<polygon points="848.3,1225.3 855.0,1227.0 855.0,1357.0 848.3,1355.3" fill="#bdbdbd" stroke="#1c1c1c" stroke-width="0.6" stroke-linejoin="round"/>
<polygon points="940.8,1227.0 947.5,1225.3 947.5,1355.3 940.8,1357.0" fill="#ececec" stroke="#1c1c1c" stroke-width="0.6" stroke-linejoin="round"/>
<ellipse cx="897.5" cy="1275.3" rx="9.6" ry="7" fill="#6a6a6a" stroke="#1a1a1a" stroke-width="0.7"/>
<ellipse cx="898.5" cy="1276.3" rx="5.76" ry="4.8999999999999995" fill="#858585"/>
<ellipse cx="897.5" cy="1297.5" rx="7" ry="5" fill="#6a6a6a" stroke="#1a1a1a" stroke-width="0.7"/>
<ellipse cx="898.5" cy="1298.5" rx="4.2" ry="3.5" fill="#858585"/>
<ellipse cx="897.5" cy="1319.2" rx="9.6" ry="7" fill="#6a6a6a" stroke="#1a1a1a" stroke-width="0.7"/>
<ellipse cx="898.5" cy="1320.2" rx="5.76" ry="4.8999999999999995" fill="#858585"/>
<polygon points="838.3,1237.0 847.5,1237.0 847.5,1357.5 838.3,1357.5" fill="#c0c0c0" stroke="#1c1c1c" stroke-width="0.6" stroke-linejoin="round"/>
<polygon points="957.3,1237.0 948.1,1237.0 948.1,1357.5 957.3,1357.5" fill="#c0c0c0" stroke="#1c1c1c" stroke-width="0.6" stroke-linejoin="round"/>
</svg></div>

<div class="abs" style="left:309px;top:843px;width:1230px;height:598px;overflow:hidden"><svg width="1230" height="598" viewBox="309 843 1230 598" style="left:0;top:0;filter:blur(.4px)" font-family="Liberation Sans, sans-serif">
<polyline points="702.6,911.1 808.0,987.0" fill="none" stroke="#e4e8f0" stroke-width="0.9" stroke-opacity="1"/>
<circle cx="808.0" cy="987.3" r="1.1" fill="#e33"/>
<circle cx="697.8" cy="906.3" r="7.2" fill="none" stroke="#e4e8f0" stroke-width=".9"/><circle cx="697.8" cy="906.3" r="4.6" fill="none" stroke="#e4e8f0" stroke-width=".9"/>
<polyline points="687.7,907.0 691.0,907.0" fill="none" stroke="#e4e8f0" stroke-width="0.9" stroke-opacity="1"/>
<rect x="599.1" y="906.7" width="23.2" height="14.2" fill="none" stroke="#e4e8f0" stroke-width="0.9"/>
<rect x="622.3" y="906.7" width="28.8" height="14.2" fill="none" stroke="#e4e8f0" stroke-width="0.9"/>
<rect x="651.1" y="906.7" width="12.2" height="14.2" fill="none" stroke="#e4e8f0" stroke-width="0.9"/>
<rect x="663.3" y="906.7" width="12.1" height="14.2" fill="none" stroke="#e4e8f0" stroke-width="0.9"/>
<rect x="675.4" y="906.7" width="12.3" height="14.2" fill="none" stroke="#e4e8f0" stroke-width="0.9"/>
<path d="M601.5 917.4 A9.25 8.2 0 0 1 620 917.4 Z" fill="none" stroke="#e4e8f0" stroke-width=".9"/>
<text x="623.9" y="917.9" font-size="10.4" fill="#e4e8f0" textLength="25.2" lengthAdjust="spacingAndGlyphs">.010</text>
<text x="653.0" y="917.9" font-size="10.4" fill="#e4e8f0" textLength="8.8" lengthAdjust="spacingAndGlyphs">A</text>
<text x="664.7" y="917.9" font-size="10.4" fill="#e4e8f0" textLength="8.2" lengthAdjust="spacingAndGlyphs">B</text>
<text x="676.8" y="917.9" font-size="10.4" fill="#e4e8f0" textLength="8.7" lengthAdjust="spacingAndGlyphs">C</text>
<polyline points="568.4,994.8 576.2,994.8 632.6,1071.6" fill="none" stroke="#e4e8f0" stroke-width="0.9" stroke-opacity="1"/>
<line x1="481.2" y1="999.4" x2="491.8" y2="990.5" stroke="#e4e8f0" stroke-width="0.8"/>
<text x="458.5" y="998.7" font-size="10.2" fill="#e4e8f0" textLength="108.0" lengthAdjust="spacingAndGlyphs">4 X Ø .2515 ± .005</text>
<rect x="456.5" y="1002.6" width="18.5" height="28.2" fill="none" stroke="#e4e8f0" stroke-width="0.9"/>
<rect x="475.0" y="1002.6" width="53.5" height="14.2" fill="none" stroke="#e4e8f0" stroke-width="0.9"/>
<rect x="528.5" y="1002.6" width="12.3" height="14.2" fill="none" stroke="#e4e8f0" stroke-width="0.9"/>
<rect x="540.8" y="1002.6" width="12.0" height="14.2" fill="none" stroke="#e4e8f0" stroke-width="0.9"/>
<rect x="552.8" y="1002.6" width="12.7" height="14.2" fill="none" stroke="#e4e8f0" stroke-width="0.9"/>
<rect x="475.0" y="1016.8" width="53.5" height="14.0" fill="none" stroke="#e4e8f0" stroke-width="0.9"/>
<rect x="528.5" y="1016.8" width="12.7" height="14.0" fill="none" stroke="#e4e8f0" stroke-width="0.9"/>
<circle cx="465.3" cy="1016.8" r="3.4" fill="none" stroke="#e4e8f0" stroke-width="0.9"/>
<polyline points="460.3,1016.8 470.3,1016.8" fill="none" stroke="#e4e8f0" stroke-width="0.9" stroke-opacity="1"/>
<polyline points="465.3,1011.8 465.3,1021.8" fill="none" stroke="#e4e8f0" stroke-width="0.9" stroke-opacity="1"/>
<line x1="477.3" y1="1014.9" x2="488.0" y2="1005.9" stroke="#e4e8f0" stroke-width="0.8"/>
<text x="477.5" y="1014.2" font-size="10.4" fill="#e4e8f0" textLength="35.5" lengthAdjust="spacingAndGlyphs">Ø.010</text>
<circle cx="519.8" cy="1009.8" r="5.2" fill="none" stroke="#e4e8f0" stroke-width=".8"/>
<text x="519.8" y="1012.4" font-size="7" fill="#e4e8f0" text-anchor="middle">M</text>
<text x="530.5" y="1014.2" font-size="10.4" fill="#e4e8f0" textLength="8.1" lengthAdjust="spacingAndGlyphs">A</text>
<text x="542.7" y="1014.2" font-size="10.4" fill="#e4e8f0" textLength="8.2" lengthAdjust="spacingAndGlyphs">B</text>
<text x="555.2" y="1014.2" font-size="10.4" fill="#e4e8f0" textLength="8.3" lengthAdjust="spacingAndGlyphs">C</text>
<line x1="477.3" y1="1028.9" x2="488.0" y2="1019.9" stroke="#e4e8f0" stroke-width="0.8"/>
<text x="477.5" y="1028.2" font-size="10.4" fill="#e4e8f0" textLength="35.5" lengthAdjust="spacingAndGlyphs">Ø.005</text>
<circle cx="519.8" cy="1023.8" r="5.2" fill="none" stroke="#e4e8f0" stroke-width=".8"/>
<text x="519.8" y="1026.4" font-size="7" fill="#e4e8f0" text-anchor="middle">M</text>
<text x="530.5" y="1028.2" font-size="10.4" fill="#e4e8f0" textLength="8.1" lengthAdjust="spacingAndGlyphs">A</text>
<polyline points="536.7,1069.3 546.0,1069.3 595.6,1095.0" fill="none" stroke="#e4e8f0" stroke-width="0.9" stroke-opacity="1"/>
<polyline points="595.6,1095.0 620.0,1111.5" fill="none" stroke="#e4e8f0" stroke-width="0.8" stroke-opacity="0.45"/>
<polyline points="632.6,1071.6 645.0,1091.0" fill="none" stroke="#e4e8f0" stroke-width="0.8" stroke-opacity="0.45"/>
<rect x="463.0" y="1069.7" width="21.4" height="14.2" fill="none" stroke="#e4e8f0" stroke-width="0.9"/>
<rect x="484.4" y="1069.7" width="39.8" height="14.2" fill="none" stroke="#e4e8f0" stroke-width="0.9"/>
<rect x="524.2" y="1069.7" width="12.5" height="14.2" fill="none" stroke="#e4e8f0" stroke-width="0.9"/>
<polyline points="474.0,1072.6 474.0,1080.4" fill="none" stroke="#e4e8f0" stroke-width="1" stroke-opacity="1"/>
<polyline points="466.3,1080.4 481.8,1080.4" fill="none" stroke="#e4e8f0" stroke-width="1" stroke-opacity="1"/>
<line x1="487.1" y1="1081.7" x2="497.5" y2="1072.7" stroke="#e4e8f0" stroke-width="0.8"/>
<text x="487.3" y="1081.0" font-size="10.4" fill="#e4e8f0" textLength="34.4" lengthAdjust="spacingAndGlyphs">Ø.005</text>
<text x="526.0" y="1081.0" font-size="10.4" fill="#e4e8f0" textLength="8.4" lengthAdjust="spacingAndGlyphs">A</text>
<polyline points="473.1,1083.9 473.1,1087.8" fill="none" stroke="#e4e8f0" stroke-width="0.9" stroke-opacity="1"/>
<rect x="463.0" y="1087.8" width="20.2" height="14.4" fill="none" stroke="#e4e8f0" stroke-width="0.9"/>
<text x="469.2" y="1098.9" font-size="10.4" fill="#e4e8f0" textLength="7.8" lengthAdjust="spacingAndGlyphs">B</text>
<polyline points="629.4,1326.0 636.2,1326.0 715.0,1259.0" fill="none" stroke="#e4e8f0" stroke-width="0.9" stroke-opacity="1"/>
<line x1="545.0" y1="1330.0" x2="555.5" y2="1321.1" stroke="#e4e8f0" stroke-width="0.8"/>
<text x="522.4" y="1329.3" font-size="10.2" fill="#e4e8f0" textLength="100.2" lengthAdjust="spacingAndGlyphs">2 X Ø .25 ± 0.005</text>
<rect x="520.4" y="1332.3" width="19.1" height="14.2" fill="none" stroke="#e4e8f0" stroke-width="0.9"/>
<rect x="539.5" y="1332.3" width="53.9" height="14.2" fill="none" stroke="#e4e8f0" stroke-width="0.9"/>
<rect x="593.4" y="1332.3" width="12.2" height="14.2" fill="none" stroke="#e4e8f0" stroke-width="0.9"/>
<rect x="605.6" y="1332.3" width="11.7" height="14.2" fill="none" stroke="#e4e8f0" stroke-width="0.9"/>
<rect x="617.3" y="1332.3" width="12.7" height="14.2" fill="none" stroke="#e4e8f0" stroke-width="0.9"/>
<rect x="520.4" y="1346.5" width="19.1" height="14.4" fill="none" stroke="#e4e8f0" stroke-width="0.9"/>
<rect x="539.5" y="1346.5" width="53.9" height="14.4" fill="none" stroke="#e4e8f0" stroke-width="0.9"/>
<rect x="593.4" y="1346.5" width="12.2" height="14.4" fill="none" stroke="#e4e8f0" stroke-width="0.9"/>
<rect x="605.6" y="1346.5" width="12.1" height="14.4" fill="none" stroke="#e4e8f0" stroke-width="0.9"/>
<circle cx="529.6" cy="1339.6" r="3.4" fill="none" stroke="#e4e8f0" stroke-width="0.9"/>
<polyline points="524.6,1339.6 534.6,1339.6" fill="none" stroke="#e4e8f0" stroke-width="0.9" stroke-opacity="1"/>
<polyline points="529.6,1334.6 529.6,1344.6" fill="none" stroke="#e4e8f0" stroke-width="0.9" stroke-opacity="1"/>
<circle cx="529.6" cy="1353.8" r="3.4" fill="none" stroke="#e4e8f0" stroke-width="0.9"/>
<polyline points="524.6,1353.8 534.6,1353.8" fill="none" stroke="#e4e8f0" stroke-width="0.9" stroke-opacity="1"/>
<polyline points="529.6,1348.8 529.6,1358.8" fill="none" stroke="#e4e8f0" stroke-width="0.9" stroke-opacity="1"/>
<line x1="541.6" y1="1345.0" x2="551.9" y2="1336.0" stroke="#e4e8f0" stroke-width="0.8"/>
<text x="541.8" y="1344.3" font-size="10.4" fill="#e4e8f0" textLength="34.1" lengthAdjust="spacingAndGlyphs">Ø.010</text>
<circle cx="584.0" cy="1339.6" r="5.2" fill="none" stroke="#e4e8f0" stroke-width=".8"/>
<text x="584.0" y="1342.2" font-size="7" fill="#e4e8f0" text-anchor="middle">M</text>
<text x="595.3" y="1344.3" font-size="10.4" fill="#e4e8f0" textLength="7.8" lengthAdjust="spacingAndGlyphs">A</text>
<text x="607.0" y="1344.3" font-size="10.4" fill="#e4e8f0" textLength="7.8" lengthAdjust="spacingAndGlyphs">B</text>
<text x="619.1" y="1344.3" font-size="10.4" fill="#e4e8f0" textLength="8.3" lengthAdjust="spacingAndGlyphs">C</text>
<line x1="541.6" y1="1359.2" x2="551.9" y2="1350.2" stroke="#e4e8f0" stroke-width="0.8"/>
<text x="541.8" y="1358.5" font-size="10.4" fill="#e4e8f0" textLength="34.1" lengthAdjust="spacingAndGlyphs">Ø.005</text>
<circle cx="584.0" cy="1353.8" r="5.2" fill="none" stroke="#e4e8f0" stroke-width=".8"/>
<text x="584.0" y="1356.4" font-size="7" fill="#e4e8f0" text-anchor="middle">M</text>
<text x="595.3" y="1358.5" font-size="10.4" fill="#e4e8f0" textLength="7.8" lengthAdjust="spacingAndGlyphs">A</text>
<text x="607.0" y="1358.5" font-size="10.4" fill="#e4e8f0" textLength="7.8" lengthAdjust="spacingAndGlyphs">B</text>
<polyline points="704.7,1354.6 714.0,1354.6 756.8,1312.8" fill="none" stroke="#e4e8f0" stroke-width="0.9" stroke-opacity="1"/>
<rect x="652.7" y="1354.2" width="22.4" height="14.4" fill="none" stroke="#e4e8f0" stroke-width="0.9"/>
<rect x="675.1" y="1354.2" width="29.6" height="14.4" fill="none" stroke="#e4e8f0" stroke-width="0.9"/>
<polyline points="656.6,1365.3 661.5,1358.5 672.2,1358.5 667.3,1365.3 656.6,1365.3" fill="none" stroke="#e4e8f0" stroke-width="0.9" stroke-opacity="1"/>
<text x="677.4" y="1365.7" font-size="10.4" fill="#e4e8f0" textLength="24.0" lengthAdjust="spacingAndGlyphs">.005</text>
<polyline points="663.4,1368.6 663.4,1372.5" fill="none" stroke="#e4e8f0" stroke-width="0.9" stroke-opacity="1"/>
<rect x="652.7" y="1372.5" width="20.8" height="14.2" fill="none" stroke="#e4e8f0" stroke-width="0.9"/>
<text x="658.6" y="1383.4" font-size="10.4" fill="#e4e8f0" textLength="8.7" lengthAdjust="spacingAndGlyphs">A</text>
<polyline points="1027.2,893.3 1019.5,893.3 962.0,963.0" fill="none" stroke="#e4e8f0" stroke-width="0.9" stroke-opacity="1"/>
<line x1="1057.4" y1="898.5" x2="1067.8" y2="889.6" stroke="#e4e8f0" stroke-width="0.8"/>
<text x="1028.0" y="897.8" font-size="10.2" fill="#e4e8f0" textLength="64.1" lengthAdjust="spacingAndGlyphs">16 X Ø.164</text>
<text x="1096.8" y="890.8" font-size="7" fill="#e4e8f0" textLength="23.0" lengthAdjust="spacingAndGlyphs">+.005</text>
<text x="1096.8" y="903.0" font-size="7" fill="#e4e8f0" textLength="23.0" lengthAdjust="spacingAndGlyphs">−.001</text>
<rect x="1025.4" y="906.3" width="18.2" height="28.0" fill="none" stroke="#e4e8f0" stroke-width="0.9"/>
<rect x="1043.6" y="906.3" width="39.4" height="14.3" fill="none" stroke="#e4e8f0" stroke-width="0.9"/>
<rect x="1083.0" y="906.3" width="12.5" height="14.3" fill="none" stroke="#e4e8f0" stroke-width="0.9"/>
<rect x="1095.5" y="906.3" width="11.4" height="14.3" fill="none" stroke="#e4e8f0" stroke-width="0.9"/>
<rect x="1106.9" y="906.3" width="12.9" height="14.3" fill="none" stroke="#e4e8f0" stroke-width="0.9"/>
<rect x="1043.6" y="920.6" width="39.4" height="13.7" fill="none" stroke="#e4e8f0" stroke-width="0.9"/>
<circle cx="1033.7" cy="919.8" r="3.4" fill="none" stroke="#e4e8f0" stroke-width="0.9"/>
<polyline points="1028.7,919.8 1038.7,919.8" fill="none" stroke="#e4e8f0" stroke-width="0.9" stroke-opacity="1"/>
<polyline points="1033.7,914.8 1033.7,924.8" fill="none" stroke="#e4e8f0" stroke-width="0.9" stroke-opacity="1"/>
<line x1="1046.0" y1="918.7" x2="1056.5" y2="909.7" stroke="#e4e8f0" stroke-width="0.8"/>
<text x="1046.2" y="918.0" font-size="10.4" fill="#e4e8f0" textLength="34.7" lengthAdjust="spacingAndGlyphs">Ø.024</text>
<text x="1085.0" y="918.0" font-size="10.4" fill="#e4e8f0" textLength="8.4" lengthAdjust="spacingAndGlyphs">A</text>
<text x="1097.3" y="918.0" font-size="10.4" fill="#e4e8f0" textLength="7.7" lengthAdjust="spacingAndGlyphs">B</text>
<text x="1109.0" y="918.0" font-size="10.4" fill="#e4e8f0" textLength="9.0" lengthAdjust="spacingAndGlyphs">C</text>
<line x1="1046.0" y1="932.2" x2="1056.5" y2="923.2" stroke="#e4e8f0" stroke-width="0.8"/>
<text x="1046.2" y="931.5" font-size="10.4" fill="#e4e8f0" textLength="34.7" lengthAdjust="spacingAndGlyphs">Ø.010</text>
<polyline points="1233.0,993.2 1225.7,993.2 1150.5,1068.4" fill="none" stroke="#e4e8f0" stroke-width="0.9" stroke-opacity="1"/>
<line x1="1256.0" y1="998.3" x2="1266.5" y2="989.4" stroke="#e4e8f0" stroke-width="0.8"/>
<text x="1233.5" y="997.6" font-size="10.2" fill="#e4e8f0" textLength="60.9" lengthAdjust="spacingAndGlyphs">8 X Ø .344</text>
<text x="1303.0" y="990.6" font-size="7" fill="#e4e8f0" textLength="23.3" lengthAdjust="spacingAndGlyphs">+.003</text>
<text x="1303.0" y="1002.3" font-size="7" fill="#e4e8f0" textLength="23.3" lengthAdjust="spacingAndGlyphs">−.001</text>
<rect x="1231.4" y="1005.4" width="18.1" height="28.0" fill="none" stroke="#e4e8f0" stroke-width="0.9"/>
<rect x="1249.5" y="1005.4" width="57.9" height="14.3" fill="none" stroke="#e4e8f0" stroke-width="0.9"/>
<rect x="1307.4" y="1005.4" width="12.2" height="14.3" fill="none" stroke="#e4e8f0" stroke-width="0.9"/>
<rect x="1319.6" y="1005.4" width="25.9" height="14.3" fill="none" stroke="#e4e8f0" stroke-width="0.9"/>
<rect x="1345.5" y="1005.4" width="14.3" height="14.3" fill="none" stroke="#e4e8f0" stroke-width="0.9"/>
<rect x="1249.5" y="1019.7" width="57.9" height="13.7" fill="none" stroke="#e4e8f0" stroke-width="0.9"/>
<rect x="1307.4" y="1019.7" width="13.0" height="13.7" fill="none" stroke="#e4e8f0" stroke-width="0.9"/>
<circle cx="1240.0" cy="1019.2" r="3.4" fill="none" stroke="#e4e8f0" stroke-width="0.9"/>
<polyline points="1235.0,1019.2 1245.0,1019.2" fill="none" stroke="#e4e8f0" stroke-width="0.9" stroke-opacity="1"/>
<polyline points="1240.0,1014.2 1240.0,1024.2" fill="none" stroke="#e4e8f0" stroke-width="0.9" stroke-opacity="1"/>
<line x1="1254.5" y1="1018.0" x2="1264.9" y2="1009.0" stroke="#e4e8f0" stroke-width="0.8"/>
<text x="1254.7" y="1017.3" font-size="10.4" fill="#e4e8f0" textLength="34.5" lengthAdjust="spacingAndGlyphs">Ø.012</text>
<circle cx="1297.8" cy="1012.7" r="5.2" fill="none" stroke="#e4e8f0" stroke-width=".8"/>
<text x="1297.8" y="1015.3" font-size="7" fill="#e4e8f0" text-anchor="middle">M</text>
<text x="1310.0" y="1017.3" font-size="10.4" fill="#e4e8f0" textLength="7.8" lengthAdjust="spacingAndGlyphs">A</text>
<text x="1322.4" y="1017.3" font-size="10.4" fill="#e4e8f0" textLength="7.0" lengthAdjust="spacingAndGlyphs">B</text>
<circle cx="1337.2" cy="1012.7" r="4.8" fill="none" stroke="#e4e8f0" stroke-width=".8"/>
<text x="1337.2" y="1015.3" font-size="7" fill="#e4e8f0" text-anchor="middle">M</text>
<text x="1348.1" y="1017.3" font-size="10.4" fill="#e4e8f0" textLength="8.6" lengthAdjust="spacingAndGlyphs">C</text>
<line x1="1254.5" y1="1031.5" x2="1264.9" y2="1022.5" stroke="#e4e8f0" stroke-width="0.8"/>
<text x="1254.7" y="1030.8" font-size="10.4" fill="#e4e8f0" textLength="34.5" lengthAdjust="spacingAndGlyphs">Ø.005</text>
<circle cx="1297.8" cy="1026.4" r="5.2" fill="none" stroke="#e4e8f0" stroke-width=".8"/>
<text x="1297.8" y="1029.0" font-size="7" fill="#e4e8f0" text-anchor="middle">M</text>
<text x="1310.0" y="1030.8" font-size="10.4" fill="#e4e8f0" textLength="7.8" lengthAdjust="spacingAndGlyphs">A</text>
<polyline points="1150.5,1068.4 1120.0,1102.0" fill="none" stroke="#e4e8f0" stroke-width="0.8" stroke-opacity="0.45"/>
<polyline points="1262.0,1078.8 1252.9,1078.8 1154.3,1122.9" fill="none" stroke="#e4e8f0" stroke-width="0.9" stroke-opacity="1"/>
<circle cx="1153.5" cy="1122.5" r="1.2" fill="#e33"/>
<rect x="1262.0" y="1078.8" width="16.3" height="14.3" fill="none" stroke="#e4e8f0" stroke-width="0.9"/>
<rect x="1278.3" y="1078.8" width="41.3" height="14.3" fill="none" stroke="#e4e8f0" stroke-width="0.9"/>
<rect x="1319.6" y="1078.8" width="11.7" height="14.3" fill="none" stroke="#e4e8f0" stroke-width="0.9"/>
<rect x="1331.3" y="1078.8" width="26.7" height="14.3" fill="none" stroke="#e4e8f0" stroke-width="0.9"/>
<circle cx="1269.8" cy="1085.8" r="3.4" fill="none" stroke="#e4e8f0" stroke-width="0.9"/>
<polyline points="1264.8,1085.8 1274.8,1085.8" fill="none" stroke="#e4e8f0" stroke-width="0.9" stroke-opacity="1"/>
<polyline points="1269.8,1080.8 1269.8,1090.8" fill="none" stroke="#e4e8f0" stroke-width="0.9" stroke-opacity="1"/>
<line x1="1282.5" y1="1091.2" x2="1292.7" y2="1082.2" stroke="#e4e8f0" stroke-width="0.8"/>
<text x="1282.7" y="1090.5" font-size="10.4" fill="#e4e8f0" textLength="33.8" lengthAdjust="spacingAndGlyphs">Ø.005</text>
<text x="1321.7" y="1090.5" font-size="10.4" fill="#e4e8f0" textLength="7.7" lengthAdjust="spacingAndGlyphs">A</text>
<text x="1333.3" y="1090.5" font-size="10.4" fill="#e4e8f0" textLength="7.0" lengthAdjust="spacingAndGlyphs">B</text>
<circle cx="1348.9" cy="1085.8" r="4.8" fill="none" stroke="#e4e8f0" stroke-width=".8"/>
<text x="1348.9" y="1088.4" font-size="7" fill="#e4e8f0" text-anchor="middle">M</text>
<polyline points="1271.6,1093.1 1271.6,1097.8" fill="none" stroke="#e4e8f0" stroke-width="0.9" stroke-opacity="1"/>
<rect x="1262.0" y="1097.8" width="20.2" height="13.4" fill="none" stroke="#e4e8f0" stroke-width="0.9"/>
<text x="1267.2" y="1108.1" font-size="10.4" fill="#e4e8f0" textLength="9.1" lengthAdjust="spacingAndGlyphs">C</text>
<polyline points="1126.8,1318.4 1121.0,1318.4 1072.4,1281.4" fill="none" stroke="#e4e8f0" stroke-width="0.9" stroke-opacity="1"/>
<line x1="1150.4" y1="1323.9" x2="1161.0" y2="1315.0" stroke="#e4e8f0" stroke-width="0.8"/>
<text x="1127.8" y="1323.2" font-size="10.2" fill="#e4e8f0" textLength="93.4" lengthAdjust="spacingAndGlyphs">2 X Ø .25 ± .005</text>
<rect x="1125.9" y="1326.1" width="19.4" height="14.3" fill="none" stroke="#e4e8f0" stroke-width="0.9"/>
<rect x="1145.3" y="1326.1" width="54.1" height="14.3" fill="none" stroke="#e4e8f0" stroke-width="0.9"/>
<rect x="1199.4" y="1326.1" width="12.1" height="14.3" fill="none" stroke="#e4e8f0" stroke-width="0.9"/>
<rect x="1211.5" y="1326.1" width="11.3" height="14.3" fill="none" stroke="#e4e8f0" stroke-width="0.9"/>
<rect x="1222.8" y="1326.1" width="13.0" height="14.3" fill="none" stroke="#e4e8f0" stroke-width="0.9"/>
<rect x="1125.9" y="1340.4" width="19.4" height="14.3" fill="none" stroke="#e4e8f0" stroke-width="0.9"/>
<rect x="1145.3" y="1340.4" width="54.1" height="14.3" fill="none" stroke="#e4e8f0" stroke-width="0.9"/>
<rect x="1199.4" y="1340.4" width="12.1" height="14.3" fill="none" stroke="#e4e8f0" stroke-width="0.9"/>
<rect x="1211.5" y="1340.4" width="11.3" height="14.3" fill="none" stroke="#e4e8f0" stroke-width="0.9"/>
<circle cx="1134.2" cy="1333.5" r="3.4" fill="none" stroke="#e4e8f0" stroke-width="0.9"/>
<polyline points="1129.2,1333.5 1139.2,1333.5" fill="none" stroke="#e4e8f0" stroke-width="0.9" stroke-opacity="1"/>
<polyline points="1134.2,1328.5 1134.2,1338.5" fill="none" stroke="#e4e8f0" stroke-width="0.9" stroke-opacity="1"/>
<circle cx="1134.2" cy="1347.5" r="3.4" fill="none" stroke="#e4e8f0" stroke-width="0.9"/>
<polyline points="1129.2,1347.5 1139.2,1347.5" fill="none" stroke="#e4e8f0" stroke-width="0.9" stroke-opacity="1"/>
<polyline points="1134.2,1342.5 1134.2,1352.5" fill="none" stroke="#e4e8f0" stroke-width="0.9" stroke-opacity="1"/>
<line x1="1147.1" y1="1338.1" x2="1157.4" y2="1329.1" stroke="#e4e8f0" stroke-width="0.8"/>
<text x="1147.3" y="1337.4" font-size="10.4" fill="#e4e8f0" textLength="34.0" lengthAdjust="spacingAndGlyphs">Ø.010</text>
<circle cx="1189.1" cy="1333.5" r="5.2" fill="none" stroke="#e4e8f0" stroke-width=".8"/>
<text x="1189.1" y="1336.1" font-size="7" fill="#e4e8f0" text-anchor="middle">M</text>
<text x="1200.8" y="1337.4" font-size="10.4" fill="#e4e8f0" textLength="7.8" lengthAdjust="spacingAndGlyphs">A</text>
<text x="1213.0" y="1337.4" font-size="10.4" fill="#e4e8f0" textLength="7.6" lengthAdjust="spacingAndGlyphs">B</text>
<text x="1224.5" y="1337.4" font-size="10.4" fill="#e4e8f0" textLength="8.4" lengthAdjust="spacingAndGlyphs">C</text>
<line x1="1147.1" y1="1352.1" x2="1157.4" y2="1343.1" stroke="#e4e8f0" stroke-width="0.8"/>
<text x="1147.3" y="1351.4" font-size="10.4" fill="#e4e8f0" textLength="34.0" lengthAdjust="spacingAndGlyphs">Ø.005</text>
<circle cx="1189.1" cy="1347.5" r="5.2" fill="none" stroke="#e4e8f0" stroke-width=".8"/>
<text x="1189.1" y="1350.1" font-size="7" fill="#e4e8f0" text-anchor="middle">M</text>
<text x="1200.8" y="1351.4" font-size="10.4" fill="#e4e8f0" textLength="7.8" lengthAdjust="spacingAndGlyphs">A</text>
<text x="1213.0" y="1351.4" font-size="10.4" fill="#e4e8f0" textLength="7.6" lengthAdjust="spacingAndGlyphs">B</text>
<polyline points="1443.9,1425.8 1520.8,1425.8" fill="none" stroke="#e4e8f0" stroke-width="1.2" stroke-opacity="1"/>
<polyline points="1443.9,1417.2 1443.9,1433.8" fill="none" stroke="#e4e8f0" stroke-width="1.2" stroke-opacity="1"/>
<polyline points="1520.8,1417.2 1520.8,1433.8" fill="none" stroke="#e4e8f0" stroke-width="1.2" stroke-opacity="1"/>
<text x="1482.6" y="1424" font-size="8.2" font-weight="bold" fill="#e4e8f0" text-anchor="middle">1.4778 in</text><text x="1482.6" y="1433.2" font-size="7.6" font-weight="bold" fill="#e4e8f0" text-anchor="middle">Inch</text>
<g><path d="M353 1403.600V1382" stroke="#1414d8" stroke-width="1.800"/><path d="M353 1378l2.400 6h-4.800z" fill="#1414c0"/><path d="M353 1392l1.500-4" stroke="#2a9a2a" stroke-width="1.600"/><path d="M353 1403.600h20" stroke="#c02a1a" stroke-width="1.300"/><path d="M379 1403.600l-8-2.300v4.600z" fill="#c02a1a"/><text x="350" y="1383" font-size="7" font-weight="bold" fill="#3aaa3a">Y</text><text x="350.500" y="1391" font-size="6.500" font-weight="bold" fill="#2222ee">Z</text><text x="383.500" y="1407" font-size="8.500" font-weight="bold" fill="#d02010">x</text></g>
</svg></div>
<svg width="1542" height="12" viewBox="0 1440 1542 12" style="left:0;top:1440px;filter:blur(.4px)" font-family="Liberation Sans, sans-serif"><text x="723.5" y="1451.2" font-size="8.200" fill="#c4d0ea" textLength="80.3" lengthAdjust="spacingAndGlyphs">SECTION VIEW: OFF</text><text x="819" y="1451.2" font-size="8.200" fill="#c4d0ea" textLength="87.4" lengthAdjust="spacingAndGlyphs">SELECTED ENTITIES: 0</text><text x="958.3" y="1451.2" font-size="8.200" fill="#c4d0ea" textLength="7.7" lengthAdjust="spacingAndGlyphs">X:</text><text x="973" y="1451.2" font-size="8.200" fill="#c4d0ea" textLength="39.4" lengthAdjust="spacingAndGlyphs">-11.26938</text><text x="1033" y="1451.2" font-size="8.200" fill="#c4d0ea" textLength="7.0" lengthAdjust="spacingAndGlyphs">Y:</text><text x="1047.9" y="1451.2" font-size="8.200" fill="#c4d0ea" textLength="30.1" lengthAdjust="spacingAndGlyphs">4.11792</text><text x="1103" y="1451.2" font-size="8.200" fill="#c4d0ea" textLength="7.0" lengthAdjust="spacingAndGlyphs">Z:</text><text x="1119.4" y="1451.2" font-size="8.200" fill="#c4d0ea" textLength="31.2" lengthAdjust="spacingAndGlyphs">0.00000</text><text x="1170.8" y="1451.2" font-size="8.200" fill="#c4d0ea" textLength="10.2" lengthAdjust="spacingAndGlyphs">3D</text><text x="1192.6" y="1451.2" font-size="8.200" fill="#c4d0ea" textLength="50.8" lengthAdjust="spacingAndGlyphs">CPLANE: Top</text><text x="1262.5" y="1451.2" font-size="8.200" fill="#c4d0ea" textLength="50.3" lengthAdjust="spacingAndGlyphs">TPLANE: Top</text><text x="1332.4" y="1451.2" font-size="8.200" fill="#c4d0ea" textLength="38.3" lengthAdjust="spacingAndGlyphs">WCS: Top</text><circle cx="1160" cy="1449.5" r=".8" fill="#8ea2d4"/><circle cx="1252" cy="1449.5" r=".8" fill="#8ea2d4"/><circle cx="1322" cy="1449.5" r=".8" fill="#8ea2d4"/><circle cx="1381" cy="1449.5" r=".8" fill="#8ea2d4"/><rect x="1457" y="1441" width="24" height="11" fill="#2a62c8"/><circle cx="1401.8" cy="1449.500" r="4.600" fill="none" stroke="#e8ecf6" stroke-width="1.100"/><path d="M1397.2 1449.500h9.200M1401.8 1445v7" stroke="#e8ecf6" stroke-width=".9"/><circle cx="1423.7" cy="1449.500" r="4.600" fill="none" stroke="#e8ecf6" stroke-width="1.100"/><path d="M1419.1000000000001 1449.500h9.200M1423.7 1445v7" stroke="#e8ecf6" stroke-width=".9"/><circle cx="1445.5" cy="1449.500" r="4.600" fill="none" stroke="#e8ecf6" stroke-width="1.100"/><path d="M1440.9 1449.500h9.200M1445.5 1445v7" stroke="#e8ecf6" stroke-width=".9"/><circle cx="1469" cy="1450" r="4.800" fill="#dfe3ea"/><circle cx="1490.8" cy="1450" r="4.800" fill="#dfe3ea"/><circle cx="1513.8" cy="1450" r="4.800" fill="#dfe3ea"/><path d="M1510.3999999999999 1453.400l6.800-6.800" stroke="#444" stroke-width="2"/><path d="M1531 1451v-2.500M1534 1451v-4.500" stroke="#8ea2d4" stroke-width="1"/></svg>

</body></html>
